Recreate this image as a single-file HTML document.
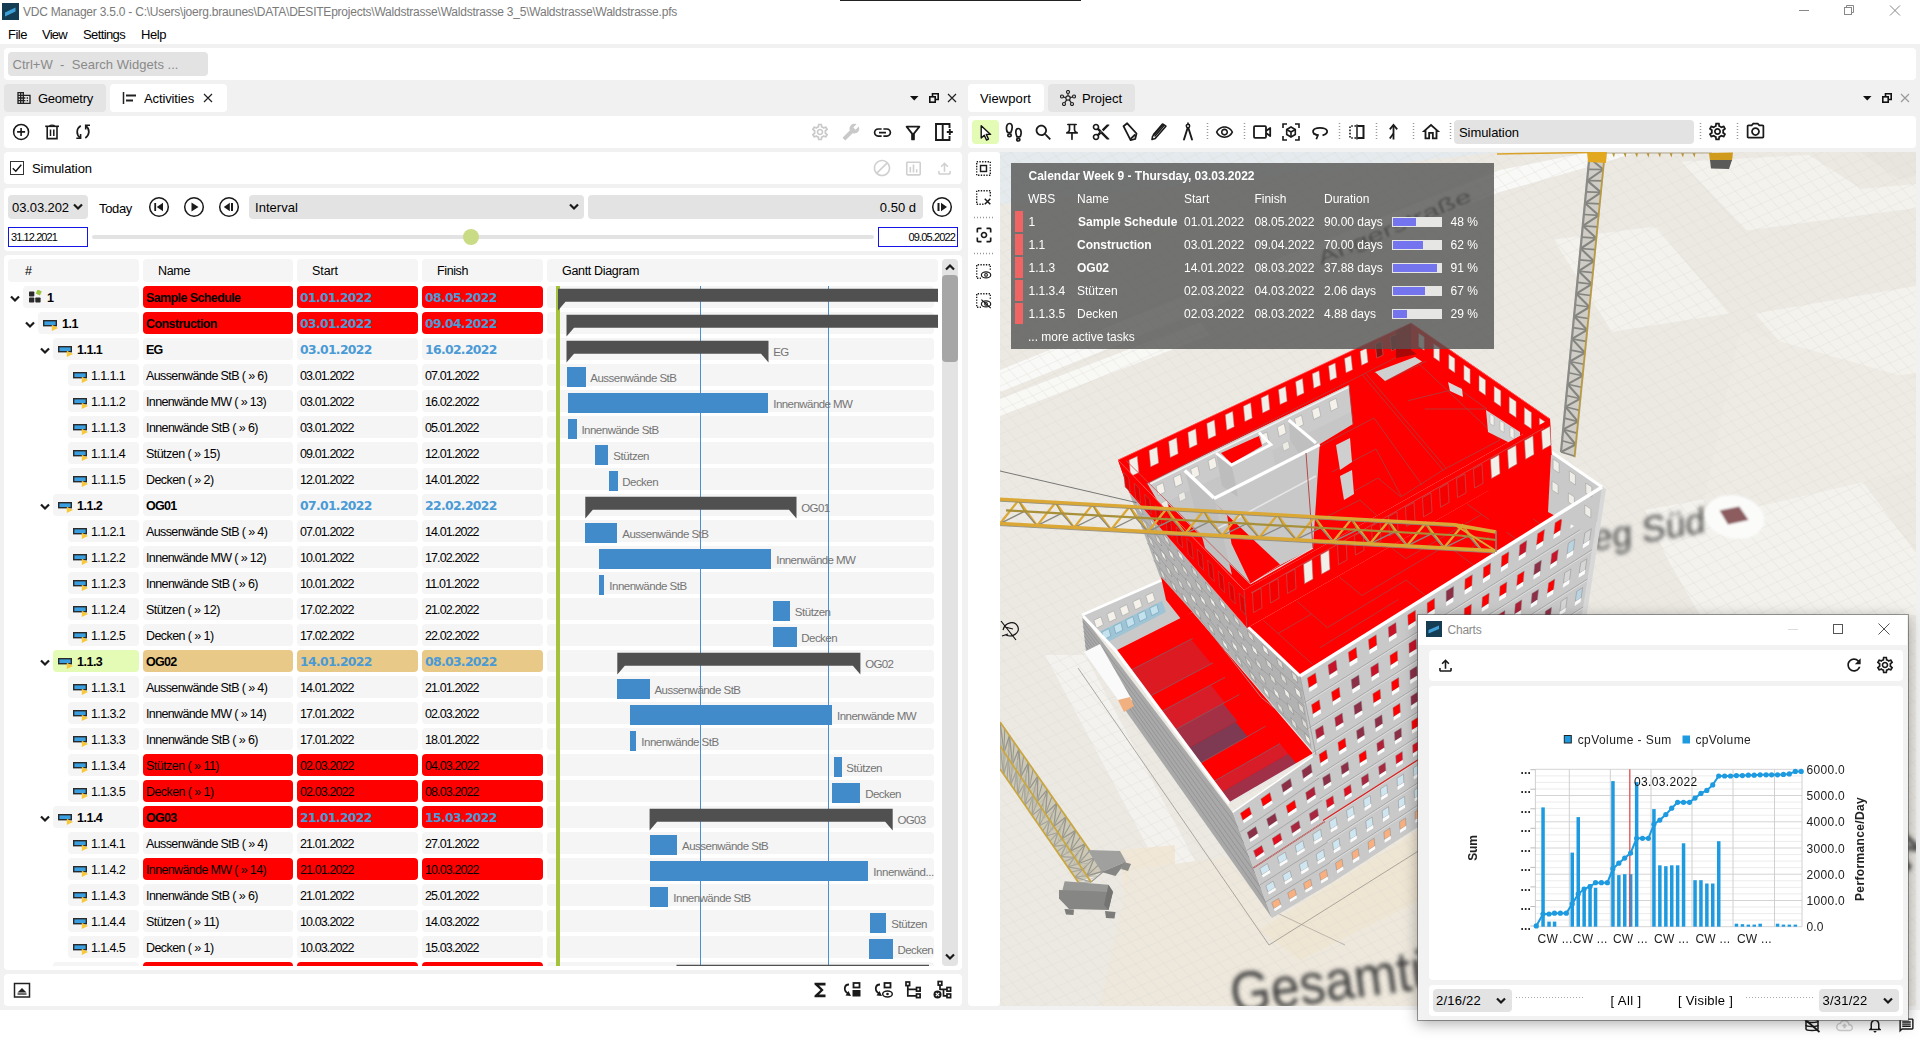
<!DOCTYPE html>
<html><head><meta charset="utf-8"><title>VDC Manager</title>
<style>
html,body{margin:0;padding:0}
body{width:1920px;height:1040px;position:relative;overflow:hidden;background:#f1f1f1;font-family:"Liberation Sans",sans-serif;font-size:12px;color:#000}
div,span,svg{position:absolute}
span{white-space:pre}
.clip{overflow:hidden}
</style></head><body>
<div style="left:0px;top:0px;width:1920px;height:44px;background:#ffffff;"></div>
<div style="left:840px;top:0px;width:241px;height:1px;background:#222;"></div>
<svg style="left:2px;top:3px;" width="17" height="17" viewBox="0 0 17 17"><rect width="17" height="17" fill="#143c52"/><path d="M3 9.5 L13.5 4.5 L13.5 8.5 L3 13.5Z" fill="#3fa0d8"/></svg>
<span style="left:23px;top:3.5px;font-size:12px;line-height:16px;color:#7a7a7a;letter-spacing:-0.226px;">VDC Manager 3.5.0 - C:\Users\joerg.braunes\DATA\DESITEprojects\Waldstrasse\Waldstrasse 3_5\Waldstrasse\Waldstrasse.pfs</span>
<svg style="left:1790px;top:0px;" width="120" height="22" viewBox="0 0 120 22"><g fill="none" stroke="#888" stroke-width="1"><path d="M9 10.5h10"/><rect x="54.5" y="7.500" width="7" height="7"/><path d="M56.500 7.500v-2h7v7h-2"/><path d="M100 5.500l10 10M110 5.500l-10 10"/></g></svg>
<span style="left:8px;top:25.5px;font-size:13px;line-height:17px;letter-spacing:-0.487px;">File</span>
<span style="left:42px;top:25.5px;font-size:13px;line-height:17px;letter-spacing:-0.735px;">View</span>
<span style="left:83px;top:25.5px;font-size:13px;line-height:17px;letter-spacing:-0.621px;">Settings</span>
<span style="left:141px;top:25.5px;font-size:13px;line-height:17px;letter-spacing:-0.434px;">Help</span>
<div style="left:4px;top:48px;width:1912px;height:32px;background:#ffffff;border-radius:4px;"></div>
<div style="left:8px;top:52px;width:200px;height:24px;background:#e3e3e3;border-radius:4px;"></div>
<span style="left:12.5px;top:56.0px;font-size:13px;line-height:17px;color:#8a8a8a;letter-spacing:0.032px;">Ctrl+W  -  Search Widgets ...</span>
<div style="left:4px;top:84px;width:102px;height:28px;background:#e4e4e4;border-radius:4px;"></div>
<svg style="left:15.5px;top:90.0px;" width="16" height="16" viewBox="0 0 24 24"><path fill="#222" d="M12 7V3H2v18h20V7H12zM6 19H4v-2h2v2zm0-4H4v-2h2v2zm0-4H4V9h2v2zm0-4H4V5h2v2zm4 12H8v-2h2v2zm0-4H8v-2h2v2zm0-4H8V9h2v2zm0-4H8V5h2v2zm10 12h-8v-2h2v-2h-2v-2h2v-2h-2V9h8v10zm-2-8h-2v2h2v-2zm0 4h-2v2h2v-2z"/></svg>
<span style="left:38px;top:90.0px;font-size:13px;line-height:17px;letter-spacing:-0.258px;">Geometry</span>
<div style="left:110px;top:84px;width:117px;height:28px;background:#ffffff;border-radius:4px;"></div>
<svg style="left:121px;top:91px;" width="16" height="14" viewBox="0 0 16 14"><path d="M2.500 1v12" stroke="#222" stroke-width="1.500"/><path d="M5 4.500h10M5 9.500h7" stroke="#222" stroke-width="1.800"/></svg>
<span style="left:144px;top:90.0px;font-size:13px;line-height:17px;letter-spacing:-0.129px;">Activities</span>
<svg style="left:203px;top:93px;" width="10" height="10" viewBox="0 0 10 10"><path d="M1 1l8 8M9 1l-8 8" stroke="#222" stroke-width="1.200"/></svg>
<svg style="left:910px;top:92px;" width="48" height="12" viewBox="0 0 48 12"><path d="M0 4h8.500l-4.250 4.500z" fill="#111"/><g fill="none" stroke="#111" stroke-width="1.600"><rect x="19.800" y="4.800" width="5.400" height="5.400"/><path d="M22.500 4.500v-2.700h5.700v5.700h-2.700"/></g><path d="M38 2l8 8M46 2l-8 8" stroke="#222" stroke-width="1.200"/></svg>
<div style="left:4px;top:116px;width:958px;height:32px;background:#ffffff;border-radius:4px;"></div>
<svg style="left:11px;top:122px;" width="20" height="20" viewBox="0 0 20 20"><circle cx="10.100" cy="9.900" r="7.500" fill="none" stroke="#1a1a1a" stroke-width="1.500"/><path d="M10.100 5.900v8M6.100 9.900h8" stroke="#1a1a1a" stroke-width="1.600"/></svg>
<svg style="left:43px;top:122px;" width="20" height="20" viewBox="0 0 20 20"><g fill="none" stroke="#1a1a1a" stroke-width="1.600"><path d="M2.200 4.300h13.800"/><path d="M6.500 3.700c1-.9 4.200-.9 5.200 0" stroke-width="1.300"/><path d="M4.200 4.500v12.100h9.800V4.500"/><path d="M7.500 7.500v6.500M10.800 7.500v6.500" stroke-width="1.500"/></g></svg>
<svg style="left:73px;top:122px;" width="20" height="20" viewBox="0 0 20 20"><g fill="none" stroke="#1a1a1a" stroke-width="1.700"><path d="M7.800 3.700C3.200 6.500 3 12.500 7 15.700"/><path d="M12.300 16C16.800 13 17 7.200 13 4"/><path d="M3.300 16.300h4.300v-4.300" stroke-width="1.600"/><path d="M17 3.200h-4.300v4.300" stroke-width="1.600"/></g></svg>
<svg style="left:810.0px;top:122.0px;" width="20" height="20" viewBox="0 0 24 24"><path fill="#c9c9c9" d="M19.43 12.98c.04-.32.07-.64.07-.98 0-.34-.03-.66-.07-.98l2.11-1.65c.19-.15.24-.42.12-.64l-2-3.46c-.09-.16-.26-.25-.44-.25-.06 0-.12.01-.17.03l-2.49 1c-.52-.4-1.08-.73-1.69-.98l-.38-2.65C14.46 2.18 14.25 2 14 2h-4c-.25 0-.46.18-.49.42l-.38 2.65c-.61.25-1.17.59-1.69.98l-2.49-1c-.06-.02-.12-.03-.18-.03-.17 0-.34.09-.43.25l-2 3.46c-.13.22-.07.49.12.64l2.11 1.65c-.04.32-.07.65-.07.98 0 .33.03.66.07.98l-2.11 1.65c-.19.15-.24.42-.12.64l2 3.46c.09.16.26.25.44.25.06 0 .12-.01.17-.03l2.49-1c.52.4 1.08.73 1.69.98l.38 2.65c.03.24.24.42.49.42h4c.25 0 .46-.18.49-.42l.38-2.65c.61-.25 1.17-.59 1.69-.98l2.49 1c.06.02.12.03.18.03.17 0 .34-.09.43-.25l2-3.46c.12-.22.07-.49-.12-.64l-2.11-1.65zm-1.98-1.71c.04.31.05.52.05.73 0 .21-.02.43-.05.73l-.14 1.13.89.7 1.08.84-.7 1.21-1.27-.51-1.04-.42-.9.68c-.43.32-.84.56-1.25.73l-1.06.43-.16 1.13-.2 1.35h-1.4l-.19-1.35-.16-1.13-1.06-.43c-.43-.18-.83-.41-1.23-.71l-.91-.7-1.06.43-1.27.51-.7-1.21 1.08-.84.89-.7-.14-1.13c-.03-.31-.05-.54-.05-.74s.02-.43.05-.73l.14-1.13-.89-.7-1.08-.84.7-1.21 1.27.51 1.04.42.9-.68c.43-.32.84-.56 1.25-.73l1.06-.43.16-1.13.2-1.35h1.39l.19 1.35.16 1.13 1.06.43c.43.18.83.41 1.23.71l.91.7 1.06-.43 1.27-.51.7 1.21-1.07.85-.89.7.14 1.13zM12 8c-2.21 0-4 1.79-4 4s1.79 4 4 4 4-1.79 4-4-1.79-4-4-4zm0 6c-1.1 0-2-.9-2-2s.9-2 2-2 2 .9 2 2-.9 2-2 2z"/></svg>
<svg style="left:842.0px;top:123.0px;transform:scaleX(-1);" width="18" height="18" viewBox="0 0 24 24"><path fill="#c9c9c9" d="M22.7 19l-9.1-9.1c.9-2.3.4-5-1.5-6.9-2-2-5-2.4-7.4-1.3L9 6 6 9 1.6 4.7C.4 7.1.9 10.1 2.9 12.1c1.9 1.9 4.6 2.4 6.9 1.5l9.1 9.1c.4.4 1 .4 1.4 0l2.3-2.3c.5-.4.5-1.1.1-1.4z"/></svg>
<svg style="left:871.5px;top:121.5px;" width="21" height="21" viewBox="0 0 24 24"><path fill="#1a1a1a" d="M3.9 12c0-1.71 1.39-3.1 3.1-3.1h4V7H7c-2.76 0-5 2.24-5 5s2.24 5 5 5h4v-1.9H7c-1.71 0-3.1-1.39-3.1-3.1zM8 13h8v-2H8v2zm9-6h-4v1.9h4c1.71 0 3.1 1.39 3.1 3.1s-1.39 3.1-3.1 3.1h-4V17h4c2.76 0 5-2.24 5-5s-2.24-5-5-5z"/></svg>
<svg style="left:901.5px;top:121.5px;" width="22" height="22" viewBox="0 0 24 24"><path fill="#1a1a1a" d="M7 6h10l-5.01 6.3L7 6zm-2.75-.39C6.27 8.2 10 13 10 13v6c0 .55.45 1 1 1h2c.55 0 1-.45 1-1v-6s3.72-4.8 5.74-7.39c.51-.66.04-1.61-.79-1.61H5.04c-.83 0-1.3.95-.79 1.61z"/></svg>
<svg style="left:934px;top:122px;" width="20" height="20" viewBox="0 0 20 20"><g fill="none" stroke="#1a1a1a" stroke-width="1.900"><path d="M15.500 6V2H2v16h13.500v-4"/><path d="M8.700 2v16"/><path d="M12.800 10h6M15.800 7v6"/></g></svg>
<div style="left:4px;top:152px;width:958px;height:32px;background:#ffffff;border-radius:4px;"></div>
<svg style="left:10px;top:161px;" width="14" height="14" viewBox="0 0 14 14"><rect x="0.500" y="0.500" width="13" height="13" fill="#fff" stroke="#333"/><path d="M2.800 7.200l3 3 5.500-6.500" fill="none" stroke="#111" stroke-width="1.400"/></svg>
<span style="left:32px;top:160.0px;font-size:13px;line-height:17px;letter-spacing:-0.069px;">Simulation</span>
<svg style="left:872.0px;top:158.0px;" width="20" height="20" viewBox="0 0 24 24"><path fill="#d0d0d0" d="M12 2C6.480 2 2 6.480 2 12s4.480 10 10 10 10-4.480 10-10S17.520 2 12 2zM4 12c0-4.420 3.580-8 8-8 1.850 0 3.550.63 4.900 1.690L5.690 16.900C4.630 15.550 4 13.850 4 12zm8 8c-1.850 0-3.550-.63-4.900-1.690L18.310 7.100C19.370 8.450 20 10.150 20 12c0 4.420-3.580 8-8 8z"/></svg>
<svg style="left:903.5px;top:158.5px;" width="19" height="19" viewBox="0 0 24 24"><path fill="#d0d0d0" d="M9 17H7v-7h2v7zm4 0h-2V7h2v10zm4 0h-2v-4h2v4zm2.500 2.100h-15V5h15v14.100zm0-16.100h-15c-1.100 0-2 .9-2 2v14c0 1.100.9 2 2 2h15c1.100 0 2-.9 2-2V5c0-1.100-.9-2-2-2z"/></svg>
<svg style="left:934.5px;top:158.5px;" width="19" height="19" viewBox="0 0 24 24"><path fill="#d0d0d0" d="M18 15v3H6v-3H4v3c0 1.100.9 2 2 2h12c1.100 0 2-.9 2-2v-3h-2zM7 9l1.410 1.410L11 7.830V16h2V7.830l2.590 2.580L17 9l-5-5-5 5z"/></svg>
<div style="left:4px;top:188px;width:958px;height:63px;background:#ffffff;border-radius:4px;"></div>
<div style="left:8px;top:195px;width:80px;height:24px;background:#e3e3e3;border-radius:4px;"></div>
<span style="left:12px;top:199.0px;font-size:13px;line-height:17px;letter-spacing:-0.092px;">03.03.202</span>
<svg style="left:73px;top:203px;" width="10" height="8" viewBox="0 0 10 8"><path d="M1 1.500l4 4 4-4" fill="none" stroke="#1a1a1a" stroke-width="2.200"/></svg>
<span style="left:99px;top:200.0px;font-size:13px;line-height:17px;letter-spacing:-0.338px;">Today</span>
<svg style="left:148px;top:196px;" width="22" height="22" viewBox="0 0 22 22"><circle cx="11" cy="11" r="9.300" fill="none" stroke="#1a1a1a" stroke-width="1.500"/><path d="M7.200 7v8" stroke="#1a1a1a" stroke-width="1.800"/><path d="M15 6.800v8.400L8.800 11z" fill="#1a1a1a"/></svg>
<svg style="left:183px;top:196px;" width="22" height="22" viewBox="0 0 22 22"><circle cx="11" cy="11" r="9.300" fill="none" stroke="#1a1a1a" stroke-width="1.500"/><path d="M8.500 6.500v9L15.500 11z" fill="#1a1a1a"/></svg>
<svg style="left:218px;top:196px;" width="22" height="22" viewBox="0 0 22 22"><circle cx="11" cy="11" r="9.300" fill="none" stroke="#1a1a1a" stroke-width="1.500"/><path d="M14 7v8" stroke="#1a1a1a" stroke-width="2"/><path d="M11.800 6.800v8.400L5.800 11z" fill="#1a1a1a"/></svg>
<div style="left:249px;top:195px;width:335px;height:24px;background:#e3e3e3;border-radius:4px;"></div>
<span style="left:255px;top:199.0px;font-size:13px;line-height:17px;letter-spacing:0.047px;">Interval</span>
<svg style="left:569px;top:203px;" width="10" height="8" viewBox="0 0 10 8"><path d="M1 1.500l4 4 4-4" fill="none" stroke="#1a1a1a" stroke-width="2.200"/></svg>
<div style="left:588px;top:195px;width:335px;height:24px;background:#e3e3e3;border-radius:4px;"></div>
<span style="right:1004px;top:199.0px;font-size:13px;line-height:17px;">0.50 d</span>
<svg style="left:931px;top:196px;" width="22" height="22" viewBox="0 0 22 22"><circle cx="11" cy="11" r="9.300" fill="none" stroke="#1a1a1a" stroke-width="1.500"/><path d="M7.500 7v8" stroke="#1a1a1a" stroke-width="2"/><path d="M10 6.800v8.400L16 11z" fill="#1a1a1a"/></svg>
<div style="left:8px;top:227px;width:80px;height:20px;background:#ffffff;box-sizing:border-box;border:1px solid #1414e6;"></div>
<span style="left:11px;top:230.0px;font-size:11px;line-height:15px;letter-spacing:-0.905px;">31.12.2021</span>
<div style="left:878px;top:227px;width:80px;height:20px;background:#ffffff;box-sizing:border-box;border:1px solid #1414e6;"></div>
<span style="right:965px;top:230.0px;font-size:11px;line-height:15px;letter-spacing:-0.850px;">09.05.2022</span>
<div style="left:92px;top:235px;width:782px;height:4px;background:#e3e3e3;border-radius:2px;"></div>
<div style="left:463px;top:229px;width:16px;height:16px;background:#cadb85;border-radius:8px;"></div>
<div style="left:4px;top:255px;width:958px;height:715px;background:#ffffff;border-radius:4px;"></div>
<div class="clip" style="left:4px;top:255px;width:958px;height:711px;">
<div style="left:4px;top:4px;width:131px;height:23px;background:#f5f5f5;border-radius:4px;"></div>
<span style="left:21px;top:7.8px;font-size:12.5px;line-height:16.5px;letter-spacing:0.049px;">#</span>
<div style="left:139px;top:4px;width:150px;height:23px;background:#f5f5f5;border-radius:4px;"></div>
<span style="left:154px;top:7.8px;font-size:12.5px;line-height:16.5px;letter-spacing:-0.335px;">Name</span>
<div style="left:293px;top:4px;width:121px;height:23px;background:#f5f5f5;border-radius:4px;"></div>
<span style="left:308px;top:7.8px;font-size:12.5px;line-height:16.5px;letter-spacing:-0.079px;">Start</span>
<div style="left:418px;top:4px;width:121px;height:23px;background:#f5f5f5;border-radius:4px;"></div>
<span style="left:433px;top:7.8px;font-size:12.5px;line-height:16.5px;letter-spacing:-0.390px;">Finish</span>
<div style="left:543px;top:4px;width:391px;height:23px;background:#f5f5f5;border-radius:4px;"></div>
<span style="left:558px;top:7.8px;font-size:12.5px;line-height:16.5px;letter-spacing:-0.329px;">Gantt Diagram</span>
<div style="left:938px;top:4px;width:16px;height:707px;background:#e3e3e3;border-radius:4px;"></div>
<div style="left:938px;top:20px;width:16px;height:87px;background:#a6a6a6;border-radius:4px;"></div>
<svg style="left:941px;top:8px;" width="10" height="8" viewBox="0 0 10 8"><path d="M1 6.500l4-4 4 4" fill="none" stroke="#1a1a1a" stroke-width="2.200"/></svg>
<svg style="left:941px;top:698px;" width="10" height="8" viewBox="0 0 10 8"><path d="M1 1.500l4 4 4-4" fill="none" stroke="#1a1a1a" stroke-width="2.200"/></svg>
<div style="left:543px;top:31px;width:387px;height:22px;background:#f5f5f5;border-radius:4px;"></div>
<div style="left:543px;top:57px;width:387px;height:22px;background:#f5f5f5;border-radius:4px;"></div>
<div style="left:543px;top:83px;width:387px;height:22px;background:#f5f5f5;border-radius:4px;"></div>
<div style="left:543px;top:109px;width:387px;height:22px;background:#f5f5f5;border-radius:4px;"></div>
<div style="left:543px;top:135px;width:387px;height:22px;background:#f5f5f5;border-radius:4px;"></div>
<div style="left:543px;top:161px;width:387px;height:22px;background:#f5f5f5;border-radius:4px;"></div>
<div style="left:543px;top:187px;width:387px;height:22px;background:#f5f5f5;border-radius:4px;"></div>
<div style="left:543px;top:213px;width:387px;height:22px;background:#f5f5f5;border-radius:4px;"></div>
<div style="left:543px;top:239px;width:387px;height:22px;background:#f5f5f5;border-radius:4px;"></div>
<div style="left:543px;top:265px;width:387px;height:22px;background:#f5f5f5;border-radius:4px;"></div>
<div style="left:543px;top:291px;width:387px;height:22px;background:#f5f5f5;border-radius:4px;"></div>
<div style="left:543px;top:317px;width:387px;height:22px;background:#f5f5f5;border-radius:4px;"></div>
<div style="left:543px;top:343px;width:387px;height:22px;background:#f5f5f5;border-radius:4px;"></div>
<div style="left:543px;top:369px;width:387px;height:22px;background:#f5f5f5;border-radius:4px;"></div>
<div style="left:543px;top:395px;width:387px;height:22px;background:#f5f5f5;border-radius:4px;"></div>
<div style="left:543px;top:421px;width:387px;height:22px;background:#f5f5f5;border-radius:4px;"></div>
<div style="left:543px;top:447px;width:387px;height:22px;background:#f5f5f5;border-radius:4px;"></div>
<div style="left:543px;top:473px;width:387px;height:22px;background:#f5f5f5;border-radius:4px;"></div>
<div style="left:543px;top:499px;width:387px;height:22px;background:#f5f5f5;border-radius:4px;"></div>
<div style="left:543px;top:525px;width:387px;height:22px;background:#f5f5f5;border-radius:4px;"></div>
<div style="left:543px;top:551px;width:387px;height:22px;background:#f5f5f5;border-radius:4px;"></div>
<div style="left:543px;top:577px;width:387px;height:22px;background:#f5f5f5;border-radius:4px;"></div>
<div style="left:543px;top:603px;width:387px;height:22px;background:#f5f5f5;border-radius:4px;"></div>
<div style="left:543px;top:629px;width:387px;height:22px;background:#f5f5f5;border-radius:4px;"></div>
<div style="left:543px;top:655px;width:387px;height:22px;background:#f5f5f5;border-radius:4px;"></div>
<div style="left:543px;top:681px;width:387px;height:22px;background:#f5f5f5;border-radius:4px;"></div>
<div style="left:543px;top:707px;width:387px;height:22px;background:#f5f5f5;border-radius:4px;"></div>
<div style="left:19px;top:31px;width:116px;height:22px;background:#f5f5f5;border-radius:4px;"></div>
<svg style="left:6.199999999999999px;top:40.30000000000001px;" width="10" height="8" viewBox="0 0 10 8"><path d="M1 1.500l4 4 4-4" fill="none" stroke="#1a1a1a" stroke-width="2.200"/></svg>
<svg style="left:25px;top:34.5px;" width="14" height="14" viewBox="0 0 14 14"><rect x="0" y="1.500" width="5.300" height="5" rx="0.800" fill="#2a2a2a"/><rect x="0" y="7.500" width="5.300" height="5" rx="0.800" fill="#2a2a2a"/><rect x="6.300" y="7.500" width="5.300" height="5" rx="0.800" fill="#2a2a2a"/><rect x="7.500" y="0.200" width="4.600" height="4.600" rx="0.600" fill="#9bc53d" transform="rotate(25 9.800 2.500)"/></svg>
<span style="left:43px;top:35.1px;font-size:12.5px;line-height:16.5px;font-weight:700;letter-spacing:-0.626px;">1</span>
<div style="left:139px;top:31px;width:150px;height:22px;background:#ff0000;border-radius:4px;"></div>
<div style="left:293px;top:31px;width:121px;height:22px;background:#ff0000;border-radius:4px;"></div>
<div style="left:418px;top:31px;width:121px;height:22px;background:#ff0000;border-radius:4px;"></div>
<span style="left:142px;top:35.1px;font-size:12.5px;line-height:16.5px;font-weight:700;letter-spacing:-0.607px;">Sample Schedule</span>
<span style="left:296px;top:34.8px;font-size:12.4px;line-height:16.4px;font-weight:700;color:#4a9ad6;font-family:'DejaVu Sans',sans-serif;letter-spacing:-0.664px;">01.01.2022</span>
<span style="left:421px;top:34.8px;font-size:12.4px;line-height:16.4px;font-weight:700;color:#4a9ad6;font-family:'DejaVu Sans',sans-serif;letter-spacing:-0.664px;">08.05.2022</span>
<div style="left:34px;top:57px;width:101px;height:22px;background:#f5f5f5;border-radius:4px;"></div>
<svg style="left:21.2px;top:66.30000000000001px;" width="10" height="8" viewBox="0 0 10 8"><path d="M1 1.500l4 4 4-4" fill="none" stroke="#1a1a1a" stroke-width="2.200"/></svg>
<svg style="left:39px;top:64.80000000000001px;" width="16" height="12" viewBox="0 0 16 12"><rect x="0.700" y="0.700" width="12.600" height="5" fill="#3a9fe0" stroke="#2a2a2a" stroke-width="1.400"/><path d="M8.800 4.800l6.200 3.100-6.200 3.100z" fill="#f7c83a"/></svg>
<span style="left:58px;top:61.1px;font-size:12.5px;line-height:16.5px;font-weight:700;letter-spacing:-0.521px;">1.1</span>
<div style="left:139px;top:57px;width:150px;height:22px;background:#ff0000;border-radius:4px;"></div>
<div style="left:293px;top:57px;width:121px;height:22px;background:#ff0000;border-radius:4px;"></div>
<div style="left:418px;top:57px;width:121px;height:22px;background:#ff0000;border-radius:4px;"></div>
<span style="left:142px;top:61.1px;font-size:12.5px;line-height:16.5px;font-weight:700;letter-spacing:-0.570px;">Construction</span>
<span style="left:296px;top:60.8px;font-size:12.4px;line-height:16.4px;font-weight:700;color:#4a9ad6;font-family:'DejaVu Sans',sans-serif;letter-spacing:-0.664px;">03.01.2022</span>
<span style="left:421px;top:60.8px;font-size:12.4px;line-height:16.4px;font-weight:700;color:#4a9ad6;font-family:'DejaVu Sans',sans-serif;letter-spacing:-0.664px;">09.04.2022</span>
<div style="left:49px;top:83px;width:86px;height:22px;background:#f5f5f5;border-radius:4px;"></div>
<svg style="left:36.2px;top:92.30000000000001px;" width="10" height="8" viewBox="0 0 10 8"><path d="M1 1.500l4 4 4-4" fill="none" stroke="#1a1a1a" stroke-width="2.200"/></svg>
<svg style="left:54px;top:90.80000000000001px;" width="16" height="12" viewBox="0 0 16 12"><rect x="0.700" y="0.700" width="12.600" height="5" fill="#3a9fe0" stroke="#2a2a2a" stroke-width="1.400"/><path d="M8.800 4.800l6.200 3.100-6.200 3.100z" fill="#f7c83a"/></svg>
<span style="left:73px;top:87.1px;font-size:12.5px;line-height:16.5px;font-weight:700;letter-spacing:-0.500px;">1.1.1</span>
<div style="left:139px;top:83px;width:150px;height:22px;background:#f5f5f5;border-radius:4px;"></div>
<div style="left:293px;top:83px;width:121px;height:22px;background:#f5f5f5;border-radius:4px;"></div>
<div style="left:418px;top:83px;width:121px;height:22px;background:#f5f5f5;border-radius:4px;"></div>
<span style="left:142px;top:87.1px;font-size:12.5px;line-height:16.5px;font-weight:700;letter-spacing:-0.795px;">EG</span>
<span style="left:296px;top:86.8px;font-size:12.4px;line-height:16.4px;font-weight:700;color:#4a9ad6;font-family:'DejaVu Sans',sans-serif;letter-spacing:-0.664px;">03.01.2022</span>
<span style="left:421px;top:86.8px;font-size:12.4px;line-height:16.4px;font-weight:700;color:#4a9ad6;font-family:'DejaVu Sans',sans-serif;letter-spacing:-0.664px;">16.02.2022</span>
<div style="left:64px;top:109px;width:71px;height:22px;background:#f5f5f5;border-radius:4px;"></div>
<svg style="left:69px;top:116.80000000000001px;" width="16" height="12" viewBox="0 0 16 12"><rect x="0.700" y="0.700" width="12.600" height="5" fill="#3a9fe0" stroke="#2a2a2a" stroke-width="1.400"/><path d="M8.800 4.800l6.200 3.100-6.200 3.100z" fill="#f7c83a"/></svg>
<span style="left:87px;top:113.1px;font-size:12.5px;line-height:16.5px;letter-spacing:-0.601px;">1.1.1.1</span>
<div style="left:139px;top:109px;width:150px;height:22px;background:#f5f5f5;border-radius:4px;"></div>
<div style="left:293px;top:109px;width:121px;height:22px;background:#f5f5f5;border-radius:4px;"></div>
<div style="left:418px;top:109px;width:121px;height:22px;background:#f5f5f5;border-radius:4px;"></div>
<span style="left:142px;top:113.1px;font-size:12.5px;line-height:16.5px;letter-spacing:-0.616px;">Aussenwände StB ( » 6)</span>
<span style="left:296px;top:113.1px;font-size:12.5px;line-height:16.5px;letter-spacing:-0.895px;">03.01.2022</span>
<span style="left:421px;top:113.1px;font-size:12.5px;line-height:16.5px;letter-spacing:-0.895px;">07.01.2022</span>
<div style="left:64px;top:135px;width:71px;height:22px;background:#f5f5f5;border-radius:4px;"></div>
<svg style="left:69px;top:142.8px;" width="16" height="12" viewBox="0 0 16 12"><rect x="0.700" y="0.700" width="12.600" height="5" fill="#3a9fe0" stroke="#2a2a2a" stroke-width="1.400"/><path d="M8.800 4.800l6.200 3.100-6.200 3.100z" fill="#f7c83a"/></svg>
<span style="left:87px;top:139.1px;font-size:12.5px;line-height:16.5px;letter-spacing:-0.601px;">1.1.1.2</span>
<div style="left:139px;top:135px;width:150px;height:22px;background:#f5f5f5;border-radius:4px;"></div>
<div style="left:293px;top:135px;width:121px;height:22px;background:#f5f5f5;border-radius:4px;"></div>
<div style="left:418px;top:135px;width:121px;height:22px;background:#f5f5f5;border-radius:4px;"></div>
<span style="left:142px;top:139.1px;font-size:12.5px;line-height:16.5px;letter-spacing:-0.638px;">Innenwände MW ( » 13)</span>
<span style="left:296px;top:139.1px;font-size:12.5px;line-height:16.5px;letter-spacing:-0.895px;">03.01.2022</span>
<span style="left:421px;top:139.1px;font-size:12.5px;line-height:16.5px;letter-spacing:-0.895px;">16.02.2022</span>
<div style="left:64px;top:161px;width:71px;height:22px;background:#f5f5f5;border-radius:4px;"></div>
<svg style="left:69px;top:168.8px;" width="16" height="12" viewBox="0 0 16 12"><rect x="0.700" y="0.700" width="12.600" height="5" fill="#3a9fe0" stroke="#2a2a2a" stroke-width="1.400"/><path d="M8.800 4.800l6.200 3.100-6.200 3.100z" fill="#f7c83a"/></svg>
<span style="left:87px;top:165.1px;font-size:12.5px;line-height:16.5px;letter-spacing:-0.601px;">1.1.1.3</span>
<div style="left:139px;top:161px;width:150px;height:22px;background:#f5f5f5;border-radius:4px;"></div>
<div style="left:293px;top:161px;width:121px;height:22px;background:#f5f5f5;border-radius:4px;"></div>
<div style="left:418px;top:161px;width:121px;height:22px;background:#f5f5f5;border-radius:4px;"></div>
<span style="left:142px;top:165.1px;font-size:12.5px;line-height:16.5px;letter-spacing:-0.595px;">Innenwände StB ( » 6)</span>
<span style="left:296px;top:165.1px;font-size:12.5px;line-height:16.5px;letter-spacing:-0.895px;">03.01.2022</span>
<span style="left:421px;top:165.1px;font-size:12.5px;line-height:16.5px;letter-spacing:-0.895px;">05.01.2022</span>
<div style="left:64px;top:187px;width:71px;height:22px;background:#f5f5f5;border-radius:4px;"></div>
<svg style="left:69px;top:194.8px;" width="16" height="12" viewBox="0 0 16 12"><rect x="0.700" y="0.700" width="12.600" height="5" fill="#3a9fe0" stroke="#2a2a2a" stroke-width="1.400"/><path d="M8.800 4.800l6.200 3.100-6.200 3.100z" fill="#f7c83a"/></svg>
<span style="left:87px;top:191.1px;font-size:12.5px;line-height:16.5px;letter-spacing:-0.601px;">1.1.1.4</span>
<div style="left:139px;top:187px;width:150px;height:22px;background:#f5f5f5;border-radius:4px;"></div>
<div style="left:293px;top:187px;width:121px;height:22px;background:#f5f5f5;border-radius:4px;"></div>
<div style="left:418px;top:187px;width:121px;height:22px;background:#f5f5f5;border-radius:4px;"></div>
<span style="left:142px;top:191.1px;font-size:12.5px;line-height:16.5px;letter-spacing:-0.549px;">Stützen ( » 15)</span>
<span style="left:296px;top:191.1px;font-size:12.5px;line-height:16.5px;letter-spacing:-0.895px;">09.01.2022</span>
<span style="left:421px;top:191.1px;font-size:12.5px;line-height:16.5px;letter-spacing:-0.895px;">12.01.2022</span>
<div style="left:64px;top:213px;width:71px;height:22px;background:#f5f5f5;border-radius:4px;"></div>
<svg style="left:69px;top:220.8px;" width="16" height="12" viewBox="0 0 16 12"><rect x="0.700" y="0.700" width="12.600" height="5" fill="#3a9fe0" stroke="#2a2a2a" stroke-width="1.400"/><path d="M8.800 4.800l6.200 3.100-6.200 3.100z" fill="#f7c83a"/></svg>
<span style="left:87px;top:217.1px;font-size:12.5px;line-height:16.5px;letter-spacing:-0.601px;">1.1.1.5</span>
<div style="left:139px;top:213px;width:150px;height:22px;background:#f5f5f5;border-radius:4px;"></div>
<div style="left:293px;top:213px;width:121px;height:22px;background:#f5f5f5;border-radius:4px;"></div>
<div style="left:418px;top:213px;width:121px;height:22px;background:#f5f5f5;border-radius:4px;"></div>
<span style="left:142px;top:217.1px;font-size:12.5px;line-height:16.5px;letter-spacing:-0.580px;">Decken ( » 2)</span>
<span style="left:296px;top:217.1px;font-size:12.5px;line-height:16.5px;letter-spacing:-0.895px;">12.01.2022</span>
<span style="left:421px;top:217.1px;font-size:12.5px;line-height:16.5px;letter-spacing:-0.895px;">14.01.2022</span>
<div style="left:49px;top:239px;width:86px;height:22px;background:#f5f5f5;border-radius:4px;"></div>
<svg style="left:36.2px;top:248.3px;" width="10" height="8" viewBox="0 0 10 8"><path d="M1 1.500l4 4 4-4" fill="none" stroke="#1a1a1a" stroke-width="2.200"/></svg>
<svg style="left:54px;top:246.8px;" width="16" height="12" viewBox="0 0 16 12"><rect x="0.700" y="0.700" width="12.600" height="5" fill="#3a9fe0" stroke="#2a2a2a" stroke-width="1.400"/><path d="M8.800 4.800l6.200 3.100-6.200 3.100z" fill="#f7c83a"/></svg>
<span style="left:73px;top:243.1px;font-size:12.5px;line-height:16.5px;font-weight:700;letter-spacing:-0.500px;">1.1.2</span>
<div style="left:139px;top:239px;width:150px;height:22px;background:#f5f5f5;border-radius:4px;"></div>
<div style="left:293px;top:239px;width:121px;height:22px;background:#f5f5f5;border-radius:4px;"></div>
<div style="left:418px;top:239px;width:121px;height:22px;background:#f5f5f5;border-radius:4px;"></div>
<span style="left:142px;top:243.1px;font-size:12.5px;line-height:16.5px;font-weight:700;letter-spacing:-0.734px;">OG01</span>
<span style="left:296px;top:242.8px;font-size:12.4px;line-height:16.4px;font-weight:700;color:#4a9ad6;font-family:'DejaVu Sans',sans-serif;letter-spacing:-0.664px;">07.01.2022</span>
<span style="left:421px;top:242.8px;font-size:12.4px;line-height:16.4px;font-weight:700;color:#4a9ad6;font-family:'DejaVu Sans',sans-serif;letter-spacing:-0.664px;">22.02.2022</span>
<div style="left:64px;top:265px;width:71px;height:22px;background:#f5f5f5;border-radius:4px;"></div>
<svg style="left:69px;top:272.79999999999995px;" width="16" height="12" viewBox="0 0 16 12"><rect x="0.700" y="0.700" width="12.600" height="5" fill="#3a9fe0" stroke="#2a2a2a" stroke-width="1.400"/><path d="M8.800 4.800l6.200 3.100-6.200 3.100z" fill="#f7c83a"/></svg>
<span style="left:87px;top:269.1px;font-size:12.5px;line-height:16.5px;letter-spacing:-0.601px;">1.1.2.1</span>
<div style="left:139px;top:265px;width:150px;height:22px;background:#f5f5f5;border-radius:4px;"></div>
<div style="left:293px;top:265px;width:121px;height:22px;background:#f5f5f5;border-radius:4px;"></div>
<div style="left:418px;top:265px;width:121px;height:22px;background:#f5f5f5;border-radius:4px;"></div>
<span style="left:142px;top:269.1px;font-size:12.5px;line-height:16.5px;letter-spacing:-0.616px;">Aussenwände StB ( » 4)</span>
<span style="left:296px;top:269.1px;font-size:12.5px;line-height:16.5px;letter-spacing:-0.895px;">07.01.2022</span>
<span style="left:421px;top:269.1px;font-size:12.5px;line-height:16.5px;letter-spacing:-0.895px;">14.01.2022</span>
<div style="left:64px;top:291px;width:71px;height:22px;background:#f5f5f5;border-radius:4px;"></div>
<svg style="left:69px;top:298.79999999999995px;" width="16" height="12" viewBox="0 0 16 12"><rect x="0.700" y="0.700" width="12.600" height="5" fill="#3a9fe0" stroke="#2a2a2a" stroke-width="1.400"/><path d="M8.800 4.800l6.200 3.100-6.200 3.100z" fill="#f7c83a"/></svg>
<span style="left:87px;top:295.1px;font-size:12.5px;line-height:16.5px;letter-spacing:-0.601px;">1.1.2.2</span>
<div style="left:139px;top:291px;width:150px;height:22px;background:#f5f5f5;border-radius:4px;"></div>
<div style="left:293px;top:291px;width:121px;height:22px;background:#f5f5f5;border-radius:4px;"></div>
<div style="left:418px;top:291px;width:121px;height:22px;background:#f5f5f5;border-radius:4px;"></div>
<span style="left:142px;top:295.1px;font-size:12.5px;line-height:16.5px;letter-spacing:-0.638px;">Innenwände MW ( » 12)</span>
<span style="left:296px;top:295.1px;font-size:12.5px;line-height:16.5px;letter-spacing:-0.895px;">10.01.2022</span>
<span style="left:421px;top:295.1px;font-size:12.5px;line-height:16.5px;letter-spacing:-0.895px;">17.02.2022</span>
<div style="left:64px;top:317px;width:71px;height:22px;background:#f5f5f5;border-radius:4px;"></div>
<svg style="left:69px;top:324.79999999999995px;" width="16" height="12" viewBox="0 0 16 12"><rect x="0.700" y="0.700" width="12.600" height="5" fill="#3a9fe0" stroke="#2a2a2a" stroke-width="1.400"/><path d="M8.800 4.800l6.200 3.100-6.200 3.100z" fill="#f7c83a"/></svg>
<span style="left:87px;top:321.1px;font-size:12.5px;line-height:16.5px;letter-spacing:-0.601px;">1.1.2.3</span>
<div style="left:139px;top:317px;width:150px;height:22px;background:#f5f5f5;border-radius:4px;"></div>
<div style="left:293px;top:317px;width:121px;height:22px;background:#f5f5f5;border-radius:4px;"></div>
<div style="left:418px;top:317px;width:121px;height:22px;background:#f5f5f5;border-radius:4px;"></div>
<span style="left:142px;top:321.1px;font-size:12.5px;line-height:16.5px;letter-spacing:-0.595px;">Innenwände StB ( » 6)</span>
<span style="left:296px;top:321.1px;font-size:12.5px;line-height:16.5px;letter-spacing:-0.895px;">10.01.2022</span>
<span style="left:421px;top:321.1px;font-size:12.5px;line-height:16.5px;letter-spacing:-0.803px;">11.01.2022</span>
<div style="left:64px;top:343px;width:71px;height:22px;background:#f5f5f5;border-radius:4px;"></div>
<svg style="left:69px;top:350.79999999999995px;" width="16" height="12" viewBox="0 0 16 12"><rect x="0.700" y="0.700" width="12.600" height="5" fill="#3a9fe0" stroke="#2a2a2a" stroke-width="1.400"/><path d="M8.800 4.800l6.200 3.100-6.200 3.100z" fill="#f7c83a"/></svg>
<span style="left:87px;top:347.1px;font-size:12.5px;line-height:16.5px;letter-spacing:-0.601px;">1.1.2.4</span>
<div style="left:139px;top:343px;width:150px;height:22px;background:#f5f5f5;border-radius:4px;"></div>
<div style="left:293px;top:343px;width:121px;height:22px;background:#f5f5f5;border-radius:4px;"></div>
<div style="left:418px;top:343px;width:121px;height:22px;background:#f5f5f5;border-radius:4px;"></div>
<span style="left:142px;top:347.1px;font-size:12.5px;line-height:16.5px;letter-spacing:-0.549px;">Stützen ( » 12)</span>
<span style="left:296px;top:347.1px;font-size:12.5px;line-height:16.5px;letter-spacing:-0.895px;">17.02.2022</span>
<span style="left:421px;top:347.1px;font-size:12.5px;line-height:16.5px;letter-spacing:-0.895px;">21.02.2022</span>
<div style="left:64px;top:369px;width:71px;height:22px;background:#f5f5f5;border-radius:4px;"></div>
<svg style="left:69px;top:376.79999999999995px;" width="16" height="12" viewBox="0 0 16 12"><rect x="0.700" y="0.700" width="12.600" height="5" fill="#3a9fe0" stroke="#2a2a2a" stroke-width="1.400"/><path d="M8.800 4.800l6.200 3.100-6.200 3.100z" fill="#f7c83a"/></svg>
<span style="left:87px;top:373.1px;font-size:12.5px;line-height:16.5px;letter-spacing:-0.601px;">1.1.2.5</span>
<div style="left:139px;top:369px;width:150px;height:22px;background:#f5f5f5;border-radius:4px;"></div>
<div style="left:293px;top:369px;width:121px;height:22px;background:#f5f5f5;border-radius:4px;"></div>
<div style="left:418px;top:369px;width:121px;height:22px;background:#f5f5f5;border-radius:4px;"></div>
<span style="left:142px;top:373.1px;font-size:12.5px;line-height:16.5px;letter-spacing:-0.580px;">Decken ( » 1)</span>
<span style="left:296px;top:373.1px;font-size:12.5px;line-height:16.5px;letter-spacing:-0.895px;">17.02.2022</span>
<span style="left:421px;top:373.1px;font-size:12.5px;line-height:16.5px;letter-spacing:-0.895px;">22.02.2022</span>
<div style="left:49px;top:395px;width:86px;height:22px;background:#e4fbb6;border-radius:4px;"></div>
<svg style="left:36.2px;top:404.29999999999995px;" width="10" height="8" viewBox="0 0 10 8"><path d="M1 1.500l4 4 4-4" fill="none" stroke="#1a1a1a" stroke-width="2.200"/></svg>
<svg style="left:54px;top:402.79999999999995px;" width="16" height="12" viewBox="0 0 16 12"><rect x="0.700" y="0.700" width="12.600" height="5" fill="#3a9fe0" stroke="#2a2a2a" stroke-width="1.400"/><path d="M8.800 4.800l6.200 3.100-6.200 3.100z" fill="#f7c83a"/></svg>
<span style="left:73px;top:399.1px;font-size:12.5px;line-height:16.5px;font-weight:700;letter-spacing:-0.500px;">1.1.3</span>
<div style="left:139px;top:395px;width:150px;height:22px;background:#e8c987;border-radius:4px;"></div>
<div style="left:293px;top:395px;width:121px;height:22px;background:#e8c987;border-radius:4px;"></div>
<div style="left:418px;top:395px;width:121px;height:22px;background:#e8c987;border-radius:4px;"></div>
<span style="left:142px;top:399.1px;font-size:12.5px;line-height:16.5px;font-weight:700;letter-spacing:-0.734px;">OG02</span>
<span style="left:296px;top:398.8px;font-size:12.4px;line-height:16.4px;font-weight:700;color:#4a9ad6;font-family:'DejaVu Sans',sans-serif;letter-spacing:-0.664px;">14.01.2022</span>
<span style="left:421px;top:398.8px;font-size:12.4px;line-height:16.4px;font-weight:700;color:#4a9ad6;font-family:'DejaVu Sans',sans-serif;letter-spacing:-0.664px;">08.03.2022</span>
<div style="left:64px;top:421px;width:71px;height:22px;background:#f5f5f5;border-radius:4px;"></div>
<svg style="left:69px;top:428.79999999999995px;" width="16" height="12" viewBox="0 0 16 12"><rect x="0.700" y="0.700" width="12.600" height="5" fill="#3a9fe0" stroke="#2a2a2a" stroke-width="1.400"/><path d="M8.800 4.800l6.200 3.100-6.200 3.100z" fill="#f7c83a"/></svg>
<span style="left:87px;top:425.1px;font-size:12.5px;line-height:16.5px;letter-spacing:-0.601px;">1.1.3.1</span>
<div style="left:139px;top:421px;width:150px;height:22px;background:#f5f5f5;border-radius:4px;"></div>
<div style="left:293px;top:421px;width:121px;height:22px;background:#f5f5f5;border-radius:4px;"></div>
<div style="left:418px;top:421px;width:121px;height:22px;background:#f5f5f5;border-radius:4px;"></div>
<span style="left:142px;top:425.1px;font-size:12.5px;line-height:16.5px;letter-spacing:-0.616px;">Aussenwände StB ( » 4)</span>
<span style="left:296px;top:425.1px;font-size:12.5px;line-height:16.5px;letter-spacing:-0.895px;">14.01.2022</span>
<span style="left:421px;top:425.1px;font-size:12.5px;line-height:16.5px;letter-spacing:-0.895px;">21.01.2022</span>
<div style="left:64px;top:447px;width:71px;height:22px;background:#f5f5f5;border-radius:4px;"></div>
<svg style="left:69px;top:454.79999999999995px;" width="16" height="12" viewBox="0 0 16 12"><rect x="0.700" y="0.700" width="12.600" height="5" fill="#3a9fe0" stroke="#2a2a2a" stroke-width="1.400"/><path d="M8.800 4.800l6.200 3.100-6.200 3.100z" fill="#f7c83a"/></svg>
<span style="left:87px;top:451.1px;font-size:12.5px;line-height:16.5px;letter-spacing:-0.601px;">1.1.3.2</span>
<div style="left:139px;top:447px;width:150px;height:22px;background:#f5f5f5;border-radius:4px;"></div>
<div style="left:293px;top:447px;width:121px;height:22px;background:#f5f5f5;border-radius:4px;"></div>
<div style="left:418px;top:447px;width:121px;height:22px;background:#f5f5f5;border-radius:4px;"></div>
<span style="left:142px;top:451.1px;font-size:12.5px;line-height:16.5px;letter-spacing:-0.638px;">Innenwände MW ( » 14)</span>
<span style="left:296px;top:451.1px;font-size:12.5px;line-height:16.5px;letter-spacing:-0.895px;">17.01.2022</span>
<span style="left:421px;top:451.1px;font-size:12.5px;line-height:16.5px;letter-spacing:-0.895px;">02.03.2022</span>
<div style="left:64px;top:473px;width:71px;height:22px;background:#f5f5f5;border-radius:4px;"></div>
<svg style="left:69px;top:480.79999999999995px;" width="16" height="12" viewBox="0 0 16 12"><rect x="0.700" y="0.700" width="12.600" height="5" fill="#3a9fe0" stroke="#2a2a2a" stroke-width="1.400"/><path d="M8.800 4.800l6.200 3.100-6.200 3.100z" fill="#f7c83a"/></svg>
<span style="left:87px;top:477.1px;font-size:12.5px;line-height:16.5px;letter-spacing:-0.601px;">1.1.3.3</span>
<div style="left:139px;top:473px;width:150px;height:22px;background:#f5f5f5;border-radius:4px;"></div>
<div style="left:293px;top:473px;width:121px;height:22px;background:#f5f5f5;border-radius:4px;"></div>
<div style="left:418px;top:473px;width:121px;height:22px;background:#f5f5f5;border-radius:4px;"></div>
<span style="left:142px;top:477.1px;font-size:12.5px;line-height:16.5px;letter-spacing:-0.595px;">Innenwände StB ( » 6)</span>
<span style="left:296px;top:477.1px;font-size:12.5px;line-height:16.5px;letter-spacing:-0.895px;">17.01.2022</span>
<span style="left:421px;top:477.1px;font-size:12.5px;line-height:16.5px;letter-spacing:-0.895px;">18.01.2022</span>
<div style="left:64px;top:499px;width:71px;height:22px;background:#f5f5f5;border-radius:4px;"></div>
<svg style="left:69px;top:506.79999999999995px;" width="16" height="12" viewBox="0 0 16 12"><rect x="0.700" y="0.700" width="12.600" height="5" fill="#3a9fe0" stroke="#2a2a2a" stroke-width="1.400"/><path d="M8.800 4.800l6.200 3.100-6.200 3.100z" fill="#f7c83a"/></svg>
<span style="left:87px;top:503.1px;font-size:12.5px;line-height:16.5px;letter-spacing:-0.601px;">1.1.3.4</span>
<div style="left:139px;top:499px;width:150px;height:22px;background:#ff0000;border-radius:4px;"></div>
<div style="left:293px;top:499px;width:121px;height:22px;background:#ff0000;border-radius:4px;"></div>
<div style="left:418px;top:499px;width:121px;height:22px;background:#ff0000;border-radius:4px;"></div>
<span style="left:142px;top:503.1px;font-size:12.5px;line-height:16.5px;letter-spacing:-0.543px;">Stützen ( » 11)</span>
<span style="left:296px;top:503.1px;font-size:12.5px;line-height:16.5px;letter-spacing:-0.895px;">02.03.2022</span>
<span style="left:421px;top:503.1px;font-size:12.5px;line-height:16.5px;letter-spacing:-0.895px;">04.03.2022</span>
<div style="left:64px;top:525px;width:71px;height:22px;background:#f5f5f5;border-radius:4px;"></div>
<svg style="left:69px;top:532.8px;" width="16" height="12" viewBox="0 0 16 12"><rect x="0.700" y="0.700" width="12.600" height="5" fill="#3a9fe0" stroke="#2a2a2a" stroke-width="1.400"/><path d="M8.800 4.800l6.200 3.100-6.200 3.100z" fill="#f7c83a"/></svg>
<span style="left:87px;top:529.1px;font-size:12.5px;line-height:16.5px;letter-spacing:-0.601px;">1.1.3.5</span>
<div style="left:139px;top:525px;width:150px;height:22px;background:#ff0000;border-radius:4px;"></div>
<div style="left:293px;top:525px;width:121px;height:22px;background:#ff0000;border-radius:4px;"></div>
<div style="left:418px;top:525px;width:121px;height:22px;background:#ff0000;border-radius:4px;"></div>
<span style="left:142px;top:529.1px;font-size:12.5px;line-height:16.5px;letter-spacing:-0.580px;">Decken ( » 1)</span>
<span style="left:296px;top:529.1px;font-size:12.5px;line-height:16.5px;letter-spacing:-0.895px;">02.03.2022</span>
<span style="left:421px;top:529.1px;font-size:12.5px;line-height:16.5px;letter-spacing:-0.895px;">08.03.2022</span>
<div style="left:49px;top:551px;width:86px;height:22px;background:#f5f5f5;border-radius:4px;"></div>
<svg style="left:36.2px;top:560.3px;" width="10" height="8" viewBox="0 0 10 8"><path d="M1 1.500l4 4 4-4" fill="none" stroke="#1a1a1a" stroke-width="2.200"/></svg>
<svg style="left:54px;top:558.8px;" width="16" height="12" viewBox="0 0 16 12"><rect x="0.700" y="0.700" width="12.600" height="5" fill="#3a9fe0" stroke="#2a2a2a" stroke-width="1.400"/><path d="M8.800 4.800l6.200 3.100-6.200 3.100z" fill="#f7c83a"/></svg>
<span style="left:73px;top:555.1px;font-size:12.5px;line-height:16.5px;font-weight:700;letter-spacing:-0.500px;">1.1.4</span>
<div style="left:139px;top:551px;width:150px;height:22px;background:#ff0000;border-radius:4px;"></div>
<div style="left:293px;top:551px;width:121px;height:22px;background:#ff0000;border-radius:4px;"></div>
<div style="left:418px;top:551px;width:121px;height:22px;background:#ff0000;border-radius:4px;"></div>
<span style="left:142px;top:555.1px;font-size:12.5px;line-height:16.5px;font-weight:700;letter-spacing:-0.734px;">OG03</span>
<span style="left:296px;top:554.8px;font-size:12.4px;line-height:16.4px;font-weight:700;color:#4a9ad6;font-family:'DejaVu Sans',sans-serif;letter-spacing:-0.664px;">21.01.2022</span>
<span style="left:421px;top:554.8px;font-size:12.4px;line-height:16.4px;font-weight:700;color:#4a9ad6;font-family:'DejaVu Sans',sans-serif;letter-spacing:-0.664px;">15.03.2022</span>
<div style="left:64px;top:577px;width:71px;height:22px;background:#f5f5f5;border-radius:4px;"></div>
<svg style="left:69px;top:584.8px;" width="16" height="12" viewBox="0 0 16 12"><rect x="0.700" y="0.700" width="12.600" height="5" fill="#3a9fe0" stroke="#2a2a2a" stroke-width="1.400"/><path d="M8.800 4.800l6.200 3.100-6.200 3.100z" fill="#f7c83a"/></svg>
<span style="left:87px;top:581.1px;font-size:12.5px;line-height:16.5px;letter-spacing:-0.601px;">1.1.4.1</span>
<div style="left:139px;top:577px;width:150px;height:22px;background:#f5f5f5;border-radius:4px;"></div>
<div style="left:293px;top:577px;width:121px;height:22px;background:#f5f5f5;border-radius:4px;"></div>
<div style="left:418px;top:577px;width:121px;height:22px;background:#f5f5f5;border-radius:4px;"></div>
<span style="left:142px;top:581.1px;font-size:12.5px;line-height:16.5px;letter-spacing:-0.616px;">Aussenwände StB ( » 4)</span>
<span style="left:296px;top:581.1px;font-size:12.5px;line-height:16.5px;letter-spacing:-0.895px;">21.01.2022</span>
<span style="left:421px;top:581.1px;font-size:12.5px;line-height:16.5px;letter-spacing:-0.895px;">27.01.2022</span>
<div style="left:64px;top:603px;width:71px;height:22px;background:#f5f5f5;border-radius:4px;"></div>
<svg style="left:69px;top:610.8px;" width="16" height="12" viewBox="0 0 16 12"><rect x="0.700" y="0.700" width="12.600" height="5" fill="#3a9fe0" stroke="#2a2a2a" stroke-width="1.400"/><path d="M8.800 4.800l6.200 3.100-6.200 3.100z" fill="#f7c83a"/></svg>
<span style="left:87px;top:607.1px;font-size:12.5px;line-height:16.5px;letter-spacing:-0.601px;">1.1.4.2</span>
<div style="left:139px;top:603px;width:150px;height:22px;background:#ff0000;border-radius:4px;"></div>
<div style="left:293px;top:603px;width:121px;height:22px;background:#ff0000;border-radius:4px;"></div>
<div style="left:418px;top:603px;width:121px;height:22px;background:#ff0000;border-radius:4px;"></div>
<span style="left:142px;top:607.1px;font-size:12.5px;line-height:16.5px;letter-spacing:-0.638px;">Innenwände MW ( » 14)</span>
<span style="left:296px;top:607.1px;font-size:12.5px;line-height:16.5px;letter-spacing:-0.895px;">21.01.2022</span>
<span style="left:421px;top:607.1px;font-size:12.5px;line-height:16.5px;letter-spacing:-0.895px;">10.03.2022</span>
<div style="left:64px;top:629px;width:71px;height:22px;background:#f5f5f5;border-radius:4px;"></div>
<svg style="left:69px;top:636.8px;" width="16" height="12" viewBox="0 0 16 12"><rect x="0.700" y="0.700" width="12.600" height="5" fill="#3a9fe0" stroke="#2a2a2a" stroke-width="1.400"/><path d="M8.800 4.800l6.200 3.100-6.200 3.100z" fill="#f7c83a"/></svg>
<span style="left:87px;top:633.1px;font-size:12.5px;line-height:16.5px;letter-spacing:-0.601px;">1.1.4.3</span>
<div style="left:139px;top:629px;width:150px;height:22px;background:#f5f5f5;border-radius:4px;"></div>
<div style="left:293px;top:629px;width:121px;height:22px;background:#f5f5f5;border-radius:4px;"></div>
<div style="left:418px;top:629px;width:121px;height:22px;background:#f5f5f5;border-radius:4px;"></div>
<span style="left:142px;top:633.1px;font-size:12.5px;line-height:16.5px;letter-spacing:-0.595px;">Innenwände StB ( » 6)</span>
<span style="left:296px;top:633.1px;font-size:12.5px;line-height:16.5px;letter-spacing:-0.895px;">21.01.2022</span>
<span style="left:421px;top:633.1px;font-size:12.5px;line-height:16.5px;letter-spacing:-0.895px;">25.01.2022</span>
<div style="left:64px;top:655px;width:71px;height:22px;background:#f5f5f5;border-radius:4px;"></div>
<svg style="left:69px;top:662.8px;" width="16" height="12" viewBox="0 0 16 12"><rect x="0.700" y="0.700" width="12.600" height="5" fill="#3a9fe0" stroke="#2a2a2a" stroke-width="1.400"/><path d="M8.800 4.800l6.200 3.100-6.200 3.100z" fill="#f7c83a"/></svg>
<span style="left:87px;top:659.1px;font-size:12.5px;line-height:16.5px;letter-spacing:-0.601px;">1.1.4.4</span>
<div style="left:139px;top:655px;width:150px;height:22px;background:#f5f5f5;border-radius:4px;"></div>
<div style="left:293px;top:655px;width:121px;height:22px;background:#f5f5f5;border-radius:4px;"></div>
<div style="left:418px;top:655px;width:121px;height:22px;background:#f5f5f5;border-radius:4px;"></div>
<span style="left:142px;top:659.1px;font-size:12.5px;line-height:16.5px;letter-spacing:-0.543px;">Stützen ( » 11)</span>
<span style="left:296px;top:659.1px;font-size:12.5px;line-height:16.5px;letter-spacing:-0.895px;">10.03.2022</span>
<span style="left:421px;top:659.1px;font-size:12.5px;line-height:16.5px;letter-spacing:-0.895px;">14.03.2022</span>
<div style="left:64px;top:681px;width:71px;height:22px;background:#f5f5f5;border-radius:4px;"></div>
<svg style="left:69px;top:688.8px;" width="16" height="12" viewBox="0 0 16 12"><rect x="0.700" y="0.700" width="12.600" height="5" fill="#3a9fe0" stroke="#2a2a2a" stroke-width="1.400"/><path d="M8.800 4.800l6.200 3.100-6.200 3.100z" fill="#f7c83a"/></svg>
<span style="left:87px;top:685.1px;font-size:12.5px;line-height:16.5px;letter-spacing:-0.601px;">1.1.4.5</span>
<div style="left:139px;top:681px;width:150px;height:22px;background:#f5f5f5;border-radius:4px;"></div>
<div style="left:293px;top:681px;width:121px;height:22px;background:#f5f5f5;border-radius:4px;"></div>
<div style="left:418px;top:681px;width:121px;height:22px;background:#f5f5f5;border-radius:4px;"></div>
<span style="left:142px;top:685.1px;font-size:12.5px;line-height:16.5px;letter-spacing:-0.580px;">Decken ( » 1)</span>
<span style="left:296px;top:685.1px;font-size:12.5px;line-height:16.5px;letter-spacing:-0.895px;">10.03.2022</span>
<span style="left:421px;top:685.1px;font-size:12.5px;line-height:16.5px;letter-spacing:-0.895px;">15.03.2022</span>
<div style="left:49px;top:707px;width:86px;height:22px;background:#f5f5f5;border-radius:4px;"></div>
<svg style="left:36.2px;top:716.3px;" width="10" height="8" viewBox="0 0 10 8"><path d="M1 1.500l4 4 4-4" fill="none" stroke="#1a1a1a" stroke-width="2.200"/></svg>
<svg style="left:54px;top:714.8px;" width="16" height="12" viewBox="0 0 16 12"><rect x="0.700" y="0.700" width="12.600" height="5" fill="#3a9fe0" stroke="#2a2a2a" stroke-width="1.400"/><path d="M8.800 4.800l6.200 3.100-6.200 3.100z" fill="#f7c83a"/></svg>
<span style="left:73px;top:711.1px;font-size:12.5px;line-height:16.5px;font-weight:700;letter-spacing:-0.500px;">1.1.5</span>
<div style="left:139px;top:707px;width:150px;height:22px;background:#ff0000;border-radius:4px;"></div>
<div style="left:293px;top:707px;width:121px;height:22px;background:#ff0000;border-radius:4px;"></div>
<div style="left:418px;top:707px;width:121px;height:22px;background:#ff0000;border-radius:4px;"></div>
<span style="left:142px;top:711.1px;font-size:12.5px;line-height:16.5px;font-weight:700;letter-spacing:-0.734px;">OG04</span>
<span style="left:296px;top:710.8px;font-size:12.4px;line-height:16.4px;font-weight:700;color:#4a9ad6;font-family:'DejaVu Sans',sans-serif;letter-spacing:-0.664px;">28.01.2022</span>
<span style="left:421px;top:710.8px;font-size:12.4px;line-height:16.4px;font-weight:700;color:#4a9ad6;font-family:'DejaVu Sans',sans-serif;letter-spacing:-0.664px;">22.03.2022</span>
<div style="left:552px;top:31px;width:4px;height:700px;background:#a5c23c;"></div>
<div style="left:696px;top:31px;width:1px;height:700px;background:#4a8fd0;"></div>
<div style="left:824px;top:31px;width:1px;height:700px;background:#4a8fd0;"></div>
<div class="clip" style="left:543px;top:29px;width:391px;height:690px;">
<svg style="left:0;top:0" width="391" height="690"><path d="M11 4.699999999999989H398V26.5L390.5 17.69999999999999H18.5L11 26.5Z" fill="#505050"/></svg>
<svg style="left:0;top:0" width="391" height="690"><path d="M19.5 30.69999999999999H398V52.5L390.5 43.69999999999999H27.0L19.5 52.5Z" fill="#505050"/></svg>
<svg style="left:0;top:0" width="391" height="690"><path d="M19.5 56.69999999999999H221.5V78.5L214.0 69.69999999999999H27.0L19.5 78.5Z" fill="#505050"/></svg>
<span style="left:226.29999999999995px;top:60.6px;font-size:11.5px;line-height:15.5px;color:#747474;letter-spacing:-0.696px;">EG</span>
<div style="left:19.5px;top:82.5px;width:19.0px;height:20.5px;background:#428bca;"></div>
<span style="left:43.299999999999955px;top:86.6px;font-size:11.5px;line-height:15.5px;color:#747474;letter-spacing:-0.525px;">Aussenwände StB</span>
<div style="left:21.299999999999955px;top:108.5px;width:200.20000000000005px;height:20.5px;background:#428bca;"></div>
<span style="left:226.29999999999995px;top:112.6px;font-size:11.5px;line-height:15.5px;color:#747474;letter-spacing:-0.556px;">Innenwände MW</span>
<div style="left:21.299999999999955px;top:134.5px;width:8.300000000000068px;height:20.5px;background:#428bca;"></div>
<span style="left:34.39999999999998px;top:138.6px;font-size:11.5px;line-height:15.5px;color:#747474;letter-spacing:-0.505px;">Innenwände StB</span>
<div style="left:48.39999999999998px;top:160.5px;width:13.100000000000023px;height:20.5px;background:#428bca;"></div>
<span style="left:66.29999999999995px;top:164.6px;font-size:11.5px;line-height:15.5px;color:#747474;letter-spacing:-0.467px;">Stützen</span>
<div style="left:61.5px;top:186.5px;width:9.0px;height:20.5px;background:#428bca;"></div>
<span style="left:75.29999999999995px;top:190.6px;font-size:11.5px;line-height:15.5px;color:#747474;letter-spacing:-0.545px;">Decken</span>
<svg style="left:0;top:0" width="391" height="690"><path d="M38.299999999999955 212.7H249.5V234.5L242.0 225.7H45.799999999999955L38.299999999999955 234.5Z" fill="#505050"/></svg>
<span style="left:254.29999999999995px;top:216.6px;font-size:11.5px;line-height:15.5px;color:#747474;letter-spacing:-0.643px;">OG01</span>
<div style="left:38.299999999999955px;top:238.5px;width:32.200000000000045px;height:20.5px;background:#428bca;"></div>
<span style="left:75.29999999999995px;top:242.5px;font-size:11.5px;line-height:15.5px;color:#747474;letter-spacing:-0.525px;">Aussenwände StB</span>
<div style="left:51.700000000000045px;top:264.5px;width:172.79999999999995px;height:20.5px;background:#428bca;"></div>
<span style="left:229.29999999999995px;top:268.5px;font-size:11.5px;line-height:15.5px;color:#747474;letter-spacing:-0.556px;">Innenwände MW</span>
<div style="left:51.700000000000045px;top:290.5px;width:5.7999999999999545px;height:20.5px;background:#428bca;"></div>
<span style="left:62.299999999999955px;top:294.5px;font-size:11.5px;line-height:15.5px;color:#747474;letter-spacing:-0.505px;">Innenwände StB</span>
<div style="left:225.5px;top:316.5px;width:17.5px;height:20.5px;background:#428bca;"></div>
<span style="left:247.79999999999995px;top:320.5px;font-size:11.5px;line-height:15.5px;color:#747474;letter-spacing:-0.467px;">Stützen</span>
<div style="left:225.5px;top:342.5px;width:24.0px;height:20.5px;background:#428bca;"></div>
<span style="left:254.29999999999995px;top:346.5px;font-size:11.5px;line-height:15.5px;color:#747474;letter-spacing:-0.545px;">Decken</span>
<svg style="left:0;top:0" width="391" height="690"><path d="M70.29999999999995 368.70000000000005H313.4V390.5L305.9 381.70000000000005H77.79999999999995L70.29999999999995 390.5Z" fill="#505050"/></svg>
<span style="left:318.19999999999993px;top:372.5px;font-size:11.5px;line-height:15.5px;color:#747474;letter-spacing:-0.643px;">OG02</span>
<div style="left:70.29999999999995px;top:394.5px;width:32.30000000000007px;height:20.5px;background:#428bca;"></div>
<span style="left:107.39999999999998px;top:398.5px;font-size:11.5px;line-height:15.5px;color:#747474;letter-spacing:-0.525px;">Aussenwände StB</span>
<div style="left:83.39999999999998px;top:420.5px;width:201.89999999999998px;height:20.5px;background:#428bca;"></div>
<span style="left:290.0999999999999px;top:424.5px;font-size:11.5px;line-height:15.5px;color:#747474;letter-spacing:-0.556px;">Innenwände MW</span>
<div style="left:83.39999999999998px;top:446.5px;width:6.100000000000023px;height:20.5px;background:#428bca;"></div>
<span style="left:94.29999999999995px;top:450.5px;font-size:11.5px;line-height:15.5px;color:#747474;letter-spacing:-0.505px;">Innenwände StB</span>
<div style="left:286.5px;top:472.5px;width:8.0px;height:20.5px;background:#428bca;"></div>
<span style="left:299.29999999999995px;top:476.5px;font-size:11.5px;line-height:15.5px;color:#747474;letter-spacing:-0.467px;">Stützen</span>
<div style="left:285.29999999999995px;top:498.5px;width:28.100000000000023px;height:20.5px;background:#428bca;"></div>
<span style="left:318.19999999999993px;top:502.5px;font-size:11.5px;line-height:15.5px;color:#747474;letter-spacing:-0.545px;">Decken</span>
<svg style="left:0;top:0" width="391" height="690"><path d="M102.60000000000002 524.7H345.70000000000005V546.5L338.20000000000005 537.7H110.10000000000002L102.60000000000002 546.5Z" fill="#505050"/></svg>
<span style="left:350.5px;top:528.5px;font-size:11.5px;line-height:15.5px;color:#747474;letter-spacing:-0.643px;">OG03</span>
<div style="left:102.60000000000002px;top:550.5px;width:27.699999999999932px;height:20.5px;background:#428bca;"></div>
<span style="left:135.0999999999999px;top:554.5px;font-size:11.5px;line-height:15.5px;color:#747474;letter-spacing:-0.525px;">Aussenwände StB</span>
<div style="left:103.39999999999998px;top:576.5px;width:218.10000000000002px;height:20.5px;background:#428bca;"></div>
<span style="left:326.29999999999995px;top:580.5px;font-size:11.5px;line-height:15.5px;color:#747474;letter-spacing:-0.460px;">Innenwänd...</span>
<div style="left:103.39999999999998px;top:602.5px;width:18.100000000000023px;height:20.5px;background:#428bca;"></div>
<span style="left:126.29999999999995px;top:606.5px;font-size:11.5px;line-height:15.5px;color:#747474;letter-spacing:-0.505px;">Innenwände StB</span>
<div style="left:322.6px;top:628.5px;width:16.899999999999977px;height:20.5px;background:#428bca;"></div>
<span style="left:344.29999999999995px;top:632.5px;font-size:11.5px;line-height:15.5px;color:#747474;letter-spacing:-0.467px;">Stützen</span>
<div style="left:321.5px;top:654.5px;width:24.200000000000045px;height:20.5px;background:#428bca;"></div>
<span style="left:350.5px;top:658.5px;font-size:11.5px;line-height:15.5px;color:#747474;letter-spacing:-0.545px;">Decken</span>
<svg style="left:0;top:0" width="391" height="690"><path d="M129.5 680.7H382V702.5L374.5 693.7H137.0L129.5 702.5Z" fill="#505050"/></svg>
</div>
</div>
<div style="left:4px;top:974px;width:958px;height:32px;background:#ffffff;border-radius:4px;"></div>
<svg style="left:13px;top:981px;" width="18" height="18" viewBox="0 0 18 18"><g fill="none" stroke="#222" stroke-width="1.500"><rect x="1.500" y="2.500" width="15" height="13.500"/></g><path d="M4.500 11.500h9l-4.500-4.500z" fill="#222"/><path d="M4.500 13h9" stroke="#222" stroke-width="1.300"/></svg>
<svg style="left:809.0px;top:979.0px;" width="22" height="22" viewBox="0 0 24 24"><path fill="#1a1a1a" d="M18 4H6v2l6.500 6L6 18v2h12v-3h-7l5-5-5-5h7z"/></svg>
<svg style="left:841px;top:980px;" width="22" height="20" viewBox="0 0 22 20"><g fill="none" stroke="#1a1a1a" stroke-width="1.800"><path d="M8 4.500C3 4.500 2 11 7.500 13.500"/><rect x="12.500" y="3" width="6" height="4.500"/></g><path d="M4.500 15.500l5.500 0.500-2.500-5z" fill="#1a1a1a"/><rect x="11.500" y="10" width="8" height="6.500" fill="#1a1a1a"/></svg>
<svg style="left:872px;top:980px;" width="22" height="20" viewBox="0 0 22 20"><g fill="none" stroke="#1a1a1a" stroke-width="1.800"><path d="M8 4.500C3 4.500 2 11 7.500 13.500"/><rect x="12.500" y="3" width="6" height="4.500"/><ellipse cx="15.500" cy="14" rx="4.800" ry="3" stroke-width="1.500"/></g><path d="M4.500 15.500l5.500 0.500-2.500-5z" fill="#1a1a1a"/><circle cx="15.500" cy="14" r="1.300" fill="#1a1a1a"/></svg>
<svg style="left:904px;top:980px;" width="20" height="20" viewBox="0 0 20 20"><g fill="none" stroke="#1a1a1a" stroke-width="1.700"><rect x="2" y="2" width="3.600" height="3.600"/><rect x="12.500" y="7.500" width="3.600" height="3.600"/><rect x="12.500" y="14" width="3.600" height="3.600"/><path d="M3.800 5.600v10.200h8.700M3.800 9.300h8.700"/></g></svg>
<svg style="left:932px;top:980px;" width="22" height="20" viewBox="0 0 22 20"><g fill="none" stroke="#1a1a1a" stroke-width="1.700"><rect x="6.200" y="1.500" width="3.600" height="3.600"/><rect x="15" y="7.500" width="3.600" height="3.600"/><rect x="15" y="14" width="3.600" height="3.600"/><path d="M8 5.100v5M8 9.300h7M11.500 9.300v6.500h3.500"/></g><circle cx="5.500" cy="14.500" r="4" fill="#1a1a1a"/><path d="M3.800 12.800l3.400 3.400M7.200 12.800l-3.400 3.400" stroke="#fff" stroke-width="1.100"/></svg>
<div style="left:0px;top:1010px;width:1920px;height:30px;background:#ffffff;"></div>
<div style="left:968px;top:84px;width:76px;height:28px;background:#ffffff;border-radius:4px;"></div>
<span style="left:980px;top:90.0px;font-size:13px;line-height:17px;letter-spacing:0.082px;">Viewport</span>
<div style="left:1048px;top:84px;width:87px;height:28px;background:#e4e4e4;border-radius:4px;"></div>
<svg style="left:1060px;top:90px;" width="16" height="16" viewBox="0 0 16 16"><g fill="none" stroke="#222" stroke-width="1.200"><circle cx="8" cy="8" r="2.200"/><circle cx="8" cy="2" r="1.500"/><circle cx="2" cy="6.500" r="1.500"/><circle cx="14" cy="6.500" r="1.500"/><circle cx="4" cy="14" r="1.500"/><circle cx="12" cy="14" r="1.500"/><path d="M8 3.500v2.300M3.500 7l2.400.6M12.500 7l-2.400.6M4.800 12.700l1.900-2.900M11.200 12.700l-1.900-2.900"/></g></svg>
<span style="left:1082px;top:90.0px;font-size:13px;line-height:17px;letter-spacing:-0.065px;">Project</span>
<svg style="left:1863px;top:92px;" width="48" height="12" viewBox="0 0 48 12"><path d="M0 4h8.500l-4.250 4.500z" fill="#111"/><g fill="none" stroke="#111" stroke-width="1.600"><rect x="19.800" y="4.800" width="5.400" height="5.400"/><path d="M22.500 4.500v-2.700h5.700v5.700h-2.700"/></g><path d="M38 2l8 8M46 2l-8 8" stroke="#999" stroke-width="1.200"/></svg>
<div style="left:968px;top:116px;width:948px;height:32px;background:#ffffff;border-radius:4px;"></div>
<div style="left:972px;top:120px;width:27px;height:24px;background:#e4fbb6;border-radius:4px;"></div>
<div style="left:968px;top:152px;width:32px;height:854px;background:#ffffff;border-radius:4px;"></div>
<svg style="left:975px;top:122px;" width="22" height="22" viewBox="0 0 22 22"><path d="M6.200 3.800v12.300l3.100-2.900 2.200 4.800 2-.9-2.200-4.700h4.300z" fill="#fff" stroke="#111" stroke-width="1.400" stroke-linejoin="round"/></svg>
<svg style="left:1003px;top:121px;" width="22" height="22" viewBox="0 0 22 22"><g fill="none" stroke="#1a1a1a" stroke-width="1.700"><path d="M6.500 2.500c-2.200 0-3.200 2.600-3 5.200.2 2.300 1.200 3.800 1.400 3.800h3c.6-1.500 1.300-3.300 1.300-5.200 0-2.400-1.100-3.800-2.700-3.800z"/><ellipse cx="6.500" cy="14.200" rx="1.700" ry="1.400"/><path d="M15.300 7.500c2.100 0 3 2.400 2.800 4.800-.2 2.200-1.100 3.600-1.300 3.600h-2.800c-.6-1.400-1.200-3.100-1.200-4.900 0-2.200 1-3.500 2.500-3.500z"/><ellipse cx="15.300" cy="18.700" rx="1.600" ry="1.300"/></g></svg>
<svg style="left:1033.0px;top:122.0px;" width="21" height="21" viewBox="0 0 24 24"><path fill="#1a1a1a" d="M15.5 14h-.79l-.28-.27C15.41 12.59 16 11.11 16 9.5 16 5.91 13.09 3 9.5 3S3 5.91 3 9.5 5.91 16 9.5 16c1.61 0 3.09-.59 4.23-1.57l.27.28v.79l5 4.99L20.49 19l-4.99-5zm-6 0C7.01 14 5 11.99 5 9.5S7.01 5 9.5 5 14 7.01 14 9.5 11.99 14 9.5 14z"/></svg>
<svg style="left:1062.0px;top:122.0px;" width="20" height="20" viewBox="0 0 24 24"><path fill="#1a1a1a" d="M14 4v5c0 1.120.37 2.160 1 3H9c.65-.86 1-1.900 1-3V4h4m3-2H7c-.55 0-1 .45-1 1s.45 1 1 1h1v5c0 1.660-1.340 3-3 3v2h5.970v7l1 1 1-1v-7H19v-2c-1.660 0-3-1.340-3-3V4h1c.55 0 1-.45 1-1s-.45-1-1-1z"/></svg>
<svg style="left:1090.5px;top:122.0px;" width="20" height="20" viewBox="0 0 24 24"><path fill="#1a1a1a" d="M9.640 7.640c.23-.5.36-1.050.36-1.640 0-2.210-1.790-4-4-4S2 3.790 2 6s1.790 4 4 4c.59 0 1.140-.13 1.640-.36L10 12l-2.360 2.360C7.140 14.130 6.590 14 6 14c-2.210 0-4 1.790-4 4s1.790 4 4 4 4-1.790 4-4c0-.59-.13-1.140-.36-1.640L12 14l7 7h3v-1L9.640 7.640zM6 8c-1.100 0-2-.89-2-2s.9-2 2-2 2 .89 2 2-.9 2-2 2zm0 12c-1.100 0-2-.89-2-2s.9-2 2-2 2 .89 2 2-.9 2-2 2zm6-7.500c-.28 0-.5-.22-.5-.5s.22-.5.5-.5.5.22.5.5-.22.5-.5.5zM19 3l-6 6 2 2 7-7V3h-3z"/></svg>
<svg style="left:1119px;top:121px;" width="22" height="22" viewBox="0 0 22 22"><g fill="none" stroke="#1a1a1a" stroke-width="1.800" stroke-linejoin="round"><path d="M4.500 5.200l3.700-2.900 9.300 10.200-1.300 5.500-4.600 1.200z"/><path d="M11.600 17.800l4.700-4.300"/></g></svg>
<svg style="left:1148px;top:121px;" width="22" height="22" viewBox="0 0 22 22"><g fill="none" stroke="#1a1a1a" stroke-width="1.600" stroke-linejoin="round" stroke-linecap="round"><path d="M4 18.500l.6-3.300L15.300 3.300l2.600 1.900L7.200 17.500z"/><path d="M7 15l9-10.500"/><path d="M5.500 13.500l9-10.500"/></g></svg>
<svg style="left:1177px;top:121px;" width="22" height="22" viewBox="0 0 22 22"><g fill="none" stroke="#1a1a1a" stroke-width="1.900" stroke-linecap="round"><path d="M10.600 7L7 18.500M11.400 7L15 18.500"/><circle cx="11" cy="5" r="1.700" stroke-width="1.500"/><path d="M11 2v1.500" stroke-width="1.500"/></g></svg>
<div style="left:1206px;top:123px;width:1px;height:18px;background:;"></div>
<svg style="left:1206px;top:122px;" width="3" height="20" viewBox="0 0 3 20"><path d="M1.500 1v18" stroke="#999" stroke-width="1.500" stroke-dasharray="1 2"/></svg>
<svg style="left:1215.0px;top:123.0px;" width="19" height="19" viewBox="0 0 24 24"><path fill="#1a1a1a" d="M12 6c3.79 0 7.17 2.13 8.82 5.5C19.17 14.87 15.79 17 12 17s-7.17-2.13-8.82-5.5C4.83 8.13 8.21 6 12 6m0-2C7 4 2.73 7.11 1 11.5 2.73 15.89 7 19 12 19s9.27-3.11 11-7.5C21.27 7.11 17 4 12 4zm0 5c1.38 0 2.5 1.12 2.5 2.5S13.38 14 12 14s-2.5-1.12-2.5-2.5S10.620 9 12 9m0-2c-2.48 0-4.5 2.02-4.500 4.500S9.520 16 12 16s4.500-2.020 4.500-4.500S14.480 7 12 7z"/></svg>
<svg style="left:1243px;top:122px;" width="3" height="20" viewBox="0 0 3 20"><path d="M1.500 1v18" stroke="#999" stroke-width="1.500" stroke-dasharray="1 2"/></svg>
<svg style="left:1251px;top:121px;" width="22" height="22" viewBox="0 0 22 22"><g fill="none" stroke="#1a1a1a" stroke-width="1.800" stroke-linejoin="round"><rect x="3" y="5.200" width="12" height="11.600" rx="1"/><path d="M15 10l4.200-3v8l-4.200-3"/></g></svg>
<svg style="left:1280px;top:121px;" width="22" height="22" viewBox="0 0 22 22"><g fill="none" stroke="#1a1a1a" stroke-width="1.600"><path d="M3 7V3h4M15 3h4v4M19 15v4h-4M7 19H3v-4"/><path d="M11 6l4.300 2.500v5L11 16l-4.300-2.500v-5z"/><path d="M6.700 8.500L11 11l4.300-2.500M11 11v5"/></g></svg>
<svg style="left:1309px;top:121px;" width="22" height="22" viewBox="0 0 22 22"><g fill="none" stroke="#1a1a1a" stroke-width="1.800"><path d="M8.500 14.300C1.500 12.500 3 6.800 11 6.800s10 5.500 2.500 7.600"/><path d="M4.300 12.800l4.700 1.200-1.700 4.200" stroke-width="1.700"/></g></svg>
<svg style="left:1338px;top:122px;" width="3" height="20" viewBox="0 0 3 20"><path d="M1.500 1v18" stroke="#999" stroke-width="1.500" stroke-dasharray="1 2"/></svg>
<svg style="left:1346px;top:121px;" width="22" height="22" viewBox="0 0 22 22"><g fill="none" stroke="#1a1a1a"><path d="M11 3.500v15" stroke-width="1.500"/><path d="M11.500 5h6v12h-6" stroke-width="2"/><path d="M10 5h-6v12h6" stroke-width="1.600" stroke-dasharray="1.600 1.600"/></g></svg>
<svg style="left:1375px;top:122px;" width="3" height="20" viewBox="0 0 3 20"><path d="M1.500 1v18" stroke="#999" stroke-width="1.500" stroke-dasharray="1 2"/></svg>
<svg style="left:1382px;top:121px;" width="22" height="22" viewBox="0 0 22 22"><g fill="none" stroke="#1a1a1a" stroke-width="1.800"><path d="M11.500 4v14.500"/><path d="M7.800 8.300l3.700-4.300 3.700 4.300"/><path d="M11.500 12.500l-3.700 5"/></g></svg>
<svg style="left:1412px;top:122px;" width="3" height="20" viewBox="0 0 3 20"><path d="M1.500 1v18" stroke="#999" stroke-width="1.500" stroke-dasharray="1 2"/></svg>
<svg style="left:1420.0px;top:121.0px;" width="22" height="22" viewBox="0 0 24 24"><path fill="#1a1a1a" d="M12 5.690l5 4.500V18h-2v-6H9v6H7v-7.810l5-4.500M12 3L2 12h3v8h6v-6h2v6h6v-8h3L12 3z"/></svg>
<svg style="left:1449px;top:122px;" width="3" height="20" viewBox="0 0 3 20"><path d="M1.500 1v18" stroke="#999" stroke-width="1.500" stroke-dasharray="1 2"/></svg>
<div style="left:1454px;top:120px;width:240px;height:24px;background:#e3e3e3;border-radius:4px;"></div>
<span style="left:1459px;top:124.0px;font-size:13px;line-height:17px;letter-spacing:-0.069px;">Simulation</span>
<svg style="left:1699px;top:122px;" width="3" height="20" viewBox="0 0 3 20"><path d="M1.500 1v18" stroke="#999" stroke-width="1.500" stroke-dasharray="1 2"/></svg>
<svg style="left:1707.0px;top:121.0px;" width="21" height="21" viewBox="0 0 24 24"><path fill="#1a1a1a" d="M19.43 12.98c.04-.32.07-.64.07-.98 0-.34-.03-.66-.07-.98l2.11-1.65c.19-.15.24-.42.12-.64l-2-3.46c-.09-.16-.26-.25-.44-.25-.06 0-.12.01-.17.03l-2.49 1c-.52-.4-1.08-.73-1.69-.98l-.38-2.65C14.46 2.18 14.25 2 14 2h-4c-.25 0-.46.18-.49.42l-.38 2.65c-.61.25-1.17.59-1.69.98l-2.49-1c-.06-.02-.12-.03-.18-.03-.17 0-.34.09-.43.25l-2 3.46c-.13.22-.07.49.12.64l2.11 1.65c-.04.32-.07.65-.07.98 0 .33.03.66.07.98l-2.11 1.65c-.19.15-.24.42-.12.64l2 3.46c.09.16.26.25.44.25.06 0 .12-.01.17-.03l2.49-1c.52.4 1.08.73 1.69.98l.38 2.65c.03.24.24.42.49.42h4c.25 0 .46-.18.49-.42l.38-2.65c.61-.25 1.17-.59 1.69-.98l2.49 1c.06.02.12.03.18.03.17 0 .34-.09.43-.25l2-3.46c.12-.22.07-.49-.12-.64l-2.11-1.65zm-1.98-1.71c.04.31.05.52.05.73 0 .21-.02.43-.05.73l-.14 1.13.89.7 1.08.84-.7 1.21-1.27-.51-1.04-.42-.9.68c-.43.32-.84.56-1.25.73l-1.06.43-.16 1.13-.2 1.35h-1.4l-.19-1.35-.16-1.13-1.06-.43c-.43-.18-.83-.41-1.23-.71l-.91-.7-1.06.43-1.27.51-.7-1.21 1.08-.84.89-.7-.14-1.13c-.03-.31-.05-.54-.05-.74s.02-.43.05-.73l.14-1.13-.89-.7-1.08-.84.7-1.21 1.27.51 1.04.42.9-.68c.43-.32.84-.56 1.25-.73l1.06-.43.16-1.13.2-1.35h1.39l.19 1.35.16 1.13 1.06.43c.43.18.83.41 1.23.71l.91.7 1.06-.43 1.27-.51.7 1.21-1.07.85-.89.7.14 1.13zM12 8c-2.21 0-4 1.79-4 4s1.79 4 4 4 4-1.79 4-4-1.79-4-4-4zm0 6c-1.1 0-2-.9-2-2s.9-2 2-2 2 .9 2 2-.9 2-2 2z"/></svg>
<svg style="left:1736px;top:122px;" width="3" height="20" viewBox="0 0 3 20"><path d="M1.500 1v18" stroke="#999" stroke-width="1.500" stroke-dasharray="1 2"/></svg>
<svg style="left:1744.5px;top:121.0px;" width="21" height="21" viewBox="0 0 24 24"><path fill="#1a1a1a" d="M14.120 4l1.830 2H20v12H4V6h4.050l1.830-2h4.240M15 2H9L7.170 4H4c-1.100 0-2 .9-2 2v12c0 1.100.9 2 2 2h16c1.100 0 2-.9 2-2V6c0-1.100-.9-2-2-2h-3.170L15 2zm-3 7c1.650 0 3 1.350 3 3s-1.350 3-3 3-3-1.350-3-3 1.350-3 3-3m0-2c-2.760 0-5 2.240-5 5s2.240 5 5 5 5-2.240 5-5-2.240-5-5-5z"/></svg>
<svg style="left:974.8px;top:159.8px;" width="17" height="17" viewBox="0 0 20 20"><g fill="none" stroke="#1a1a1a"><rect x="2" y="2" width="16" height="16" stroke-width="1.600" stroke-dasharray="1.600 1.600"/><rect x="6.500" y="6.500" width="7" height="7" stroke-width="1.700"/></g></svg>
<svg style="left:974.8px;top:188.8px;" width="17" height="17" viewBox="0 0 20 20"><g fill="none" stroke="#1a1a1a"><path d="M10 18H2V2h16v8" stroke-width="1.600" stroke-dasharray="1.600 1.600"/><path d="M11.500 11.500l6.500 6.500M18 11.500l-6.500 6.500" stroke-width="1.800"/></g></svg>
<svg style="left:974px;top:216px;" width="20" height="3" viewBox="0 0 20 3"><path d="M0 1.500h20" stroke="#999" stroke-width="1.500" stroke-dasharray="1 2"/></svg>
<svg style="left:974.0px;top:225.0px;" width="20" height="20" viewBox="0 0 24 24"><path fill="#1a1a1a" d="M5 15H3v4c0 1.100.9 2 2 2h4v-2H5v-4zM5 5h4V3H5c-1.100 0-2 .9-2 2v4h2V5zm14-2h-4v2h4v4h2V5c0-1.100-.9-2-2-2zm0 16h-4v2h4c1.100 0 2-.9 2-2v-4h-2v4zM12 8c-2.210 0-4 1.790-4 4s1.790 4 4 4 4-1.790 4-4-1.790-4-4-4zm0 6c-1.100 0-2-.9-2-2s.9-2 2-2 2 .9 2 2-.9 2-2 2z"/></svg>
<svg style="left:974px;top:252px;" width="20" height="3" viewBox="0 0 20 3"><path d="M0 1.500h20" stroke="#999" stroke-width="1.500" stroke-dasharray="1 2"/></svg>
<svg style="left:974.8px;top:262.5px;" width="17" height="17" viewBox="0 0 20 20"><g fill="none" stroke="#1a1a1a"><path d="M18 8V2H2v16h5" stroke-width="1.600" stroke-dasharray="1.600 1.600"/><ellipse cx="13" cy="14" rx="5.500" ry="3.600" stroke-width="1.400"/><circle cx="13" cy="14" r="1.600" stroke-width="1.300"/></g></svg>
<svg style="left:974.8px;top:291.5px;" width="17" height="17" viewBox="0 0 20 20"><g fill="none" stroke="#1a1a1a"><path d="M18 8V2H2v16h5" stroke-width="1.600" stroke-dasharray="1.600 1.600"/><ellipse cx="13" cy="14" rx="5.500" ry="3.600" stroke-width="1.400"/><circle cx="13" cy="14" r="1.600" stroke-width="1.300"/><path d="M7.500 9l11 10" stroke-width="1.400"/></g></svg>
<svg style="left:1000px;top:152px" width="916" height="854" viewBox="1000 152 916 854"><defs><filter id="b2" x="-10%" y="-30%" width="120%" height="160%"><feGaussianBlur stdDeviation="2.300"/></filter><filter id="b1" x="-10%" y="-30%" width="120%" height="160%"><feGaussianBlur stdDeviation="1.200"/></filter><pattern id="grid" width="11" height="11" patternUnits="userSpaceOnUse" patternTransform="rotate(-24) skewX(18)"><path d="M0 0H11M0 0V11" stroke="#dedad3" stroke-width="0.600" fill="none"/></pattern></defs><rect x="1000" y="152" width="916" height="854" fill="#ece9e3"/><polygon points="1000.0,152.0 1500.0,152.0 1000.0,205.0" fill="#e4eaed"/><polygon points="1553.6,239.6 1656.0,226.6 1729.0,313.6 1612.0,331.8" fill="#f3f2ed"/><polygon points="1681.0,161.7 1809.0,155.0 1861.0,189.0 1916.0,184.0 1916.0,208.0 1747.0,230.5" fill="#f3f2ed"/><polygon points="1755.0,313.6 1916.0,286.0 1916.0,373.0 1820.0,387.6" fill="#f3f2ed"/><polygon points="1860.0,152.0 1916.0,152.0 1916.0,176.0 1900.0,180.0" fill="#e8e5de"/><polygon points="1000.0,370.0 1500.0,170.0 1590.0,152.0 1640.0,152.0 1500.0,192.0 1000.0,392.0" fill="#f9f9f7"/><polygon points="1000.0,399.0 1200.0,322.0 1210.0,335.0 1000.0,416.0" fill="#f8f8f5"/><polygon points="1045.0,655.0 1085.0,655.0 1216.0,900.0 1176.0,900.0" fill="#f3f2ee"/><polygon points="1120.0,850.0 1175.0,845.0 1175.0,940.0 1130.0,950.0" fill="#f1e7d6"/><polygon points="1130.0,870.0 1420.0,830.0 1420.0,1006.0 1100.0,1006.0" fill="#ede7dc"/><polygon points="1260.0,930.0 1420.0,830.0 1420.0,900.0 1300.0,960.0" fill="#efe5d3"/><polygon points="1645.0,510.0 1855.0,472.0 1916.0,553.0 1916.0,615.0 1700.0,615.0 1668.0,560.0" fill="#f3f2ed"/><polygon points="1740.0,330.0 1916.0,380.0 1916.0,470.0 1700.0,520.0" fill="#eeebe5"/><rect x="1000" y="152" width="916" height="854" fill="url(#grid)"/><polyline points="1078.0,668.0 1269.0,945.0 1420.0,850.0" fill="none" stroke="#9a968e" stroke-width="0.8"/><polyline points="1345.0,945.0 1275.0,912.0" fill="none" stroke="#9a968e" stroke-width="0.6"/><g filter="url(#b1)" font-family="'Liberation Sans',sans-serif"><text transform="translate(1321,265) rotate(-23) scale(1,0.62)" font-size="30" fill="#3a3a38">Angerstraße</text></g><g filter="url(#b2)" fill="#3e3e3c" font-family="'Liberation Sans',sans-serif"><text transform="translate(1593,551) rotate(-9.500) skewX(-8)" font-size="36" fill="#4a4a48">eg Süd</text><text transform="translate(1233,1014) rotate(-7.500) scale(1,1.120)" font-size="52">Gesamtübersicht</text><text transform="translate(1905,880) rotate(-65)" font-size="50">W</text></g><g filter="url(#b1)"><ellipse cx="1734.600" cy="517" rx="30" ry="21.500" fill="#fbfbfa" transform="rotate(12 1734.600 517)"/><polygon points="1719.600,510.400 1739.200,506.500 1748.500,520 1728,524.600" fill="#8c5c5e"/></g><polygon points="1588.5,155.0 1605.5,155.0 1575.7,458.0 1560.0,452.0" fill="#d0cdc6"/><polyline points="1589.5,158.0 1604.5,158.0" fill="none" stroke="#858580" stroke-width="1.6800000000000002"/><polyline points="1589.5,158.0 1603.3,169.5" fill="none" stroke="#858580" stroke-width="2.1"/><polyline points="1588.4,169.3 1603.3,169.5" fill="none" stroke="#858580" stroke-width="1.6800000000000002"/><polyline points="1603.3,169.5 1587.3,180.6" fill="none" stroke="#858580" stroke-width="2.1"/><polyline points="1587.3,180.6 1602.2,180.9" fill="none" stroke="#858580" stroke-width="1.6800000000000002"/><polyline points="1587.3,180.6 1601.0,192.4" fill="none" stroke="#858580" stroke-width="2.1"/><polyline points="1586.2,191.9 1601.0,192.4" fill="none" stroke="#858580" stroke-width="1.6800000000000002"/><polyline points="1601.0,192.4 1585.1,203.2" fill="none" stroke="#858580" stroke-width="2.1"/><polyline points="1585.1,203.2 1599.9,203.8" fill="none" stroke="#858580" stroke-width="1.6800000000000002"/><polyline points="1585.1,203.2 1598.7,215.3" fill="none" stroke="#858580" stroke-width="2.1"/><polyline points="1584.0,214.5 1598.7,215.3" fill="none" stroke="#858580" stroke-width="1.6800000000000002"/><polyline points="1598.7,215.3 1582.9,225.8" fill="none" stroke="#858580" stroke-width="2.1"/><polyline points="1582.9,225.8 1597.6,226.8" fill="none" stroke="#858580" stroke-width="1.6800000000000002"/><polyline points="1582.9,225.8 1596.4,238.2" fill="none" stroke="#858580" stroke-width="2.1"/><polyline points="1581.8,237.2 1596.4,238.2" fill="none" stroke="#858580" stroke-width="1.6800000000000002"/><polyline points="1596.4,238.2 1580.7,248.5" fill="none" stroke="#858580" stroke-width="2.1"/><polyline points="1580.7,248.5 1595.3,249.7" fill="none" stroke="#858580" stroke-width="1.6800000000000002"/><polyline points="1580.7,248.5 1594.1,261.2" fill="none" stroke="#858580" stroke-width="2.1"/><polyline points="1579.6,259.8 1594.1,261.2" fill="none" stroke="#858580" stroke-width="1.6800000000000002"/><polyline points="1594.1,261.2 1578.5,271.1" fill="none" stroke="#858580" stroke-width="2.1"/><polyline points="1578.5,271.1 1593.0,272.6" fill="none" stroke="#858580" stroke-width="1.6800000000000002"/><polyline points="1578.5,271.1 1591.8,284.1" fill="none" stroke="#858580" stroke-width="2.1"/><polyline points="1577.4,282.4 1591.8,284.1" fill="none" stroke="#858580" stroke-width="1.6800000000000002"/><polyline points="1591.8,284.1 1576.3,293.7" fill="none" stroke="#858580" stroke-width="2.1"/><polyline points="1576.3,293.7 1590.7,295.5" fill="none" stroke="#858580" stroke-width="1.6800000000000002"/><polyline points="1576.3,293.7 1589.5,307.0" fill="none" stroke="#858580" stroke-width="2.1"/><polyline points="1575.2,305.0 1589.5,307.0" fill="none" stroke="#858580" stroke-width="1.6800000000000002"/><polyline points="1589.5,307.0 1574.2,316.3" fill="none" stroke="#858580" stroke-width="2.1"/><polyline points="1574.2,316.3 1588.3,318.5" fill="none" stroke="#858580" stroke-width="1.6800000000000002"/><polyline points="1574.2,316.3 1587.2,329.9" fill="none" stroke="#858580" stroke-width="2.1"/><polyline points="1573.1,327.6 1587.2,329.9" fill="none" stroke="#858580" stroke-width="1.6800000000000002"/><polyline points="1587.2,329.9 1572.0,338.9" fill="none" stroke="#858580" stroke-width="2.1"/><polyline points="1572.0,338.9 1586.0,341.4" fill="none" stroke="#858580" stroke-width="1.6800000000000002"/><polyline points="1572.0,338.9 1584.9,352.8" fill="none" stroke="#858580" stroke-width="2.1"/><polyline points="1570.9,350.2 1584.9,352.8" fill="none" stroke="#858580" stroke-width="1.6800000000000002"/><polyline points="1584.9,352.8 1569.8,361.5" fill="none" stroke="#858580" stroke-width="2.1"/><polyline points="1569.8,361.5 1583.7,364.3" fill="none" stroke="#858580" stroke-width="1.6800000000000002"/><polyline points="1569.8,361.5 1582.6,375.8" fill="none" stroke="#858580" stroke-width="2.1"/><polyline points="1568.7,372.8 1582.6,375.8" fill="none" stroke="#858580" stroke-width="1.6800000000000002"/><polyline points="1582.6,375.8 1567.6,384.2" fill="none" stroke="#858580" stroke-width="2.1"/><polyline points="1567.6,384.2 1581.4,387.2" fill="none" stroke="#858580" stroke-width="1.6800000000000002"/><polyline points="1567.6,384.2 1580.3,398.7" fill="none" stroke="#858580" stroke-width="2.1"/><polyline points="1566.5,395.5 1580.3,398.7" fill="none" stroke="#858580" stroke-width="1.6800000000000002"/><polyline points="1580.3,398.7 1565.4,406.8" fill="none" stroke="#858580" stroke-width="2.1"/><polyline points="1565.4,406.8 1579.1,410.2" fill="none" stroke="#858580" stroke-width="1.6800000000000002"/><polyline points="1565.4,406.8 1578.0,421.6" fill="none" stroke="#858580" stroke-width="2.1"/><polyline points="1564.3,418.1 1578.0,421.6" fill="none" stroke="#858580" stroke-width="1.6800000000000002"/><polyline points="1578.0,421.6 1563.2,429.4" fill="none" stroke="#858580" stroke-width="2.1"/><polyline points="1563.2,429.4 1576.8,433.1" fill="none" stroke="#858580" stroke-width="1.6800000000000002"/><polyline points="1563.2,429.4 1575.7,444.5" fill="none" stroke="#858580" stroke-width="2.1"/><polyline points="1562.1,440.7 1575.7,444.5" fill="none" stroke="#858580" stroke-width="1.6800000000000002"/><polyline points="1575.7,444.5 1561.0,452.0" fill="none" stroke="#858580" stroke-width="2.1"/><polyline points="1561.0,452.0 1574.5,456.0" fill="none" stroke="#858580" stroke-width="1.6800000000000002"/><polyline points="1589.5,156.0 1561.0,452.0" fill="none" stroke="#8a8a86" stroke-width="2.2"/><polyline points="1604.5,156.0 1574.5,457.0" fill="none" stroke="#b89a45" stroke-width="1.8"/><polygon points="1587.0,152.0 1607.0,152.0 1606.0,163.0 1588.0,162.0" fill="#e2a81f"/><polyline points="1497.0,154.0 1590.0,152.5" fill="none" stroke="#d8a22a" stroke-width="1.6"/><polygon points="1612.0,153.0 1615.0,153.0 1614.0,157.5" fill="#b9952f"/><polygon points="1623.5,153.0 1626.5,153.0 1625.5,157.5" fill="#b9952f"/><polygon points="1635.0,153.0 1638.0,153.0 1637.0,157.5" fill="#b9952f"/><polygon points="1646.5,153.0 1649.5,153.0 1648.5,157.5" fill="#b9952f"/><polygon points="1658.0,153.0 1661.0,153.0 1660.0,157.5" fill="#b9952f"/><polygon points="1669.5,153.0 1672.5,153.0 1671.5,157.5" fill="#b9952f"/><polygon points="1681.0,153.0 1684.0,153.0 1683.0,157.5" fill="#b9952f"/><polygon points="1692.5,153.0 1695.5,153.0 1694.5,157.5" fill="#b9952f"/><polyline points="1606.0,153.0 1712.0,153.0" fill="none" stroke="#b0a58a" stroke-width="1"/><polygon points="1709.0,153.0 1733.0,152.5 1732.0,161.0 1710.0,161.0" fill="#d09a1c"/><polygon points="1710.0,160.0 1732.0,160.0 1729.0,169.0 1711.0,168.5" fill="#5a5a58"/><polygon points="1082.0,615.0 1233.0,813.0 1272.0,918.0 1123.0,707.0 1086.0,652.0" fill="#a9a9a9"/><polyline points="1082.7,621.6 1238.6,828.0" fill="none" stroke="#8c8c8c" stroke-width="0.7"/><polyline points="1083.2,626.4 1244.1,843.0" fill="none" stroke="#8c8c8c" stroke-width="0.7"/><polyline points="1083.7,631.1 1249.7,858.0" fill="none" stroke="#8c8c8c" stroke-width="0.7"/><polyline points="1084.3,635.9 1255.3,873.0" fill="none" stroke="#8c8c8c" stroke-width="0.7"/><polyline points="1084.8,640.6 1260.9,888.0" fill="none" stroke="#8c8c8c" stroke-width="0.7"/><polyline points="1085.3,645.4 1266.4,903.0" fill="none" stroke="#8c8c8c" stroke-width="0.7"/><polygon points="1084.0,652.0 1100.0,644.0 1132.0,700.0 1123.0,707.0" fill="#fafafa"/><polygon points="1118.0,700.0 1130.0,697.0 1134.0,706.0 1124.0,712.0" fill="#f0b080"/><polygon points="1082.0,615.0 1162.0,580.0 1192.5,612.0 1116.0,650.5" fill="#c9c9c9"/><polygon points="1116.0,650.5 1192.5,612.0 1313.4,754.0 1229.4,803.0" fill="#ff0000"/><polygon points="1130.7,670.3 1191.2,639.2 1211.4,663.8 1150.0,696.2" fill="#dc1a22"/><polygon points="1161.4,711.5 1210.7,685.0 1224.8,702.5 1175.0,729.8" fill="#d81c28"/><polygon points="1175.0,729.8 1223.2,703.4 1237.4,721.0 1188.6,748.1" fill="#a43045"/><polygon points="1188.6,748.1 1235.7,721.9 1247.5,736.5 1199.9,763.4" fill="#7d3a52"/><polygon points="1213.5,781.6 1279.9,743.6 1288.2,753.7 1221.5,792.3" fill="#d81c28"/><polygon points="1221.5,792.3 1288.2,753.7 1296.6,763.8 1229.4,803.0" fill="#a03048"/><polyline points="1130.7,670.3 1192.7,638.4" fill="none" stroke="#8a5a66" stroke-width="0.8"/><polyline points="1150.0,696.2 1213.0,662.9" fill="none" stroke="#8a5a66" stroke-width="0.8"/><polyline points="1161.4,711.5 1225.0,677.3" fill="none" stroke="#8a5a66" stroke-width="0.8"/><polyline points="1175.0,729.8 1239.3,694.6" fill="none" stroke="#8a5a66" stroke-width="0.8"/><polyline points="1199.9,763.4 1265.6,726.3" fill="none" stroke="#8a5a66" stroke-width="0.8"/><polyline points="1213.5,781.6 1279.9,743.6" fill="none" stroke="#8a5a66" stroke-width="0.8"/><polygon points="1099.0,632.0 1162.0,601.0 1166.0,612.0 1106.0,643.0" fill="#9ec4d6"/><polygon points="1101.8,632.1 1108.8,628.6 1110.8,636.1 1103.8,639.6" fill="#c4e2ee" stroke="#6f9db3" stroke-width="0.6"/><polygon points="1113.8,626.1 1120.8,622.6 1122.8,630.1 1115.8,633.6" fill="#c4e2ee" stroke="#6f9db3" stroke-width="0.6"/><polygon points="1125.8,620.1 1132.8,616.6 1134.8,624.1 1127.8,627.6" fill="#c4e2ee" stroke="#6f9db3" stroke-width="0.6"/><polygon points="1137.8,614.1 1144.8,610.6 1146.8,618.1 1139.8,621.6" fill="#c4e2ee" stroke="#6f9db3" stroke-width="0.6"/><polygon points="1149.8,608.1 1156.8,604.6 1158.8,612.1 1151.8,615.6" fill="#c4e2ee" stroke="#6f9db3" stroke-width="0.6"/><polygon points="1093.9,620.2 1100.9,616.9 1103.4,624.7 1096.4,628.2" fill="#f4f2ea" stroke="#9a9a9a" stroke-width="0.5"/><polygon points="1106.9,614.1 1113.9,610.8 1116.4,618.6 1109.4,622.1" fill="#f4f2ea" stroke="#9a9a9a" stroke-width="0.5"/><polygon points="1119.8,607.9 1126.8,604.6 1129.3,612.4 1122.3,615.9" fill="#f4f2ea" stroke="#9a9a9a" stroke-width="0.5"/><polygon points="1132.8,601.8 1139.8,598.5 1142.3,606.3 1135.3,609.8" fill="#f4f2ea" stroke="#9a9a9a" stroke-width="0.5"/><polygon points="1145.7,595.7 1152.7,592.4 1155.2,600.2 1148.2,603.7" fill="#f4f2ea" stroke="#9a9a9a" stroke-width="0.5"/><polyline points="1082.0,615.0 1162.0,580.0" fill="none" stroke="#ffffff" stroke-width="2.5"/><polyline points="1083.0,616.0 1116.0,651.0 1229.4,803.5" fill="none" stroke="#ffffff" stroke-width="3.2"/><polyline points="1233.0,813.0 1316.0,755.0" fill="none" stroke="#ffffff" stroke-width="3"/><polyline points="1229.4,803.0 1313.4,754.0" fill="none" stroke="#e8e8e8" stroke-width="1.5"/><polygon points="1129.0,492.0 1247.0,628.0 1300.0,676.0 1316.0,755.0 1192.5,612.0 1160.0,577.0" fill="#b2b2b2"/><polyline points="1135.2,509.0 1250.6,645.4 1303.2,691.8" fill="none" stroke="#9e9e9e" stroke-width="0.8"/><polyline points="1141.4,526.0 1254.2,662.8 1306.4,707.6" fill="none" stroke="#9e9e9e" stroke-width="0.8"/><polyline points="1147.6,543.0 1257.8,680.2 1309.6,723.4" fill="none" stroke="#9e9e9e" stroke-width="0.8"/><polyline points="1153.8,560.0 1261.4,697.6 1312.8,739.2" fill="none" stroke="#9e9e9e" stroke-width="0.8"/><polygon points="1135.4,501.8 1140.4,507.6 1143.0,514.9 1138.1,509.3" fill="#efeee9" stroke="#858585" stroke-width="0.5"/><polygon points="1149.3,517.8 1154.3,523.5 1156.6,530.5 1151.7,524.9" fill="#dddbd5" stroke="#858585" stroke-width="0.5"/><polygon points="1163.2,533.8 1168.2,539.5 1170.2,546.1 1165.3,540.5" fill="#dddbd5" stroke="#858585" stroke-width="0.5"/><polygon points="1177.1,549.8 1182.2,555.6 1184.1,562.0 1179.0,556.2" fill="#efeee9" stroke="#858585" stroke-width="0.5"/><polygon points="1191.2,566.0 1196.2,571.8 1198.1,578.2 1193.0,572.4" fill="#dddbd5" stroke="#858585" stroke-width="0.5"/><polygon points="1205.2,582.2 1210.2,588.0 1212.1,594.3 1207.0,588.5" fill="#dddbd5" stroke="#858585" stroke-width="0.5"/><polygon points="1219.2,598.3 1224.3,604.2 1226.1,610.5 1221.0,604.7" fill="#efeee9" stroke="#858585" stroke-width="0.5"/><polygon points="1233.2,614.5 1238.3,620.3 1240.1,626.6 1235.0,620.8" fill="#dddbd5" stroke="#858585" stroke-width="0.5"/><polygon points="1247.3,630.7 1252.5,635.7 1254.3,642.0 1249.0,637.0" fill="#dddbd5" stroke="#858585" stroke-width="0.5"/><polygon points="1261.9,644.3 1267.2,649.1 1268.8,655.7 1263.6,650.8" fill="#efeee9" stroke="#858585" stroke-width="0.5"/><polygon points="1276.6,657.7 1281.9,662.6 1283.4,669.4 1278.2,664.5" fill="#dddbd5" stroke="#858585" stroke-width="0.5"/><polygon points="1291.3,671.2 1296.5,676.0 1298.0,683.1 1292.8,678.2" fill="#dddbd5" stroke="#858585" stroke-width="0.5"/><polygon points="1141.4,518.5 1146.2,523.9 1148.7,531.3 1144.1,526.0" fill="#dddbd5" stroke="#858585" stroke-width="0.5"/><polygon points="1154.6,533.6 1159.4,539.0 1161.7,546.0 1157.0,540.7" fill="#dddbd5" stroke="#858585" stroke-width="0.5"/><polygon points="1167.9,548.6 1172.6,554.1 1174.6,560.6 1170.0,555.3" fill="#efeee9" stroke="#858585" stroke-width="0.5"/><polygon points="1181.4,564.1 1186.4,569.9 1188.3,576.3 1183.3,570.5" fill="#dddbd5" stroke="#858585" stroke-width="0.5"/><polygon points="1195.3,580.2 1200.4,586.0 1202.2,592.4 1197.2,586.6" fill="#dddbd5" stroke="#858585" stroke-width="0.5"/><polygon points="1209.3,596.3 1214.3,602.1 1216.2,608.5 1211.2,602.7" fill="#efeee9" stroke="#858585" stroke-width="0.5"/><polygon points="1223.3,612.4 1228.3,618.2 1230.1,624.5 1225.1,618.8" fill="#dddbd5" stroke="#858585" stroke-width="0.5"/><polygon points="1237.2,628.5 1242.3,634.3 1244.0,640.6 1239.0,634.8" fill="#dddbd5" stroke="#858585" stroke-width="0.5"/><polygon points="1251.2,644.6 1256.4,649.8 1258.1,656.1 1253.0,650.9" fill="#efeee9" stroke="#858585" stroke-width="0.5"/><polygon points="1265.6,658.7 1270.9,663.8 1272.5,670.3 1267.3,665.2" fill="#dddbd5" stroke="#858585" stroke-width="0.5"/><polygon points="1280.1,672.7 1285.3,677.7 1286.9,684.5 1281.7,679.4" fill="#dddbd5" stroke="#858585" stroke-width="0.5"/><polygon points="1294.6,686.7 1299.8,691.7 1301.3,698.7 1296.1,693.6" fill="#efeee9" stroke="#858585" stroke-width="0.5"/><polygon points="1147.4,535.2 1151.9,540.3 1154.5,547.7 1150.0,542.7" fill="#dddbd5" stroke="#858585" stroke-width="0.5"/><polygon points="1160.0,549.4 1164.5,554.5 1166.8,561.4 1162.4,556.5" fill="#efeee9" stroke="#858585" stroke-width="0.5"/><polygon points="1172.6,563.5 1177.1,568.6 1179.1,575.2 1174.7,570.2" fill="#dddbd5" stroke="#858585" stroke-width="0.5"/><polygon points="1185.6,578.3 1190.6,584.1 1192.5,590.5 1187.5,584.8" fill="#dddbd5" stroke="#858585" stroke-width="0.5"/><polygon points="1199.5,594.4 1204.5,600.2 1206.4,606.6 1201.4,600.8" fill="#efeee9" stroke="#858585" stroke-width="0.5"/><polygon points="1213.4,610.4 1218.4,616.2 1220.3,622.6 1215.3,616.8" fill="#dddbd5" stroke="#858585" stroke-width="0.5"/><polygon points="1227.3,626.5 1232.3,632.3 1234.1,638.6 1229.1,632.8" fill="#dddbd5" stroke="#858585" stroke-width="0.5"/><polygon points="1241.2,642.6 1246.2,648.3 1248.0,654.6 1243.0,648.9" fill="#efeee9" stroke="#858585" stroke-width="0.5"/><polygon points="1255.1,658.6 1260.2,663.9 1262.0,670.3 1256.9,664.9" fill="#dddbd5" stroke="#858585" stroke-width="0.5"/><polygon points="1269.4,673.2 1274.5,678.4 1276.2,685.0 1271.1,679.7" fill="#dddbd5" stroke="#858585" stroke-width="0.5"/><polygon points="1283.7,687.7 1288.8,692.9 1290.3,699.7 1285.2,694.4" fill="#efeee9" stroke="#858585" stroke-width="0.5"/><polygon points="1297.9,702.1 1303.1,707.3 1304.5,714.4 1299.4,709.1" fill="#dddbd5" stroke="#858585" stroke-width="0.5"/><polygon points="1153.3,551.9 1157.6,556.7 1160.2,564.0 1156.0,559.4" fill="#efeee9" stroke="#858585" stroke-width="0.5"/><polygon points="1165.3,565.1 1169.6,569.9 1171.9,576.9 1167.7,572.2" fill="#dddbd5" stroke="#858585" stroke-width="0.5"/><polygon points="1177.3,578.4 1181.6,583.2 1183.6,589.7 1179.4,585.1" fill="#dddbd5" stroke="#858585" stroke-width="0.5"/><polygon points="1189.9,592.6 1194.8,598.4 1196.7,604.8 1191.8,599.0" fill="#efeee9" stroke="#858585" stroke-width="0.5"/><polygon points="1203.7,608.6 1208.7,614.4 1210.6,620.7 1205.6,615.0" fill="#dddbd5" stroke="#858585" stroke-width="0.5"/><polygon points="1217.5,624.6 1222.5,630.3 1224.4,636.7 1219.4,631.0" fill="#dddbd5" stroke="#858585" stroke-width="0.5"/><polygon points="1231.4,640.6 1236.4,646.3 1238.2,652.7 1233.2,646.9" fill="#efeee9" stroke="#858585" stroke-width="0.5"/><polygon points="1245.2,656.6 1250.2,662.3 1252.0,668.6 1247.0,662.9" fill="#dddbd5" stroke="#858585" stroke-width="0.5"/><polygon points="1259.0,672.6 1264.1,678.0 1265.8,684.4 1260.8,678.9" fill="#dddbd5" stroke="#858585" stroke-width="0.5"/><polygon points="1273.1,687.6 1278.2,693.0 1279.8,699.6 1274.8,694.1" fill="#efeee9" stroke="#858585" stroke-width="0.5"/><polygon points="1287.2,702.6 1292.2,708.0 1293.8,714.8 1288.8,709.3" fill="#dddbd5" stroke="#858585" stroke-width="0.5"/><polygon points="1301.3,717.6 1306.3,723.0 1307.8,730.0 1302.8,724.6" fill="#dddbd5" stroke="#858585" stroke-width="0.5"/><polygon points="1159.3,568.6 1163.4,573.0 1166.0,580.4 1162.0,576.1" fill="#dddbd5" stroke="#858585" stroke-width="0.5"/><polygon points="1170.6,580.9 1174.7,585.4 1177.0,592.3 1173.0,588.0" fill="#dddbd5" stroke="#858585" stroke-width="0.5"/><polygon points="1181.9,593.3 1186.0,597.7 1188.0,604.3 1184.1,600.0" fill="#efeee9" stroke="#858585" stroke-width="0.5"/><polygon points="1194.1,606.9 1199.1,612.6 1201.0,619.0 1196.0,613.3" fill="#dddbd5" stroke="#858585" stroke-width="0.5"/><polygon points="1207.9,622.8 1212.8,628.5 1214.7,634.9 1209.8,629.2" fill="#dddbd5" stroke="#858585" stroke-width="0.5"/><polygon points="1221.7,638.7 1226.6,644.5 1228.5,650.8 1223.5,645.1" fill="#efeee9" stroke="#858585" stroke-width="0.5"/><polygon points="1235.4,654.7 1240.4,660.4 1242.2,666.7 1237.3,661.0" fill="#dddbd5" stroke="#858585" stroke-width="0.5"/><polygon points="1249.2,670.6 1254.2,676.3 1255.9,682.6 1251.0,676.9" fill="#dddbd5" stroke="#858585" stroke-width="0.5"/><polygon points="1263.0,686.5 1268.0,692.1 1269.7,698.5 1264.7,692.8" fill="#efeee9" stroke="#858585" stroke-width="0.5"/><polygon points="1276.8,702.1 1281.8,707.6 1283.5,714.2 1278.5,708.6" fill="#dddbd5" stroke="#858585" stroke-width="0.5"/><polygon points="1290.7,717.6 1295.7,723.1 1297.3,730.0 1292.3,724.3" fill="#dddbd5" stroke="#858585" stroke-width="0.5"/><polygon points="1304.6,733.1 1309.6,738.7 1311.0,745.7 1306.1,740.0" fill="#efeee9" stroke="#858585" stroke-width="0.5"/><polygon points="1161.0,577.0 1192.5,612.0 1181.0,619.0 1166.0,600.0" fill="#ff0000"/><polygon points="1300.0,676.0 1602.0,487.0 1565.0,732.0 1333.0,882.0" fill="#c9c9c9"/><polygon points="1233.0,813.0 1316.0,755.0 1333.0,882.0 1272.0,918.0" fill="#c9c9c9"/><polyline points="1304.3,703.0 1597.2,519.1" fill="none" stroke="#a4a4a4" stroke-width="0.9"/><polyline points="1304.3,704.2 1597.2,520.3" fill="none" stroke="#e2e2e2" stroke-width="0.8"/><polyline points="1308.4,728.5 1592.6,549.4" fill="none" stroke="#a4a4a4" stroke-width="0.9"/><polyline points="1308.4,729.7 1592.6,550.6" fill="none" stroke="#e2e2e2" stroke-width="0.8"/><polyline points="1312.3,753.0 1588.2,578.6" fill="none" stroke="#a4a4a4" stroke-width="0.9"/><polyline points="1312.3,754.2 1588.2,579.8" fill="none" stroke="#e2e2e2" stroke-width="0.8"/><polyline points="1316.1,776.5 1583.9,606.5" fill="none" stroke="#a4a4a4" stroke-width="0.9"/><polyline points="1316.1,777.7 1583.9,607.7" fill="none" stroke="#e2e2e2" stroke-width="0.8"/><polyline points="1319.7,799.0 1579.9,633.3" fill="none" stroke="#a4a4a4" stroke-width="0.9"/><polyline points="1319.7,800.2 1579.9,634.5" fill="none" stroke="#e2e2e2" stroke-width="0.8"/><polyline points="1323.1,820.5 1576.0,658.9" fill="none" stroke="#a4a4a4" stroke-width="0.9"/><polyline points="1323.1,821.7 1576.0,660.1" fill="none" stroke="#e2e2e2" stroke-width="0.8"/><polyline points="1326.5,841.5 1572.3,683.8" fill="none" stroke="#a4a4a4" stroke-width="0.9"/><polyline points="1326.5,842.7 1572.3,685.0" fill="none" stroke="#e2e2e2" stroke-width="0.8"/><polyline points="1329.8,862.0 1568.6,708.2" fill="none" stroke="#a4a4a4" stroke-width="0.9"/><polyline points="1329.8,863.2 1568.6,709.4" fill="none" stroke="#e2e2e2" stroke-width="0.8"/><polygon points="1307.4,677.9 1315.5,672.9 1316.9,682.9 1308.9,687.9" fill="#ff0000" stroke="#8a8a8a" stroke-width="0.5"/><polygon points="1308.9,687.9 1316.9,682.9 1317.5,687.0 1309.5,692.0" fill="#fbfbfb"/><polygon points="1328.0,665.0 1336.0,660.0 1337.2,670.2 1329.3,675.2" fill="#c81428" stroke="#8a8a8a" stroke-width="0.5"/><polygon points="1329.3,675.2 1337.2,670.2 1337.7,674.4 1329.8,679.3" fill="#fbfbfb"/><polygon points="1348.3,652.3 1356.2,647.3 1357.2,657.7 1349.4,662.6" fill="#ff0000" stroke="#8a8a8a" stroke-width="0.5"/><polygon points="1349.4,662.6 1357.2,657.7 1357.6,661.9 1349.8,666.7" fill="#fbfbfb"/><polygon points="1368.4,639.7 1376.2,634.8 1376.9,645.3 1369.3,650.1" fill="#ff0000" stroke="#8a8a8a" stroke-width="0.5"/><polygon points="1369.3,650.1 1376.9,645.3 1377.2,649.5 1369.6,654.3" fill="#fbfbfb"/><polygon points="1388.3,627.3 1395.9,622.5 1396.4,633.1 1388.9,637.8" fill="#c81428" stroke="#8a8a8a" stroke-width="0.5"/><polygon points="1388.9,637.8 1396.4,633.1 1396.7,637.3 1389.1,642.1" fill="#fbfbfb"/><polygon points="1407.8,615.0 1415.4,610.3 1415.7,621.0 1408.2,625.7" fill="#ff0000" stroke="#8a8a8a" stroke-width="0.5"/><polygon points="1408.2,625.7 1415.7,621.0 1415.8,625.3 1408.4,630.0" fill="#fbfbfb"/><polygon points="1427.1,602.9 1434.6,598.2 1434.7,609.1 1427.3,613.7" fill="#ff0000" stroke="#8a8a8a" stroke-width="0.5"/><polygon points="1427.3,613.7 1434.7,609.1 1434.7,613.5 1427.4,618.1" fill="#fbfbfb"/><polygon points="1446.2,591.0 1453.6,586.4 1453.4,597.3 1446.2,601.9" fill="#8c3048" stroke="#8a8a8a" stroke-width="0.5"/><polygon points="1446.2,601.9 1453.4,597.3 1453.4,601.8 1446.1,606.3" fill="#fbfbfb"/><polygon points="1465.0,579.2 1472.3,574.7 1471.9,585.7 1464.7,590.2" fill="#ff0000" stroke="#8a8a8a" stroke-width="0.5"/><polygon points="1464.7,590.2 1471.9,585.7 1471.8,590.2 1464.6,594.7" fill="#fbfbfb"/><polygon points="1483.5,567.6 1490.7,563.1 1490.1,574.3 1483.1,578.7" fill="#ff0000" stroke="#8a8a8a" stroke-width="0.5"/><polygon points="1483.1,578.7 1490.1,574.3 1489.9,578.8 1482.9,583.2" fill="#fbfbfb"/><polygon points="1501.8,556.1 1508.9,551.7 1508.1,563.0 1501.1,567.4" fill="#ff0000" stroke="#8a8a8a" stroke-width="0.5"/><polygon points="1501.1,567.4 1508.1,563.0 1507.8,567.6 1500.9,572.0" fill="#fbfbfb"/><polygon points="1519.8,544.9 1526.8,540.5 1525.8,551.9 1519.0,556.2" fill="#c81428" stroke="#8a8a8a" stroke-width="0.5"/><polygon points="1519.0,556.2 1525.8,551.9 1525.5,556.5 1518.6,560.8" fill="#fbfbfb"/><polygon points="1537.6,533.7 1544.5,529.4 1543.3,541.0 1536.5,545.2" fill="#ff0000" stroke="#8a8a8a" stroke-width="0.5"/><polygon points="1536.5,545.2 1543.3,541.0 1542.8,545.6 1536.1,549.9" fill="#fbfbfb"/><polygon points="1555.1,522.8 1561.9,518.5 1560.5,530.2 1553.8,534.4" fill="#ff0000" stroke="#8a8a8a" stroke-width="0.5"/><polygon points="1553.8,534.4 1560.5,530.2 1560.0,534.9 1553.3,539.1" fill="#fbfbfb"/><polygon points="1572.4,512.0 1579.0,507.8 1577.5,519.5 1570.9,523.7" fill="#d6d6d6" stroke="#8a8a8a" stroke-width="0.5"/><polygon points="1570.9,523.7 1577.5,519.5 1576.8,524.3 1570.3,528.4" fill="#fbfbfb"/><polygon points="1589.4,501.3 1595.9,497.2 1594.2,509.1 1587.7,513.1" fill="#b9d3e0" stroke="#8a8a8a" stroke-width="0.5"/><polygon points="1587.7,513.1 1594.2,509.1 1593.5,513.9 1587.0,517.9" fill="#fbfbfb"/><polygon points="1311.5,704.7 1319.3,699.8 1320.6,709.3 1312.9,714.2" fill="#ff0000" stroke="#8a8a8a" stroke-width="0.5"/><polygon points="1312.9,714.2 1320.6,709.3 1321.2,713.2 1313.5,718.0" fill="#fbfbfb"/><polygon points="1331.4,692.1 1339.2,687.3 1340.3,696.9 1332.7,701.7" fill="#ff0000" stroke="#8a8a8a" stroke-width="0.5"/><polygon points="1332.7,701.7 1340.3,696.9 1340.8,700.8 1333.2,705.6" fill="#fbfbfb"/><polygon points="1351.2,679.7 1358.8,674.9 1359.7,684.7 1352.2,689.4" fill="#8c3048" stroke="#8a8a8a" stroke-width="0.5"/><polygon points="1352.2,689.4 1359.7,684.7 1360.1,688.7 1352.6,693.4" fill="#fbfbfb"/><polygon points="1370.7,667.5 1378.2,662.8 1378.9,672.6 1371.4,677.3" fill="#c81428" stroke="#8a8a8a" stroke-width="0.5"/><polygon points="1371.4,677.3 1378.9,672.6 1379.2,676.6 1371.8,681.3" fill="#fbfbfb"/><polygon points="1389.9,655.4 1397.3,650.7 1397.8,660.7 1390.5,665.4" fill="#ff0000" stroke="#8a8a8a" stroke-width="0.5"/><polygon points="1390.5,665.4 1397.8,660.7 1398.0,664.8 1390.7,669.4" fill="#fbfbfb"/><polygon points="1408.9,643.5 1416.2,638.9 1416.5,649.0 1409.2,653.5" fill="#c81428" stroke="#8a8a8a" stroke-width="0.5"/><polygon points="1409.2,653.5 1416.5,649.0 1416.6,653.1 1409.4,657.6" fill="#fbfbfb"/><polygon points="1427.6,631.7 1434.8,627.2 1434.9,637.4 1427.8,641.9" fill="#ff0000" stroke="#8a8a8a" stroke-width="0.5"/><polygon points="1427.8,641.9 1434.9,637.4 1435.0,641.5 1427.8,646.0" fill="#fbfbfb"/><polygon points="1446.1,620.1 1453.2,615.6 1453.1,625.9 1446.0,630.4" fill="#ff0000" stroke="#8a8a8a" stroke-width="0.5"/><polygon points="1446.0,630.4 1453.1,625.9 1453.0,630.1 1446.0,634.6" fill="#fbfbfb"/><polygon points="1464.3,608.6 1471.4,604.2 1471.0,614.7 1464.1,619.0" fill="#ff0000" stroke="#8a8a8a" stroke-width="0.5"/><polygon points="1464.1,619.0 1471.0,614.7 1470.9,618.9 1464.0,623.3" fill="#fbfbfb"/><polygon points="1482.3,597.3 1489.2,593.0 1488.7,603.5 1481.8,607.9" fill="#ff0000" stroke="#8a8a8a" stroke-width="0.5"/><polygon points="1481.8,607.9 1488.7,603.5 1488.5,607.8 1481.7,612.1" fill="#fbfbfb"/><polygon points="1500.0,586.2 1506.9,581.9 1506.2,592.6 1499.4,596.8" fill="#ff0000" stroke="#8a8a8a" stroke-width="0.5"/><polygon points="1499.4,596.8 1506.2,592.6 1505.9,596.9 1499.1,601.1" fill="#fbfbfb"/><polygon points="1517.5,575.2 1524.2,571.0 1523.3,581.7 1516.7,585.9" fill="#ff0000" stroke="#8a8a8a" stroke-width="0.5"/><polygon points="1516.7,585.9 1523.3,581.7 1523.0,586.1 1516.3,590.3" fill="#fbfbfb"/><polygon points="1534.7,564.4 1541.4,560.2 1540.3,571.1 1533.7,575.2" fill="#8c3048" stroke="#8a8a8a" stroke-width="0.5"/><polygon points="1533.7,575.2 1540.3,571.1 1539.8,575.5 1533.3,579.6" fill="#fbfbfb"/><polygon points="1551.7,553.7 1558.3,549.6 1557.0,560.6 1550.5,564.7" fill="#c81428" stroke="#8a8a8a" stroke-width="0.5"/><polygon points="1550.5,564.7 1557.0,560.6 1556.5,565.0 1550.0,569.1" fill="#fbfbfb"/><polygon points="1568.4,543.2 1574.9,539.1 1573.4,550.2 1567.0,554.2" fill="#b9d3e0" stroke="#8a8a8a" stroke-width="0.5"/><polygon points="1567.0,554.2 1573.4,550.2 1572.8,554.7 1566.5,558.7" fill="#fbfbfb"/><polygon points="1584.9,532.8 1591.3,528.8 1589.6,540.0 1583.3,544.0" fill="#d6d6d6" stroke="#8a8a8a" stroke-width="0.5"/><polygon points="1583.3,544.0 1589.6,540.0 1589.0,544.6 1582.7,548.5" fill="#fbfbfb"/><polygon points="1315.3,730.1 1322.9,725.3 1324.2,734.4 1316.7,739.2" fill="#b02038" stroke="#8a8a8a" stroke-width="0.5"/><polygon points="1316.7,739.2 1324.2,734.4 1324.8,738.1 1317.3,742.9" fill="#fbfbfb"/><polygon points="1334.7,717.8 1342.2,713.1 1343.3,722.4 1335.9,727.1" fill="#b02038" stroke="#8a8a8a" stroke-width="0.5"/><polygon points="1335.9,727.1 1343.3,722.4 1343.8,726.1 1336.4,730.8" fill="#fbfbfb"/><polygon points="1353.9,705.8 1361.3,701.1 1362.2,710.5 1354.8,715.1" fill="#8c3048" stroke="#8a8a8a" stroke-width="0.5"/><polygon points="1354.8,715.1 1362.2,710.5 1362.5,714.3 1355.2,718.9" fill="#fbfbfb"/><polygon points="1372.8,693.8 1380.1,689.2 1380.8,698.7 1373.5,703.3" fill="#ff0000" stroke="#8a8a8a" stroke-width="0.5"/><polygon points="1373.5,703.3 1380.8,698.7 1381.0,702.6 1373.8,707.1" fill="#fbfbfb"/><polygon points="1391.4,682.1 1398.7,677.5 1399.1,687.1 1392.0,691.6" fill="#ff0000" stroke="#8a8a8a" stroke-width="0.5"/><polygon points="1392.0,691.6 1399.1,687.1 1399.3,691.0 1392.2,695.5" fill="#fbfbfb"/><polygon points="1409.9,670.5 1417.0,666.0 1417.3,675.7 1410.2,680.1" fill="#8c3048" stroke="#8a8a8a" stroke-width="0.5"/><polygon points="1410.2,680.1 1417.3,675.7 1417.4,679.6 1410.4,684.1" fill="#fbfbfb"/><polygon points="1428.0,659.0 1435.1,654.6 1435.1,664.4 1428.2,668.8" fill="#8c3048" stroke="#8a8a8a" stroke-width="0.5"/><polygon points="1428.2,668.8 1435.1,664.4 1435.2,668.4 1428.3,672.8" fill="#fbfbfb"/><polygon points="1446.0,647.7 1452.9,643.3 1452.8,653.3 1445.9,657.6" fill="#ff0000" stroke="#8a8a8a" stroke-width="0.5"/><polygon points="1445.9,657.6 1452.8,653.3 1452.7,657.3 1445.9,661.6" fill="#fbfbfb"/><polygon points="1463.7,636.5 1470.5,632.2 1470.2,642.3 1463.4,646.5" fill="#8c3048" stroke="#8a8a8a" stroke-width="0.5"/><polygon points="1463.4,646.5 1470.2,642.3 1470.1,646.3 1463.3,650.6" fill="#fbfbfb"/><polygon points="1481.1,625.5 1487.8,621.3 1487.4,631.4 1480.7,635.6" fill="#8c3048" stroke="#8a8a8a" stroke-width="0.5"/><polygon points="1480.7,635.6 1487.4,631.4 1487.2,635.5 1480.5,639.7" fill="#fbfbfb"/><polygon points="1498.3,614.7 1505.0,610.5 1504.3,620.7 1497.7,624.9" fill="#b02038" stroke="#8a8a8a" stroke-width="0.5"/><polygon points="1497.7,624.9 1504.3,620.7 1504.0,624.9 1497.5,629.0" fill="#fbfbfb"/><polygon points="1515.3,604.0 1521.8,599.8 1521.0,610.2 1514.5,614.3" fill="#b02038" stroke="#8a8a8a" stroke-width="0.5"/><polygon points="1514.5,614.3 1521.0,610.2 1520.6,614.4 1514.2,618.5" fill="#fbfbfb"/><polygon points="1532.0,593.4 1538.5,589.4 1537.4,599.8 1531.0,603.9" fill="#8c3048" stroke="#8a8a8a" stroke-width="0.5"/><polygon points="1531.0,603.9 1537.4,599.8 1537.0,604.1 1530.6,608.1" fill="#fbfbfb"/><polygon points="1548.5,583.0 1554.8,579.0 1553.6,589.6 1547.3,593.6" fill="#ff0000" stroke="#8a8a8a" stroke-width="0.5"/><polygon points="1547.3,593.6 1553.6,589.6 1553.1,593.9 1546.9,597.8" fill="#fbfbfb"/><polygon points="1564.7,572.8 1571.0,568.9 1569.6,579.5 1563.4,583.4" fill="#d6d6d6" stroke="#8a8a8a" stroke-width="0.5"/><polygon points="1563.4,583.4 1569.6,579.5 1569.0,583.8 1562.8,587.7" fill="#fbfbfb"/><polygon points="1580.7,562.7 1586.9,558.8 1585.3,569.6 1579.2,573.4" fill="#d6d6d6" stroke="#8a8a8a" stroke-width="0.5"/><polygon points="1579.2,573.4 1585.3,569.6 1584.7,573.9 1578.6,577.8" fill="#fbfbfb"/><polygon points="1319.0,754.4 1326.4,749.8 1327.7,758.6 1320.4,763.2" fill="#ff0000" stroke="#8a8a8a" stroke-width="0.5"/><polygon points="1320.4,763.2 1327.7,758.6 1328.2,762.1 1320.9,766.7" fill="#fbfbfb"/><polygon points="1337.9,742.5 1345.1,737.9 1346.2,746.8 1339.0,751.4" fill="#ff0000" stroke="#8a8a8a" stroke-width="0.5"/><polygon points="1339.0,751.4 1346.2,746.8 1346.6,750.4 1339.5,755.0" fill="#fbfbfb"/><polygon points="1356.5,730.8 1363.6,726.2 1364.5,735.2 1357.4,739.7" fill="#8c3048" stroke="#8a8a8a" stroke-width="0.5"/><polygon points="1357.4,739.7 1364.5,735.2 1364.8,738.9 1357.8,743.4" fill="#fbfbfb"/><polygon points="1374.8,719.2 1381.9,714.7 1382.6,723.8 1375.5,728.2" fill="#8c3048" stroke="#8a8a8a" stroke-width="0.5"/><polygon points="1375.5,728.2 1382.6,723.8 1382.8,727.5 1375.8,731.9" fill="#fbfbfb"/><polygon points="1392.9,707.7 1399.9,703.3 1400.4,712.5 1393.5,716.9" fill="#ff0000" stroke="#8a8a8a" stroke-width="0.5"/><polygon points="1393.5,716.9 1400.4,712.5 1400.6,716.2 1393.7,720.6" fill="#fbfbfb"/><polygon points="1410.8,696.4 1417.7,692.0 1418.0,701.3 1411.1,705.7" fill="#8c3048" stroke="#8a8a8a" stroke-width="0.5"/><polygon points="1411.1,705.7 1418.0,701.3 1418.1,705.1 1411.3,709.4" fill="#fbfbfb"/><polygon points="1428.5,685.2 1435.3,680.9 1435.3,690.3 1428.6,694.6" fill="#8c3048" stroke="#8a8a8a" stroke-width="0.5"/><polygon points="1428.6,694.6 1435.3,690.3 1435.4,694.1 1428.7,698.4" fill="#fbfbfb"/><polygon points="1445.9,674.2 1452.6,669.9 1452.5,679.5 1445.8,683.7" fill="#ff0000" stroke="#8a8a8a" stroke-width="0.5"/><polygon points="1445.8,683.7 1452.5,679.5 1452.4,683.3 1445.8,687.5" fill="#fbfbfb"/><polygon points="1463.0,663.3 1469.7,659.1 1469.4,668.8 1462.8,672.9" fill="#ff0000" stroke="#8a8a8a" stroke-width="0.5"/><polygon points="1462.8,672.9 1469.4,668.8 1469.3,672.7 1462.7,676.8" fill="#fbfbfb"/><polygon points="1480.0,652.6 1486.5,648.5 1486.0,658.2 1479.6,662.3" fill="#8c3048" stroke="#8a8a8a" stroke-width="0.5"/><polygon points="1479.6,662.3 1486.0,658.2 1485.9,662.1 1479.4,666.2" fill="#fbfbfb"/><polygon points="1496.7,642.0 1503.1,638.0 1502.5,647.8 1496.1,651.8" fill="#ff0000" stroke="#8a8a8a" stroke-width="0.5"/><polygon points="1496.1,651.8 1502.5,647.8 1502.2,651.8 1495.9,655.8" fill="#fbfbfb"/><polygon points="1513.1,631.6 1519.5,627.6 1518.7,637.5 1512.4,641.5" fill="#ff0000" stroke="#8a8a8a" stroke-width="0.5"/><polygon points="1512.4,641.5 1518.7,637.5 1518.3,641.6 1512.1,645.5" fill="#fbfbfb"/><polygon points="1529.4,621.3 1535.6,617.4 1534.6,627.4 1528.4,631.3" fill="#8c3048" stroke="#8a8a8a" stroke-width="0.5"/><polygon points="1528.4,631.3 1534.6,627.4 1534.2,631.5 1528.1,635.4" fill="#fbfbfb"/><polygon points="1545.4,611.2 1551.6,607.3 1550.4,617.4 1544.3,621.3" fill="#8c3048" stroke="#8a8a8a" stroke-width="0.5"/><polygon points="1544.3,621.3 1550.4,617.4 1549.9,621.5 1543.8,625.4" fill="#fbfbfb"/><polygon points="1561.1,601.2 1567.2,597.4 1565.9,607.6 1559.9,611.4" fill="#d6d6d6" stroke="#8a8a8a" stroke-width="0.5"/><polygon points="1559.9,611.4 1565.9,607.6 1565.3,611.8 1559.3,615.6" fill="#fbfbfb"/><polygon points="1576.7,591.4 1582.7,587.6 1581.1,597.9 1575.2,601.7" fill="#b9d3e0" stroke="#8a8a8a" stroke-width="0.5"/><polygon points="1575.2,601.7 1581.1,597.9 1580.5,602.1 1574.6,605.9" fill="#fbfbfb"/><polygon points="1322.6,777.8 1329.8,773.3 1331.0,781.7 1323.9,786.2" fill="#8c3048" stroke="#8a8a8a" stroke-width="0.5"/><polygon points="1323.9,786.2 1331.0,781.7 1331.4,785.1 1324.4,789.6" fill="#fbfbfb"/><polygon points="1340.9,766.2 1348.0,761.7 1349.0,770.2 1342.0,774.7" fill="#8c3048" stroke="#8a8a8a" stroke-width="0.5"/><polygon points="1342.0,774.7 1349.0,770.2 1349.4,773.7 1342.4,778.1" fill="#fbfbfb"/><polygon points="1358.9,754.7 1365.9,750.3 1366.7,758.9 1359.8,763.3" fill="#ff0000" stroke="#8a8a8a" stroke-width="0.5"/><polygon points="1359.8,763.3 1366.7,758.9 1367.1,762.4 1360.2,766.8" fill="#fbfbfb"/><polygon points="1376.8,743.4 1383.6,739.1 1384.3,747.8 1377.5,752.1" fill="#b02038" stroke="#8a8a8a" stroke-width="0.5"/><polygon points="1377.5,752.1 1384.3,747.8 1384.5,751.3 1377.7,755.6" fill="#fbfbfb"/><polygon points="1394.4,732.3 1401.2,727.9 1401.6,736.8 1394.9,741.0" fill="#8c3048" stroke="#8a8a8a" stroke-width="0.5"/><polygon points="1394.9,741.0 1401.6,736.8 1401.8,740.3 1395.1,744.6" fill="#fbfbfb"/><polygon points="1411.7,721.2 1418.4,717.0 1418.7,725.9 1412.0,730.1" fill="#ff0000" stroke="#8a8a8a" stroke-width="0.5"/><polygon points="1412.0,730.1 1418.7,725.9 1418.8,729.5 1412.2,733.7" fill="#fbfbfb"/><polygon points="1428.9,710.3 1435.5,706.1 1435.5,715.2 1429.0,719.3" fill="#ff0000" stroke="#8a8a8a" stroke-width="0.5"/><polygon points="1429.0,719.3 1435.5,715.2 1435.6,718.8 1429.1,723.0" fill="#fbfbfb"/><polygon points="1445.8,699.6 1452.3,695.5 1452.2,704.6 1445.7,708.7" fill="#8c3048" stroke="#8a8a8a" stroke-width="0.5"/><polygon points="1445.7,708.7 1452.2,704.6 1452.1,708.3 1445.7,712.4" fill="#fbfbfb"/><polygon points="1462.4,689.0 1468.9,684.9 1468.6,694.1 1462.2,698.2" fill="#8c3048" stroke="#8a8a8a" stroke-width="0.5"/><polygon points="1462.2,698.2 1468.6,694.1 1468.5,697.9 1462.1,701.9" fill="#fbfbfb"/><polygon points="1478.9,678.6 1485.2,674.5 1484.8,683.9 1478.5,687.9" fill="#b02038" stroke="#8a8a8a" stroke-width="0.5"/><polygon points="1478.5,687.9 1484.8,683.9 1484.6,687.6 1478.3,691.6" fill="#fbfbfb"/><polygon points="1495.1,668.3 1501.4,664.3 1500.8,673.7 1494.6,677.6" fill="#8c3048" stroke="#8a8a8a" stroke-width="0.5"/><polygon points="1494.6,677.6 1500.8,673.7 1500.5,677.5 1494.3,681.4" fill="#fbfbfb"/><polygon points="1511.1,658.1 1517.3,654.2 1516.5,663.7 1510.4,667.6" fill="#8c3048" stroke="#8a8a8a" stroke-width="0.5"/><polygon points="1510.4,667.6 1516.5,663.7 1516.2,667.6 1510.1,671.4" fill="#fbfbfb"/><polygon points="1526.9,648.1 1533.0,644.2 1532.0,653.8 1526.0,657.7" fill="#ff0000" stroke="#8a8a8a" stroke-width="0.5"/><polygon points="1526.0,657.7 1532.0,653.8 1531.6,657.7 1525.6,661.5" fill="#fbfbfb"/><polygon points="1542.4,638.2 1548.4,634.4 1547.3,644.1 1541.3,647.9" fill="#b02038" stroke="#8a8a8a" stroke-width="0.5"/><polygon points="1541.3,647.9 1547.3,644.1 1546.8,648.1 1540.9,651.8" fill="#fbfbfb"/><polygon points="1557.7,628.5 1563.6,624.8 1562.3,634.5 1556.5,638.3" fill="#b9d3e0" stroke="#8a8a8a" stroke-width="0.5"/><polygon points="1556.5,638.3 1562.3,634.5 1561.8,638.5 1556.0,642.2" fill="#fbfbfb"/><polygon points="1572.8,618.9 1578.6,615.2 1577.2,625.1 1571.4,628.8" fill="#d6d6d6" stroke="#8a8a8a" stroke-width="0.5"/><polygon points="1571.4,628.8 1577.2,625.1 1576.6,629.1 1570.8,632.8" fill="#fbfbfb"/><polygon points="1326.0,800.2 1333.0,795.8 1334.1,803.8 1327.2,808.2" fill="#e01020" stroke="#8a8a8a" stroke-width="0.5"/><polygon points="1327.2,808.2 1334.1,803.8 1334.6,807.0 1327.7,811.4" fill="#fbfbfb"/><polygon points="1343.8,788.9 1350.6,784.5 1351.6,792.6 1344.8,797.0" fill="#e01020" stroke="#8a8a8a" stroke-width="0.5"/><polygon points="1344.8,797.0 1351.6,792.6 1352.0,795.9 1345.2,800.2" fill="#fbfbfb"/><polygon points="1361.3,777.7 1368.1,773.4 1368.9,781.6 1362.2,785.9" fill="#a82840" stroke="#8a8a8a" stroke-width="0.5"/><polygon points="1362.2,785.9 1368.9,781.6 1369.2,784.9 1362.5,789.2" fill="#fbfbfb"/><polygon points="1378.6,766.7 1385.3,762.4 1385.9,770.7 1379.3,775.0" fill="#a82840" stroke="#8a8a8a" stroke-width="0.5"/><polygon points="1379.3,775.0 1385.9,770.7 1386.2,774.1 1379.6,778.3" fill="#fbfbfb"/><polygon points="1395.7,755.8 1402.3,751.6 1402.7,760.0 1396.2,764.2" fill="#e01020" stroke="#8a8a8a" stroke-width="0.5"/><polygon points="1396.2,764.2 1402.7,760.0 1402.9,763.4 1396.4,767.6" fill="#fbfbfb"/><polygon points="1412.6,745.0 1419.1,740.9 1419.4,749.4 1412.9,753.5" fill="#e01020" stroke="#8a8a8a" stroke-width="0.5"/><polygon points="1412.9,753.5 1419.4,749.4 1419.5,752.8 1413.0,756.9" fill="#fbfbfb"/><polygon points="1429.2,734.4 1435.7,730.3 1435.7,738.9 1429.4,743.0" fill="#a82840" stroke="#8a8a8a" stroke-width="0.5"/><polygon points="1429.4,743.0 1435.7,738.9 1435.8,742.4 1429.4,746.5" fill="#fbfbfb"/><polygon points="1445.7,723.9 1452.0,719.9 1451.9,728.6 1445.6,732.6" fill="#e01020" stroke="#8a8a8a" stroke-width="0.5"/><polygon points="1445.6,732.6 1451.9,728.6 1451.9,732.1 1445.6,736.1" fill="#fbfbfb"/><polygon points="1461.9,713.6 1468.1,709.6 1467.9,718.4 1461.7,722.4" fill="#e01020" stroke="#8a8a8a" stroke-width="0.5"/><polygon points="1461.7,722.4 1467.9,718.4 1467.8,722.0 1461.6,725.9" fill="#fbfbfb"/><polygon points="1477.9,703.4 1484.0,699.5 1483.6,708.4 1477.5,712.3" fill="#a82840" stroke="#8a8a8a" stroke-width="0.5"/><polygon points="1477.5,712.3 1483.6,708.4 1483.4,712.0 1477.3,715.9" fill="#fbfbfb"/><polygon points="1493.6,693.4 1499.7,689.5 1499.1,698.5 1493.1,702.3" fill="#e01020" stroke="#8a8a8a" stroke-width="0.5"/><polygon points="1493.1,702.3 1499.1,698.5 1498.9,702.1 1492.9,706.0" fill="#fbfbfb"/><polygon points="1509.2,683.5 1515.2,679.6 1514.4,688.7 1508.5,692.5" fill="#e01020" stroke="#8a8a8a" stroke-width="0.5"/><polygon points="1508.5,692.5 1514.4,688.7 1514.1,692.4 1508.2,696.2" fill="#fbfbfb"/><polygon points="1524.5,673.7 1530.4,669.9 1529.5,679.1 1523.6,682.8" fill="#a82840" stroke="#8a8a8a" stroke-width="0.5"/><polygon points="1523.6,682.8 1529.5,679.1 1529.1,682.8 1523.3,686.6" fill="#fbfbfb"/><polygon points="1539.6,664.1 1545.4,660.4 1544.3,669.6 1538.5,673.3" fill="#a82840" stroke="#8a8a8a" stroke-width="0.5"/><polygon points="1538.5,673.3 1544.3,669.6 1543.9,673.4 1538.1,677.1" fill="#fbfbfb"/><polygon points="1554.4,654.6 1560.2,650.9 1558.9,660.3 1553.3,663.9" fill="#d6d6d6" stroke="#8a8a8a" stroke-width="0.5"/><polygon points="1553.3,663.9 1558.9,660.3 1558.4,664.1 1552.8,667.7" fill="#fbfbfb"/><polygon points="1569.1,645.3 1574.7,641.7 1573.3,651.1 1567.8,654.7" fill="#d6d6d6" stroke="#8a8a8a" stroke-width="0.5"/><polygon points="1567.8,654.7 1573.3,651.1 1572.8,654.9 1567.2,658.5" fill="#fbfbfb"/><polygon points="1329.3,821.7 1336.0,817.3 1337.2,825.2 1330.5,829.5" fill="#cfe6f0" stroke="#8a8a8a" stroke-width="0.5"/><polygon points="1330.5,829.5 1337.2,825.2 1337.6,828.4 1331.0,832.6" fill="#fbfbfb"/><polygon points="1346.5,810.6 1353.2,806.4 1354.2,814.3 1347.6,818.5" fill="#cfe6f0" stroke="#8a8a8a" stroke-width="0.5"/><polygon points="1347.6,818.5 1354.2,814.3 1354.5,817.5 1348.0,821.7" fill="#fbfbfb"/><polygon points="1363.6,799.7 1370.2,795.5 1370.9,803.6 1364.4,807.7" fill="#cfe6f0" stroke="#8a8a8a" stroke-width="0.5"/><polygon points="1364.4,807.7 1370.9,803.6 1371.2,806.8 1364.8,811.0" fill="#fbfbfb"/><polygon points="1380.4,789.0 1386.9,784.8 1387.5,792.9 1381.1,797.1" fill="#cfe6f0" stroke="#8a8a8a" stroke-width="0.5"/><polygon points="1381.1,797.1 1387.5,792.9 1387.7,796.2 1381.3,800.3" fill="#fbfbfb"/><polygon points="1397.0,778.3 1403.5,774.2 1403.9,782.5 1397.5,786.5" fill="#cfe6f0" stroke="#8a8a8a" stroke-width="0.5"/><polygon points="1397.5,786.5 1403.9,782.5 1404.0,785.8 1397.7,789.9" fill="#fbfbfb"/><polygon points="1413.4,767.8 1419.8,763.8 1420.0,772.1 1413.7,776.1" fill="#cfe6f0" stroke="#8a8a8a" stroke-width="0.5"/><polygon points="1413.7,776.1 1420.0,772.1 1420.1,775.5 1413.9,779.5" fill="#fbfbfb"/><polygon points="1429.6,757.5 1435.9,753.5 1435.9,761.9 1429.7,765.9" fill="#cfe6f0" stroke="#8a8a8a" stroke-width="0.5"/><polygon points="1429.7,765.9 1435.9,761.9 1436.0,765.3 1429.8,769.3" fill="#fbfbfb"/><polygon points="1445.6,747.3 1451.7,743.3 1451.6,751.9 1445.5,755.8" fill="#cfe6f0" stroke="#8a8a8a" stroke-width="0.5"/><polygon points="1445.5,755.8 1451.6,751.9 1451.6,755.3 1445.5,759.2" fill="#fbfbfb"/><polygon points="1461.3,737.2 1467.4,733.3 1467.1,741.9 1461.1,745.8" fill="#cfe6f0" stroke="#8a8a8a" stroke-width="0.5"/><polygon points="1461.1,745.8 1467.1,741.9 1467.0,745.4 1461.0,749.3" fill="#fbfbfb"/><polygon points="1476.9,727.3 1482.9,723.4 1482.4,732.1 1476.5,735.9" fill="#cfe6f0" stroke="#8a8a8a" stroke-width="0.5"/><polygon points="1476.5,735.9 1482.4,732.1 1482.3,735.7 1476.3,739.4" fill="#fbfbfb"/><polygon points="1492.2,717.5 1498.1,713.7 1497.5,722.5 1491.6,726.2" fill="#cfe6f0" stroke="#8a8a8a" stroke-width="0.5"/><polygon points="1491.6,726.2 1497.5,722.5 1497.3,726.0 1491.4,729.8" fill="#fbfbfb"/><polygon points="1507.3,707.8 1513.1,704.1 1512.4,713.0 1506.6,716.7" fill="#cfe6f0" stroke="#8a8a8a" stroke-width="0.5"/><polygon points="1506.6,716.7 1512.4,713.0 1512.1,716.6 1506.3,720.2" fill="#fbfbfb"/><polygon points="1522.2,698.3 1527.9,694.6 1527.0,703.6 1521.3,707.2" fill="#cfe6f0" stroke="#8a8a8a" stroke-width="0.5"/><polygon points="1521.3,707.2 1527.0,703.6 1526.6,707.2 1521.0,710.8" fill="#fbfbfb"/><polygon points="1536.8,688.9 1542.5,685.3 1541.4,694.3 1535.8,697.9" fill="#cfe6f0" stroke="#8a8a8a" stroke-width="0.5"/><polygon points="1535.8,697.9 1541.4,694.3 1541.0,698.0 1535.4,701.6" fill="#fbfbfb"/><polygon points="1551.3,679.7 1556.9,676.1 1555.7,685.2 1550.1,688.8" fill="#d6d6d6" stroke="#8a8a8a" stroke-width="0.5"/><polygon points="1550.1,688.8 1555.7,685.2 1555.2,688.9 1549.7,692.5" fill="#fbfbfb"/><polygon points="1565.5,670.6 1571.0,667.0 1569.7,676.3 1564.2,679.7" fill="#b9d3e0" stroke="#8a8a8a" stroke-width="0.5"/><polygon points="1564.2,679.7 1569.7,676.3 1569.1,680.0 1563.7,683.5" fill="#fbfbfb"/><polygon points="1332.5,842.6 1339.0,838.4 1340.1,846.1 1333.6,850.3" fill="#cfe6f0" stroke="#8a8a8a" stroke-width="0.5"/><polygon points="1333.6,850.3 1340.1,846.1 1340.6,849.2 1334.1,853.3" fill="#fbfbfb"/><polygon points="1349.3,831.9 1355.7,827.7 1356.6,835.5 1350.2,839.6" fill="#cfe6f0" stroke="#8a8a8a" stroke-width="0.5"/><polygon points="1350.2,839.6 1356.6,835.5 1357.0,838.6 1350.6,842.7" fill="#fbfbfb"/><polygon points="1365.8,821.2 1372.2,817.1 1373.0,825.0 1366.6,829.1" fill="#cfe6f0" stroke="#8a8a8a" stroke-width="0.5"/><polygon points="1366.6,829.1 1373.0,825.0 1373.3,828.2 1366.9,832.2" fill="#fbfbfb"/><polygon points="1382.2,810.7 1388.5,806.7 1389.1,814.6 1382.8,818.6" fill="#cfe6f0" stroke="#8a8a8a" stroke-width="0.5"/><polygon points="1382.8,818.6 1389.1,814.6 1389.3,817.8 1383.1,821.9" fill="#fbfbfb"/><polygon points="1398.3,800.4 1404.6,796.4 1404.9,804.4 1398.8,808.4" fill="#cfe6f0" stroke="#8a8a8a" stroke-width="0.5"/><polygon points="1398.8,808.4 1404.9,804.4 1405.1,807.7 1399.0,811.6" fill="#fbfbfb"/><polygon points="1414.2,790.1 1420.4,786.2 1420.6,794.3 1414.5,798.2" fill="#cfe6f0" stroke="#8a8a8a" stroke-width="0.5"/><polygon points="1414.5,798.2 1420.6,794.3 1420.7,797.6 1414.7,801.5" fill="#fbfbfb"/><polygon points="1430.0,780.0 1436.0,776.1 1436.1,784.4 1430.1,788.2" fill="#cfe6f0" stroke="#8a8a8a" stroke-width="0.5"/><polygon points="1430.1,788.2 1436.1,784.4 1436.1,787.7 1430.2,791.6" fill="#fbfbfb"/><polygon points="1445.5,770.1 1451.5,766.2 1451.4,774.6 1445.5,778.4" fill="#cfe6f0" stroke="#8a8a8a" stroke-width="0.5"/><polygon points="1445.5,778.4 1451.4,774.6 1451.3,777.9 1445.4,781.7" fill="#fbfbfb"/><polygon points="1460.8,760.3 1466.7,756.5 1466.4,764.9 1460.6,768.6" fill="#cfe6f0" stroke="#8a8a8a" stroke-width="0.5"/><polygon points="1460.6,768.6 1466.4,764.9 1466.3,768.3 1460.5,772.0" fill="#fbfbfb"/><polygon points="1475.9,750.6 1481.7,746.8 1481.3,755.3 1475.5,759.0" fill="#cfe6f0" stroke="#8a8a8a" stroke-width="0.5"/><polygon points="1475.5,759.0 1481.3,755.3 1481.1,758.8 1475.4,762.5" fill="#fbfbfb"/><polygon points="1490.8,741.0 1496.5,737.3 1495.9,745.9 1490.3,749.6" fill="#cfe6f0" stroke="#8a8a8a" stroke-width="0.5"/><polygon points="1490.3,749.6 1495.9,745.9 1495.7,749.4 1490.0,753.0" fill="#fbfbfb"/><polygon points="1505.4,731.6 1511.1,728.0 1510.4,736.6 1504.8,740.2" fill="#cfe6f0" stroke="#8a8a8a" stroke-width="0.5"/><polygon points="1504.8,740.2 1510.4,736.6 1510.1,740.1 1504.5,743.7" fill="#fbfbfb"/><polygon points="1519.9,722.3 1525.5,718.7 1524.6,727.5 1519.1,731.0" fill="#cfe6f0" stroke="#8a8a8a" stroke-width="0.5"/><polygon points="1519.1,731.0 1524.6,727.5 1524.3,731.0 1518.8,734.6" fill="#fbfbfb"/><polygon points="1534.2,713.1 1539.7,709.6 1538.6,718.4 1533.2,721.9" fill="#cfe6f0" stroke="#8a8a8a" stroke-width="0.5"/><polygon points="1533.2,721.9 1538.6,718.4 1538.2,722.0 1532.8,725.5" fill="#fbfbfb"/><polygon points="1548.2,704.1 1553.6,700.6 1552.5,709.6 1547.1,713.0" fill="#b9d3e0" stroke="#8a8a8a" stroke-width="0.5"/><polygon points="1547.1,713.0 1552.5,709.6 1552.0,713.2 1546.6,716.6" fill="#fbfbfb"/><polygon points="1562.0,695.2 1567.4,691.8 1566.1,700.8 1560.8,704.2" fill="#d6d6d6" stroke="#8a8a8a" stroke-width="0.5"/><polygon points="1560.8,704.2 1566.1,700.8 1565.5,704.5 1560.3,707.8" fill="#fbfbfb"/><polygon points="1335.6,863.1 1342.0,859.0 1343.0,866.5 1336.7,870.5" fill="#f8b080" stroke="#8a8a8a" stroke-width="0.5"/><polygon points="1336.7,870.5 1343.0,866.5 1343.5,869.5 1337.2,873.6" fill="#fbfbfb"/><polygon points="1351.9,852.6 1358.2,848.6 1359.1,856.1 1352.9,860.1" fill="#f8b080" stroke="#8a8a8a" stroke-width="0.5"/><polygon points="1352.9,860.1 1359.1,856.1 1359.4,859.2 1353.2,863.2" fill="#fbfbfb"/><polygon points="1368.0,842.2 1374.2,838.2 1374.9,845.9 1368.8,849.9" fill="#f8b080" stroke="#8a8a8a" stroke-width="0.5"/><polygon points="1368.8,849.9 1374.9,845.9 1375.2,849.0 1369.1,852.9" fill="#fbfbfb"/><polygon points="1383.9,832.0 1390.0,828.0 1390.6,835.8 1384.5,839.7" fill="#f8b080" stroke="#8a8a8a" stroke-width="0.5"/><polygon points="1384.5,839.7 1390.6,835.8 1390.8,838.9 1384.7,842.8" fill="#fbfbfb"/><polygon points="1399.6,821.9 1405.6,818.0 1406.0,825.8 1400.0,829.7" fill="#f8b080" stroke="#8a8a8a" stroke-width="0.5"/><polygon points="1400.0,829.7 1406.0,825.8 1406.2,829.0 1400.2,832.9" fill="#fbfbfb"/><polygon points="1415.0,811.9 1421.0,808.1 1421.3,816.0 1415.3,819.8" fill="#f8b080" stroke="#8a8a8a" stroke-width="0.5"/><polygon points="1415.3,819.8 1421.3,816.0 1421.3,819.2 1415.5,823.0" fill="#fbfbfb"/><polygon points="1430.3,802.1 1436.2,798.3 1436.3,806.3 1430.4,810.0" fill="#f8b080" stroke="#8a8a8a" stroke-width="0.5"/><polygon points="1430.4,810.0 1436.3,806.3 1436.3,809.5 1430.5,813.3" fill="#fbfbfb"/><polygon points="1445.4,792.3 1451.2,788.6 1451.1,796.7 1445.4,800.4" fill="#f8b080" stroke="#8a8a8a" stroke-width="0.5"/><polygon points="1445.4,800.4 1451.1,796.7 1451.1,800.0 1445.4,803.7" fill="#fbfbfb"/><polygon points="1460.3,782.8 1466.0,779.1 1465.8,787.3 1460.1,790.9" fill="#f8b080" stroke="#8a8a8a" stroke-width="0.5"/><polygon points="1460.1,790.9 1465.8,787.3 1465.7,790.6 1460.0,794.2" fill="#fbfbfb"/><polygon points="1474.9,773.3 1480.6,769.7 1480.2,777.9 1474.6,781.6" fill="#f8b080" stroke="#8a8a8a" stroke-width="0.5"/><polygon points="1474.6,781.6 1480.2,777.9 1480.0,781.3 1474.4,784.9" fill="#fbfbfb"/><polygon points="1489.4,764.0 1495.0,760.4 1494.4,768.8 1488.9,772.3" fill="#f8b080" stroke="#8a8a8a" stroke-width="0.5"/><polygon points="1488.9,772.3 1494.4,768.8 1494.2,772.2 1488.7,775.7" fill="#fbfbfb"/><polygon points="1503.7,754.8 1509.2,751.2 1508.4,759.7 1503.0,763.2" fill="#f8b080" stroke="#8a8a8a" stroke-width="0.5"/><polygon points="1503.0,763.2 1508.4,759.7 1508.2,763.1 1502.7,766.6" fill="#fbfbfb"/><polygon points="1517.7,745.7 1523.1,742.2 1522.3,750.8 1516.9,754.2" fill="#f8b080" stroke="#8a8a8a" stroke-width="0.5"/><polygon points="1516.9,754.2 1522.3,750.8 1521.9,754.2 1516.6,757.7" fill="#fbfbfb"/><polygon points="1531.6,736.8 1536.9,733.4 1535.9,742.0 1530.6,745.4" fill="#f8b080" stroke="#8a8a8a" stroke-width="0.5"/><polygon points="1530.6,745.4 1535.9,742.0 1535.5,745.5 1530.2,748.9" fill="#fbfbfb"/><polygon points="1545.2,728.0 1550.5,724.6 1549.3,733.3 1544.1,736.7" fill="#d6d6d6" stroke="#8a8a8a" stroke-width="0.5"/><polygon points="1544.1,736.7 1549.3,733.3 1548.9,736.8 1543.7,740.2" fill="#fbfbfb"/><polygon points="1558.6,719.3 1563.8,716.0 1562.5,724.8 1557.4,728.1" fill="#d6d6d6" stroke="#8a8a8a" stroke-width="0.5"/><polygon points="1557.4,728.1 1562.5,724.8 1562.0,728.3 1556.9,731.6" fill="#fbfbfb"/><polyline points="1323.1,820.5 1576.0,658.9" fill="none" stroke="#e02020" stroke-width="1.3"/><polyline points="1253.4,867.9 1324.9,821.5" fill="none" stroke="#e02020" stroke-width="1.3"/><polygon points="1240.3,813.2 1249.3,806.9 1251.7,814.3 1242.8,820.4" fill="#ff0000" stroke="#8a8a8a" stroke-width="0.5"/><polygon points="1242.8,820.4 1251.7,814.3 1252.7,817.2 1243.9,823.3" fill="#fbfbfb"/><polygon points="1260.8,798.9 1269.9,792.6 1271.9,800.4 1263.0,806.5" fill="#ff0000" stroke="#8a8a8a" stroke-width="0.5"/><polygon points="1263.0,806.5 1271.9,800.4 1272.7,803.5 1263.9,809.5" fill="#fbfbfb"/><polygon points="1281.4,784.7 1290.4,778.4 1292.0,786.5 1283.2,792.6" fill="#8c3048" stroke="#8a8a8a" stroke-width="0.5"/><polygon points="1283.2,792.6 1292.0,786.5 1292.7,789.7 1283.9,795.8" fill="#fbfbfb"/><polygon points="1301.9,770.4 1310.9,764.1 1312.2,772.5 1303.3,778.7" fill="#8c3048" stroke="#8a8a8a" stroke-width="0.5"/><polygon points="1303.3,778.7 1312.2,772.5 1312.7,776.0 1303.9,782.0" fill="#fbfbfb"/><polyline points="1240.1,832.1 1319.1,778.1" fill="none" stroke="#a4a4a4" stroke-width="0.9"/><polygon points="1247.1,832.4 1255.7,826.6 1257.9,833.6 1249.5,839.3" fill="#8c3048" stroke="#8a8a8a" stroke-width="0.5"/><polygon points="1249.5,839.3 1257.9,833.6 1258.8,836.5 1250.5,842.1" fill="#fbfbfb"/><polygon points="1266.6,819.1 1275.2,813.3 1277.1,820.7 1268.7,826.4" fill="#8c3048" stroke="#8a8a8a" stroke-width="0.5"/><polygon points="1268.7,826.4 1277.1,820.7 1277.9,823.7 1269.5,829.3" fill="#fbfbfb"/><polygon points="1286.1,805.9 1294.7,800.0 1296.3,807.8 1287.9,813.4" fill="#ff0000" stroke="#8a8a8a" stroke-width="0.5"/><polygon points="1287.9,813.4 1296.3,807.8 1296.9,810.9 1288.5,816.5" fill="#fbfbfb"/><polygon points="1305.7,792.6 1314.3,786.7 1315.5,794.8 1307.0,800.5" fill="#b02038" stroke="#8a8a8a" stroke-width="0.5"/><polygon points="1307.0,800.5 1315.5,794.8 1316.0,798.1 1307.6,803.7" fill="#fbfbfb"/><polyline points="1246.9,850.4 1322.1,800.3" fill="none" stroke="#a4a4a4" stroke-width="0.9"/><polygon points="1253.5,850.8 1261.7,845.4 1263.9,852.1 1255.9,857.4" fill="#e01020" stroke="#8a8a8a" stroke-width="0.5"/><polygon points="1255.9,857.4 1263.9,852.1 1264.8,854.9 1256.8,860.1" fill="#fbfbfb"/><polygon points="1272.1,838.5 1280.3,833.1 1282.1,840.1 1274.1,845.4" fill="#e01020" stroke="#8a8a8a" stroke-width="0.5"/><polygon points="1274.1,845.4 1282.1,840.1 1282.9,843.0 1274.9,848.2" fill="#fbfbfb"/><polygon points="1290.7,826.2 1298.9,820.7 1300.4,828.1 1292.3,833.4" fill="#a82840" stroke="#8a8a8a" stroke-width="0.5"/><polygon points="1292.3,833.4 1300.4,828.1 1301.0,831.1 1293.0,836.4" fill="#fbfbfb"/><polygon points="1309.3,813.8 1317.5,808.4 1318.6,816.1 1310.6,821.4" fill="#a82840" stroke="#8a8a8a" stroke-width="0.5"/><polygon points="1310.6,821.4 1318.6,816.1 1319.1,819.3 1311.1,824.5" fill="#fbfbfb"/><polyline points="1253.4,867.9 1324.9,821.5" fill="none" stroke="#a4a4a4" stroke-width="0.9"/><polygon points="1259.8,868.5 1267.5,863.5 1269.6,870.0 1262.0,874.9" fill="#cfe6f0" stroke="#8a8a8a" stroke-width="0.5"/><polygon points="1262.0,874.9 1269.6,870.0 1270.5,872.7 1262.9,877.5" fill="#fbfbfb"/><polygon points="1277.4,857.1 1285.2,852.1 1287.0,858.9 1279.4,863.8" fill="#cfe6f0" stroke="#8a8a8a" stroke-width="0.5"/><polygon points="1279.4,863.8 1287.0,858.9 1287.7,861.7 1280.1,866.6" fill="#fbfbfb"/><polygon points="1295.1,845.7 1302.9,840.6 1304.3,847.9 1296.7,852.7" fill="#cfe6f0" stroke="#8a8a8a" stroke-width="0.5"/><polygon points="1296.7,852.7 1304.3,847.9 1304.9,850.8 1297.3,855.6" fill="#fbfbfb"/><polygon points="1312.8,834.2 1320.6,829.2 1321.7,836.8 1314.0,841.6" fill="#cfe6f0" stroke="#8a8a8a" stroke-width="0.5"/><polygon points="1314.0,841.6 1321.7,836.8 1322.1,839.8 1314.6,844.6" fill="#fbfbfb"/><polyline points="1259.8,885.0 1327.7,842.1" fill="none" stroke="#a4a4a4" stroke-width="0.9"/><polygon points="1265.8,885.8 1273.2,881.1 1275.3,887.5 1268.0,892.0" fill="#cfe6f0" stroke="#8a8a8a" stroke-width="0.5"/><polygon points="1268.0,892.0 1275.3,887.5 1276.1,890.1 1268.9,894.6" fill="#fbfbfb"/><polygon points="1282.6,875.2 1290.0,870.6 1291.7,877.3 1284.5,881.8" fill="#cfe6f0" stroke="#8a8a8a" stroke-width="0.5"/><polygon points="1284.5,881.8 1291.7,877.3 1292.4,880.0 1285.2,884.5" fill="#fbfbfb"/><polygon points="1299.4,864.7 1306.8,860.1 1308.2,867.1 1300.9,871.6" fill="#cfe6f0" stroke="#8a8a8a" stroke-width="0.5"/><polygon points="1300.9,871.6 1308.2,867.1 1308.8,870.0 1301.6,874.4" fill="#fbfbfb"/><polygon points="1316.2,854.2 1323.6,849.5 1324.6,856.9 1317.4,861.4" fill="#cfe6f0" stroke="#8a8a8a" stroke-width="0.5"/><polygon points="1317.4,861.4 1324.6,856.9 1325.1,859.9 1317.9,864.3" fill="#fbfbfb"/><polyline points="1266.0,901.7 1330.4,862.3" fill="none" stroke="#a4a4a4" stroke-width="0.9"/><polygon points="1271.7,902.6 1278.7,898.3 1280.8,904.6 1273.9,908.7" fill="#f8b080" stroke="#8a8a8a" stroke-width="0.5"/><polygon points="1273.9,908.7 1280.8,904.6 1281.6,907.1 1274.8,911.2" fill="#fbfbfb"/><polygon points="1287.7,892.9 1294.7,888.7 1296.4,895.2 1289.5,899.4" fill="#f8b080" stroke="#8a8a8a" stroke-width="0.5"/><polygon points="1289.5,899.4 1296.4,895.2 1297.0,897.9 1290.2,902.0" fill="#fbfbfb"/><polygon points="1303.6,883.3 1310.6,879.0 1312.0,885.9 1305.1,890.0" fill="#f8b080" stroke="#8a8a8a" stroke-width="0.5"/><polygon points="1305.1,890.0 1312.0,885.9 1312.5,888.7 1305.7,892.7" fill="#fbfbfb"/><polygon points="1319.5,873.6 1326.5,869.3 1327.6,876.5 1320.7,880.7" fill="#f8b080" stroke="#8a8a8a" stroke-width="0.5"/><polygon points="1320.7,880.7 1327.6,876.5 1328.0,879.5 1321.2,883.5" fill="#fbfbfb"/><polyline points="1300.0,676.0 1316.0,755.0" fill="none" stroke="#9a9a9a" stroke-width="0.8"/><polygon points="1602.0,487.0 1606.0,489.0 1586.0,620.0 1582.0,614.0" fill="#d8d8d8"/><polygon points="1247.0,628.0 1551.0,455.0 1547.0,449.0 1602.0,487.0 1300.0,676.0" fill="#ff0000"/><polyline points="1263.3,620.3 1312.5,664.2" fill="none" stroke="#b23a3a" stroke-width="0.9"/><polyline points="1296.8,601.2 1327.3,627.6" fill="none" stroke="#b23a3a" stroke-width="0.9"/><polyline points="1327.3,627.6 1406.1,580.1" fill="none" stroke="#b23a3a" stroke-width="0.9"/><polyline points="1406.1,580.1 1425.8,595.8" fill="none" stroke="#b23a3a" stroke-width="0.9"/><polyline points="1339.4,577.0 1361.9,595.5" fill="none" stroke="#b23a3a" stroke-width="0.9"/><polyline points="1361.9,595.5 1446.8,545.1" fill="none" stroke="#b23a3a" stroke-width="0.9"/><polyline points="1446.8,545.1 1474.1,565.6" fill="none" stroke="#b23a3a" stroke-width="0.9"/><polyline points="1391.2,547.5 1405.7,558.8" fill="none" stroke="#b23a3a" stroke-width="0.9"/><polyline points="1405.7,558.8 1481.6,514.4" fill="none" stroke="#b23a3a" stroke-width="0.9"/><polyline points="1467.3,504.2 1516.4,539.2" fill="none" stroke="#b23a3a" stroke-width="0.9"/><polyline points="1319.7,647.8 1398.3,599.5" fill="none" stroke="#b23a3a" stroke-width="0.9"/><polyline points="1471.8,547.4 1526.3,514.2" fill="none" stroke="#b23a3a" stroke-width="0.9"/><polyline points="1500.8,496.6 1540.6,524.1" fill="none" stroke="#b23a3a" stroke-width="0.9"/><polyline points="1278.1,633.5 1311.5,614.0" fill="none" stroke="#b23a3a" stroke-width="0.9"/><polygon points="1547.0,449.0 1602.0,487.0 1597.0,522.0 1583.0,531.0 1548.0,512.0" fill="#c9c9c9"/><polygon points="1553.1,459.0 1559.1,463.0 1559.1,473.0 1553.1,469.0" fill="#f0eee8" stroke="#999" stroke-width="0.5"/><polygon points="1552.1,481.0 1558.1,485.0 1558.1,494.0 1552.1,490.0" fill="#f0eee8" stroke="#999" stroke-width="0.5"/><polygon points="1569.4,471.0 1575.4,475.0 1575.4,485.0 1569.4,481.0" fill="#f0eee8" stroke="#999" stroke-width="0.5"/><polygon points="1568.4,493.0 1574.4,497.0 1574.4,506.0 1568.4,502.0" fill="#f0eee8" stroke="#999" stroke-width="0.5"/><polygon points="1585.8,483.0 1591.8,487.0 1591.8,497.0 1585.8,493.0" fill="#f0eee8" stroke="#999" stroke-width="0.5"/><polygon points="1584.8,505.0 1590.8,509.0 1590.8,518.0 1584.8,514.0" fill="#f0eee8" stroke="#999" stroke-width="0.5"/><polygon points="1488.0,483.0 1551.0,455.0 1548.0,512.0 1490.0,540.0" fill="#ff0000"/><polyline points="1488.0,483.0 1551.0,455.0" fill="none" stroke="#b23a3a" stroke-width="0.8"/><polyline points="1247.0,626.0 1300.0,676.0" fill="none" stroke="#ffffff" stroke-width="3"/><polyline points="1300.0,676.0 1602.0,487.0" fill="none" stroke="#ffffff" stroke-width="3.4"/><polyline points="1602.0,487.0 1547.0,449.0" fill="none" stroke="#ffffff" stroke-width="3"/><polygon points="1118.0,460.0 1411.0,323.0 1550.0,419.0 1244.0,590.0" fill="#ff0000"/><polygon points="1147.0,483.0 1349.0,385.0 1353.0,424.0 1320.0,444.0 1306.0,453.0 1313.0,548.0 1280.0,565.0 1250.0,584.0" fill="#c6c6c6"/><polygon points="1147.0,483.0 1349.0,385.0 1351.0,412.0 1160.0,505.0" fill="#cbcbcb"/><polygon points="1156.1,486.0 1163.1,482.6 1165.1,492.0 1158.1,495.5" fill="#f3f1ea" stroke="#9b9b9b" stroke-width="0.5"/><polygon points="1161.1,503.0 1167.1,500.0 1168.6,507.0 1162.6,510.0" fill="#ecebe4" stroke="#a5a5a5" stroke-width="0.4"/><polygon points="1173.4,477.6 1180.4,474.2 1182.4,483.6 1175.4,487.1" fill="#f3f1ea" stroke="#9b9b9b" stroke-width="0.5"/><polygon points="1178.4,494.6 1184.4,491.6 1185.9,498.6 1179.9,501.6" fill="#ecebe4" stroke="#a5a5a5" stroke-width="0.4"/><polygon points="1190.7,469.2 1197.7,465.8 1199.7,475.2 1192.7,478.7" fill="#f3f1ea" stroke="#9b9b9b" stroke-width="0.5"/><polygon points="1195.7,486.2 1201.7,483.2 1203.2,490.2 1197.2,493.2" fill="#ecebe4" stroke="#a5a5a5" stroke-width="0.4"/><polygon points="1208.0,460.7 1215.0,457.3 1217.0,466.7 1210.0,470.2" fill="#f3f1ea" stroke="#9b9b9b" stroke-width="0.5"/><polygon points="1225.3,452.3 1232.3,448.9 1234.3,458.3 1227.3,461.8" fill="#f3f1ea" stroke="#9b9b9b" stroke-width="0.5"/><polygon points="1242.6,443.9 1249.6,440.5 1251.6,449.9 1244.6,453.4" fill="#f3f1ea" stroke="#9b9b9b" stroke-width="0.5"/><polygon points="1247.6,460.9 1253.6,457.9 1255.1,464.9 1249.1,467.9" fill="#ecebe4" stroke="#a5a5a5" stroke-width="0.4"/><polygon points="1259.9,435.4 1266.9,432.0 1268.9,441.4 1261.9,444.9" fill="#f3f1ea" stroke="#9b9b9b" stroke-width="0.5"/><polygon points="1264.9,452.4 1270.9,449.4 1272.4,456.4 1266.4,459.4" fill="#ecebe4" stroke="#a5a5a5" stroke-width="0.4"/><polygon points="1277.2,427.0 1284.2,423.6 1286.2,433.0 1279.2,436.5" fill="#f3f1ea" stroke="#9b9b9b" stroke-width="0.5"/><polygon points="1282.2,444.0 1288.2,441.0 1289.7,448.0 1283.7,451.0" fill="#ecebe4" stroke="#a5a5a5" stroke-width="0.4"/><polygon points="1294.5,418.6 1301.5,415.2 1303.5,424.6 1296.5,428.1" fill="#f3f1ea" stroke="#9b9b9b" stroke-width="0.5"/><polygon points="1299.5,435.6 1305.5,432.6 1307.0,439.6 1301.0,442.6" fill="#ecebe4" stroke="#a5a5a5" stroke-width="0.4"/><polygon points="1311.8,410.1 1318.8,406.7 1320.8,416.1 1313.8,419.6" fill="#f3f1ea" stroke="#9b9b9b" stroke-width="0.5"/><polygon points="1329.1,401.7 1336.1,398.3 1338.1,407.7 1331.1,411.2" fill="#f3f1ea" stroke="#9b9b9b" stroke-width="0.5"/><polygon points="1184.8,470.5 1214.0,498.0 1232.0,575.0 1205.0,548.0" fill="#c0c0c0"/><polygon points="1215.0,498.0 1319.7,444.6 1313.0,548.0 1280.0,565.0 1227.0,514.0" fill="#c8c8c8"/><polygon points="1216.0,453.0 1231.5,465.0 1238.0,497.0 1222.0,486.0" fill="#bdbdbd"/><polygon points="1231.5,465.0 1271.0,444.6 1276.0,470.0 1238.0,490.0" fill="#cacaca"/><polygon points="1288.6,420.0 1316.0,443.0 1318.0,446.0 1300.0,455.0 1290.0,440.0" fill="#bfbfbf"/><polyline points="1215.0,530.0 1316.0,476.0" fill="none" stroke="#e6e6e6" stroke-width="1.5"/><polyline points="1250.0,584.0 1313.0,548.0" fill="none" stroke="#dcdcdc" stroke-width="1.2"/><polygon points="1212.8,501.4 1280.0,564.6 1250.5,583.6 1231.5,543.8 1227.0,514.4" fill="#ff0000"/><polygon points="1221.0,453.0 1259.0,436.0 1262.0,446.0 1231.5,463.6" fill="#ff0000"/><polyline points="1184.8,470.5 1214.0,498.0" fill="none" stroke="#ffffff" stroke-width="3.6"/><polyline points="1214.0,498.5 1319.7,444.6" fill="none" stroke="#ffffff" stroke-width="3.2"/><polyline points="1216.0,453.0 1231.5,465.0 1271.0,444.6 1259.0,432.5" fill="none" stroke="#ffffff" stroke-width="2.8"/><polyline points="1288.6,420.0 1316.0,443.0" fill="none" stroke="#ffffff" stroke-width="3"/><polyline points="1150.0,484.0 1349.0,387.0" fill="none" stroke="#f2f2f2" stroke-width="1.6"/><polyline points="1348.0,358.0 1443.0,470.0" fill="none" stroke="#b23a3a" stroke-width="0.9"/><polyline points="1351.0,356.0 1446.0,468.0" fill="none" stroke="#b23a3a" stroke-width="0.9"/><polyline points="1374.0,373.0 1415.0,360.0" fill="none" stroke="#b23a3a" stroke-width="0.9"/><polyline points="1385.0,381.0 1447.6,351.0" fill="none" stroke="#b23a3a" stroke-width="0.9"/><polyline points="1408.0,400.7 1488.0,381.0" fill="none" stroke="#b23a3a" stroke-width="0.9"/><polyline points="1424.6,409.0 1487.0,409.0" fill="none" stroke="#b23a3a" stroke-width="0.9"/><polyline points="1320.7,445.7 1374.0,418.0 1422.0,485.0" fill="none" stroke="#b23a3a" stroke-width="0.9"/><polyline points="1332.0,472.0 1376.0,449.0 1401.5,496.5" fill="none" stroke="#b23a3a" stroke-width="0.9"/><polyline points="1355.0,490.7 1378.0,478.0 1401.0,497.0" fill="none" stroke="#b23a3a" stroke-width="0.9"/><polyline points="1306.0,453.0 1313.0,548.0" fill="none" stroke="#b23a3a" stroke-width="0.9"/><polyline points="1349.0,385.0 1353.0,424.0" fill="none" stroke="#b23a3a" stroke-width="0.9"/><polyline points="1415.0,360.0 1500.0,440.0" fill="none" stroke="#b23a3a" stroke-width="0.9"/><polyline points="1447.6,351.0 1530.0,425.0" fill="none" stroke="#b23a3a" stroke-width="0.9"/><polyline points="1459.0,389.0 1487.0,409.0" fill="none" stroke="#b23a3a" stroke-width="0.9"/><polyline points="1488.0,381.0 1519.0,405.0" fill="none" stroke="#b23a3a" stroke-width="0.9"/><polyline points="1443.0,470.0 1500.0,440.0" fill="none" stroke="#b23a3a" stroke-width="0.9"/><polyline points="1401.5,496.5 1443.0,470.0" fill="none" stroke="#b23a3a" stroke-width="0.9"/><polyline points="1320.0,520.0 1360.0,500.0" fill="none" stroke="#b23a3a" stroke-width="0.9"/><polyline points="1360.0,500.0 1395.0,532.0" fill="none" stroke="#b23a3a" stroke-width="0.9"/><polygon points="1375.0,372.0 1415.0,357.0 1422.0,361.5 1385.0,381.0" fill="#d0d0d0"/><polygon points="1448.0,382.0 1462.0,389.0 1463.0,397.0 1450.0,391.0" fill="#d8d8d8"/><polygon points="1486.0,410.0 1520.0,432.0 1520.0,448.0 1488.0,432.0" fill="#d0d0d0"/><polygon points="1490.0,414.0 1494.0,416.6 1494.0,426.0 1490.0,423.5" fill="#f3f1ea" stroke="#999" stroke-width="0.4"/><polygon points="1500.0,420.5 1504.0,423.1 1504.0,432.5 1500.0,430.0" fill="#f3f1ea" stroke="#999" stroke-width="0.4"/><polygon points="1510.0,427.0 1514.0,429.6 1514.0,439.0 1510.0,436.5" fill="#f3f1ea" stroke="#999" stroke-width="0.4"/><polygon points="1336.0,445.0 1350.0,438.0 1352.0,462.0 1340.0,470.0" fill="#cfcfcf"/><polygon points="1340.0,476.0 1352.0,470.0 1354.0,494.0 1344.0,500.0" fill="#cfcfcf"/><polygon points="1118.0,460.0 1411.0,323.0 1411.0,350.0 1146.0,484.0 1130.0,493.0" fill="#ff0000"/><polygon points="1129.1,460.0 1137.3,456.2 1138.8,472.6 1130.6,476.4" fill="#f1efe8" stroke="#c07070" stroke-width="0.5"/><polygon points="1149.1,450.6 1157.1,446.9 1158.6,463.1 1150.6,466.8" fill="#f1efe8" stroke="#c07070" stroke-width="0.5"/><polygon points="1168.7,441.4 1176.6,437.7 1178.1,453.7 1170.2,457.4" fill="#f1efe8" stroke="#c07070" stroke-width="0.5"/><polygon points="1187.9,432.4 1195.7,428.8 1197.2,444.5 1189.4,448.2" fill="#f1efe8" stroke="#c07070" stroke-width="0.5"/><polygon points="1206.8,423.5 1214.4,419.9 1215.9,435.5 1208.3,439.1" fill="#f1efe8" stroke="#c07070" stroke-width="0.5"/><polygon points="1225.3,414.8 1232.7,411.3 1234.2,426.7 1226.8,430.2" fill="#f1efe8" stroke="#c07070" stroke-width="0.5"/><polygon points="1243.4,406.2 1250.7,402.8 1252.2,418.1 1244.9,421.5" fill="#f1efe8" stroke="#c07070" stroke-width="0.5"/><polygon points="1261.1,397.9 1268.3,394.5 1269.8,409.6 1262.6,412.9" fill="#f1efe8" stroke="#c07070" stroke-width="0.5"/><polygon points="1278.5,389.7 1285.6,386.4 1287.1,401.3 1280.0,404.5" fill="#f1efe8" stroke="#c07070" stroke-width="0.5"/><polygon points="1295.6,381.7 1302.5,378.4 1304.0,393.1 1297.1,396.3" fill="#f1efe8" stroke="#c07070" stroke-width="0.5"/><polygon points="1312.3,373.8 1319.0,370.7 1320.5,385.2 1313.8,388.3" fill="#f1efe8" stroke="#c07070" stroke-width="0.5"/><polygon points="1328.6,366.1 1335.2,363.0 1336.7,377.4 1330.1,380.5" fill="#f1efe8" stroke="#c07070" stroke-width="0.5"/><polygon points="1344.5,358.6 1351.0,355.6 1352.5,369.8 1346.0,372.8" fill="#f1efe8" stroke="#c07070" stroke-width="0.5"/><polygon points="1360.1,351.3 1366.5,348.3 1368.0,362.3 1361.6,365.3" fill="#f1efe8" stroke="#c07070" stroke-width="0.5"/><polygon points="1375.3,344.1 1381.6,341.2 1383.1,355.1 1376.8,358.0" fill="#8c1010" stroke="#c07070" stroke-width="0.5"/><polygon points="1390.1,337.1 1396.3,334.3 1397.8,348.0 1391.6,350.9" fill="#8c1010" stroke="#c07070" stroke-width="0.5"/><polygon points="1404.6,330.3 1410.7,327.5 1412.2,341.1 1406.1,343.9" fill="#8c1010" stroke="#c07070" stroke-width="0.5"/><polyline points="1146.0,484.0 1411.0,350.0" fill="none" stroke="#b23a3a" stroke-width="0.8"/><polygon points="1396.0,331.0 1411.0,323.0 1428.0,335.0 1428.0,352.0 1396.0,358.0" fill="#a80808"/><polygon points="1411.0,323.0 1550.0,419.0 1551.5,455.0 1411.0,350.0" fill="#ff0000"/><polygon points="1418.6,333.2 1424.2,337.0 1424.2,350.2 1418.6,346.4" fill="#f1efe8" stroke="#c07070" stroke-width="0.5"/><polygon points="1433.7,343.8 1439.5,347.8 1439.5,361.5 1433.7,357.4" fill="#f1efe8" stroke="#c07070" stroke-width="0.5"/><polygon points="1448.8,354.4 1454.8,358.6 1454.8,372.7 1448.8,368.5" fill="#f1efe8" stroke="#c07070" stroke-width="0.5"/><polygon points="1463.9,365.0 1470.1,369.3 1470.1,383.9 1463.9,379.6" fill="#f1efe8" stroke="#c07070" stroke-width="0.5"/><polygon points="1479.0,375.6 1485.5,380.1 1485.5,395.2 1479.0,390.7" fill="#f1efe8" stroke="#c07070" stroke-width="0.5"/><polygon points="1494.1,386.2 1500.8,390.8 1500.8,406.4 1494.1,401.8" fill="#f1efe8" stroke="#c07070" stroke-width="0.5"/><polygon points="1509.2,396.8 1516.1,401.6 1516.1,417.6 1509.2,412.8" fill="#f1efe8" stroke="#c07070" stroke-width="0.5"/><polygon points="1524.3,407.4 1531.4,412.4 1531.4,428.8 1524.3,423.9" fill="#f1efe8" stroke="#c07070" stroke-width="0.5"/><polygon points="1539.4,418.1 1546.8,423.1 1546.8,440.1 1539.4,435.0" fill="#f1efe8" stroke="#c07070" stroke-width="0.5"/><polyline points="1411.0,323.0 1550.0,419.0" fill="none" stroke="#ff5a5a" stroke-width="1"/><polygon points="1118.0,460.0 1244.0,590.0 1247.0,628.0 1129.0,492.0" fill="#ff0000"/><polygon points="1123.7,472.4 1128.7,477.6 1130.2,492.1 1125.2,486.9" fill="#e80000" stroke="#a85050" stroke-width="0.6"/><polygon points="1134.2,483.3 1139.2,488.5 1140.7,503.3 1135.7,498.1" fill="#e80000" stroke="#a85050" stroke-width="0.6"/><polygon points="1144.7,494.3 1149.7,499.5 1151.2,514.4 1146.2,509.2" fill="#e80000" stroke="#a85050" stroke-width="0.6"/><polygon points="1155.2,505.3 1160.2,510.5 1161.7,525.6 1156.7,520.4" fill="#e80000" stroke="#a85050" stroke-width="0.6"/><polygon points="1165.7,516.2 1170.7,521.4 1172.2,536.8 1167.2,531.6" fill="#e80000" stroke="#a85050" stroke-width="0.6"/><polygon points="1176.2,527.2 1181.2,532.4 1182.7,548.0 1177.7,542.8" fill="#e80000" stroke="#a85050" stroke-width="0.6"/><polygon points="1186.7,538.1 1191.7,543.3 1193.2,559.2 1188.2,554.0" fill="#e80000" stroke="#a85050" stroke-width="0.6"/><polygon points="1197.2,549.1 1202.2,554.3 1203.7,570.4 1198.7,565.2" fill="#e80000" stroke="#a85050" stroke-width="0.6"/><polygon points="1207.7,560.0 1212.7,565.2 1214.2,581.5 1209.2,576.3" fill="#e80000" stroke="#a85050" stroke-width="0.6"/><polygon points="1218.2,571.0 1223.2,576.2 1224.7,592.7 1219.7,587.5" fill="#e80000" stroke="#a85050" stroke-width="0.6"/><polygon points="1228.7,582.0 1233.7,587.2 1235.2,603.9 1230.2,598.7" fill="#e80000" stroke="#a85050" stroke-width="0.6"/><polygon points="1239.2,592.9 1244.2,598.1 1245.7,615.1 1240.7,609.9" fill="#e80000" stroke="#a85050" stroke-width="0.6"/><polyline points="1126.0,460.5 1250.5,583.6" fill="none" stroke="#c85050" stroke-width="0.8"/><polygon points="1244.0,590.0 1550.0,419.0 1551.5,455.0 1247.0,628.0" fill="#ff0000"/><polygon points="1252.5,592.8 1261.0,588.1 1262.0,607.8 1253.5,612.6" fill="#f40000" stroke="#b06060" stroke-width="0.6"/><polygon points="1269.5,583.3 1278.0,578.6 1279.0,598.2 1270.5,603.0" fill="#f40000" stroke="#b06060" stroke-width="0.6"/><polygon points="1286.5,573.8 1295.0,569.0 1296.0,588.7 1287.5,593.4" fill="#f40000" stroke="#b06060" stroke-width="0.6"/><polygon points="1303.5,564.3 1312.0,559.5 1313.0,579.1 1304.5,583.8" fill="#f1efe8" stroke="#b06060" stroke-width="0.6"/><polygon points="1320.5,554.8 1329.0,550.0 1330.0,569.5 1321.5,574.2" fill="#f1efe8" stroke="#b06060" stroke-width="0.6"/><polygon points="1337.5,545.2 1346.0,540.5 1347.0,559.9 1338.5,564.7" fill="#f40000" stroke="#b06060" stroke-width="0.6"/><polygon points="1354.5,535.7 1363.0,531.0 1364.0,550.3 1355.5,555.1" fill="#f40000" stroke="#b06060" stroke-width="0.6"/><polygon points="1371.5,526.2 1380.0,521.4 1381.0,540.8 1372.5,545.5" fill="#f40000" stroke="#b06060" stroke-width="0.6"/><polygon points="1388.5,516.7 1397.0,511.9 1398.0,531.2 1389.5,535.9" fill="#f40000" stroke="#b06060" stroke-width="0.6"/><polygon points="1405.5,507.1 1414.0,502.4 1415.0,521.6 1406.5,526.4" fill="#f40000" stroke="#b06060" stroke-width="0.6"/><polygon points="1422.5,497.6 1431.0,492.9 1432.0,512.0 1423.5,516.8" fill="#f40000" stroke="#b06060" stroke-width="0.6"/><polygon points="1439.5,488.1 1448.0,483.3 1449.0,502.4 1440.5,507.2" fill="#f40000" stroke="#b06060" stroke-width="0.6"/><polygon points="1456.5,478.6 1465.0,473.8 1466.0,492.9 1457.5,497.6" fill="#f40000" stroke="#b06060" stroke-width="0.6"/><polygon points="1473.5,469.1 1482.0,464.3 1483.0,483.3 1474.5,488.0" fill="#f40000" stroke="#b06060" stroke-width="0.6"/><polygon points="1490.5,459.5 1499.0,454.8 1500.0,473.7 1491.5,478.4" fill="#f1efe8" stroke="#b06060" stroke-width="0.6"/><polygon points="1507.5,450.0 1516.0,445.3 1517.0,464.1 1508.5,468.9" fill="#f1efe8" stroke="#b06060" stroke-width="0.6"/><polygon points="1524.5,440.5 1533.0,435.7 1534.0,454.5 1525.5,459.3" fill="#f1efe8" stroke="#b06060" stroke-width="0.6"/><polygon points="1541.5,431.0 1550.0,426.2 1551.0,445.0 1542.5,449.7" fill="#f1efe8" stroke="#b06060" stroke-width="0.6"/><polyline points="1251.0,593.0 1544.0,428.0" fill="none" stroke="#c85050" stroke-width="0.8"/><polyline points="1244.0,590.0 1247.0,628.0" fill="none" stroke="#a04040" stroke-width="0.8"/><polyline points="1118.0,460.0 1244.0,590.0" fill="none" stroke="#ff6060" stroke-width="0.8"/><polyline points="1118.0,460.0 1411.0,323.0" fill="none" stroke="#ff6060" stroke-width="0.8"/><polyline points="1000.0,471.0 1136.5,502.6" fill="none" stroke="#6a6a66" stroke-width="0.9"/><polyline points="1000.0,523.6 1018.5,500.4 1037.0,525.6" fill="none" stroke="#dba835" stroke-width="2.3"/><polyline points="1000.0,523.6 1024.5,511.4 1037.0,525.6" fill="none" stroke="#8a8a80" stroke-width="1.3"/><polyline points="1018.5,500.4 1024.5,511.4" fill="none" stroke="#a8903a" stroke-width="1.2"/><polyline points="1037.0,525.6 1055.5,502.5 1074.0,527.6" fill="none" stroke="#dba835" stroke-width="2.3"/><polyline points="1037.0,525.6 1061.5,513.4 1074.0,527.6" fill="none" stroke="#8a8a80" stroke-width="1.3"/><polyline points="1055.5,502.5 1061.5,513.4" fill="none" stroke="#a8903a" stroke-width="1.2"/><polyline points="1074.0,527.6 1092.5,504.6 1111.0,529.6" fill="none" stroke="#dba835" stroke-width="2.3"/><polyline points="1074.0,527.6 1098.5,515.5 1111.0,529.6" fill="none" stroke="#8a8a80" stroke-width="1.3"/><polyline points="1092.5,504.6 1098.5,515.5" fill="none" stroke="#a8903a" stroke-width="1.2"/><polyline points="1111.0,529.6 1129.5,506.7 1148.0,531.7" fill="none" stroke="#dba835" stroke-width="2.3"/><polyline points="1111.0,529.6 1135.5,517.5 1148.0,531.7" fill="none" stroke="#8a8a80" stroke-width="1.3"/><polyline points="1129.5,506.7 1135.5,517.5" fill="none" stroke="#a8903a" stroke-width="1.2"/><polyline points="1148.0,531.7 1166.5,508.7 1185.0,533.7" fill="none" stroke="#dba835" stroke-width="2.3"/><polyline points="1148.0,531.7 1172.5,519.6 1185.0,533.7" fill="none" stroke="#8a8a80" stroke-width="1.3"/><polyline points="1166.5,508.7 1172.5,519.6" fill="none" stroke="#a8903a" stroke-width="1.2"/><polyline points="1185.0,533.7 1203.5,510.8 1222.0,535.7" fill="none" stroke="#dba835" stroke-width="2.3"/><polyline points="1185.0,533.7 1209.5,521.6 1222.0,535.7" fill="none" stroke="#8a8a80" stroke-width="1.3"/><polyline points="1203.5,510.8 1209.5,521.6" fill="none" stroke="#a8903a" stroke-width="1.2"/><polyline points="1222.0,535.7 1240.5,512.9 1259.0,537.7" fill="none" stroke="#dba835" stroke-width="2.3"/><polyline points="1222.0,535.7 1246.5,523.7 1259.0,537.7" fill="none" stroke="#8a8a80" stroke-width="1.3"/><polyline points="1240.5,512.9 1246.5,523.7" fill="none" stroke="#a8903a" stroke-width="1.2"/><polyline points="1259.0,537.7 1277.5,514.9 1296.0,539.7" fill="none" stroke="#dba835" stroke-width="2.3"/><polyline points="1259.0,537.7 1283.5,525.7 1296.0,539.7" fill="none" stroke="#8a8a80" stroke-width="1.3"/><polyline points="1277.5,514.9 1283.5,525.7" fill="none" stroke="#a8903a" stroke-width="1.2"/><polyline points="1296.0,539.7 1314.5,517.0 1333.0,541.7" fill="none" stroke="#dba835" stroke-width="2.3"/><polyline points="1296.0,539.7 1320.5,527.8 1333.0,541.7" fill="none" stroke="#8a8a80" stroke-width="1.3"/><polyline points="1314.5,517.0 1320.5,527.8" fill="none" stroke="#a8903a" stroke-width="1.2"/><polyline points="1333.0,541.7 1351.5,519.1 1370.0,543.8" fill="none" stroke="#dba835" stroke-width="2.3"/><polyline points="1333.0,541.7 1357.5,529.8 1370.0,543.8" fill="none" stroke="#8a8a80" stroke-width="1.3"/><polyline points="1351.5,519.1 1357.5,529.8" fill="none" stroke="#a8903a" stroke-width="1.2"/><polyline points="1370.0,543.8 1388.5,521.2 1407.0,545.8" fill="none" stroke="#dba835" stroke-width="2.3"/><polyline points="1370.0,543.8 1394.5,531.9 1407.0,545.8" fill="none" stroke="#8a8a80" stroke-width="1.3"/><polyline points="1388.5,521.2 1394.5,531.9" fill="none" stroke="#a8903a" stroke-width="1.2"/><polyline points="1407.0,545.8 1425.5,523.2 1444.0,547.8" fill="none" stroke="#dba835" stroke-width="2.3"/><polyline points="1407.0,545.8 1431.5,533.9 1444.0,547.8" fill="none" stroke="#8a8a80" stroke-width="1.3"/><polyline points="1425.5,523.2 1431.5,533.9" fill="none" stroke="#a8903a" stroke-width="1.2"/><polyline points="1444.0,547.8 1462.5,525.3 1481.0,549.8" fill="none" stroke="#dba835" stroke-width="2.3"/><polyline points="1444.0,547.8 1468.5,536.0 1481.0,549.8" fill="none" stroke="#8a8a80" stroke-width="1.3"/><polyline points="1462.5,525.3 1468.5,536.0" fill="none" stroke="#a8903a" stroke-width="1.2"/><polyline points="1000.0,499.4 1455.0,524.9 1496.0,532.0" fill="none" stroke="#dba835" stroke-width="3.6"/><polyline points="1000.0,499.4 1455.0,524.9" fill="none" stroke="#8a8a80" stroke-width="0.8" transform="translate(0,1.800)"/><polyline points="1006.0,510.3 1460.0,535.5 1496.0,540.0" fill="none" stroke="#a8903a" stroke-width="2.2"/><polyline points="1000.0,523.6 1495.0,551.0" fill="none" stroke="#dba835" stroke-width="3.8"/><polyline points="1000.0,523.6 1495.0,551.0" fill="none" stroke="#8a8a80" stroke-width="0.8" transform="translate(0,2)"/><polyline points="1455.0,524.9 1496.0,551.0" fill="none" stroke="#dba835" stroke-width="2"/><polyline points="1496.0,531.0 1496.0,552.0" fill="none" stroke="#8a8a80" stroke-width="1.5"/><polygon points="1000.0,722.0 1000.0,769.0 1078.5,882.4 1104.0,871.0" fill="#cdc8b6"/><polyline points="1000.0,722.0 1000.0,746.0" fill="none" stroke="#96968f" stroke-width="1.04"/><polyline points="1000.0,722.0 1004.1,752.2" fill="none" stroke="#96968f" stroke-width="1.3"/><polyline points="1004.7,728.8 1004.1,752.2" fill="none" stroke="#96968f" stroke-width="1.04"/><polyline points="1004.1,752.2 1009.5,735.5" fill="none" stroke="#96968f" stroke-width="1.3"/><polyline points="1009.5,735.5 1008.3,758.4" fill="none" stroke="#96968f" stroke-width="1.04"/><polyline points="1009.5,735.5 1012.4,764.5" fill="none" stroke="#96968f" stroke-width="1.3"/><polyline points="1014.2,742.3 1012.4,764.5" fill="none" stroke="#96968f" stroke-width="1.04"/><polyline points="1012.4,764.5 1018.9,749.1" fill="none" stroke="#96968f" stroke-width="1.3"/><polyline points="1018.9,749.1 1016.5,770.7" fill="none" stroke="#96968f" stroke-width="1.04"/><polyline points="1018.9,749.1 1020.7,776.9" fill="none" stroke="#96968f" stroke-width="1.3"/><polyline points="1023.6,755.9 1020.7,776.9" fill="none" stroke="#96968f" stroke-width="1.04"/><polyline points="1020.7,776.9 1028.4,762.6" fill="none" stroke="#96968f" stroke-width="1.3"/><polyline points="1028.4,762.6 1024.8,783.1" fill="none" stroke="#96968f" stroke-width="1.04"/><polyline points="1028.4,762.6 1029.0,789.3" fill="none" stroke="#96968f" stroke-width="1.3"/><polyline points="1033.1,769.4 1029.0,789.3" fill="none" stroke="#96968f" stroke-width="1.04"/><polyline points="1029.0,789.3 1037.8,776.2" fill="none" stroke="#96968f" stroke-width="1.3"/><polyline points="1037.8,776.2 1033.1,795.5" fill="none" stroke="#96968f" stroke-width="1.04"/><polyline points="1037.8,776.2 1037.2,801.6" fill="none" stroke="#96968f" stroke-width="1.3"/><polyline points="1042.5,783.0 1037.2,801.6" fill="none" stroke="#96968f" stroke-width="1.04"/><polyline points="1037.2,801.6 1047.3,789.7" fill="none" stroke="#96968f" stroke-width="1.3"/><polyline points="1047.3,789.7 1041.4,807.8" fill="none" stroke="#96968f" stroke-width="1.04"/><polyline points="1047.3,789.7 1045.5,814.0" fill="none" stroke="#96968f" stroke-width="1.3"/><polyline points="1052.0,796.5 1045.5,814.0" fill="none" stroke="#96968f" stroke-width="1.04"/><polyline points="1045.5,814.0 1056.7,803.3" fill="none" stroke="#96968f" stroke-width="1.3"/><polyline points="1056.7,803.3 1049.6,820.2" fill="none" stroke="#96968f" stroke-width="1.04"/><polyline points="1056.7,803.3 1053.8,826.4" fill="none" stroke="#96968f" stroke-width="1.3"/><polyline points="1061.5,810.0 1053.8,826.4" fill="none" stroke="#96968f" stroke-width="1.04"/><polyline points="1053.8,826.4 1066.2,816.8" fill="none" stroke="#96968f" stroke-width="1.3"/><polyline points="1066.2,816.8 1057.9,832.5" fill="none" stroke="#96968f" stroke-width="1.04"/><polyline points="1066.2,816.8 1062.0,838.7" fill="none" stroke="#96968f" stroke-width="1.3"/><polyline points="1070.9,823.6 1062.0,838.7" fill="none" stroke="#96968f" stroke-width="1.04"/><polyline points="1062.0,838.7 1075.6,830.4" fill="none" stroke="#96968f" stroke-width="1.3"/><polyline points="1075.6,830.4 1066.2,844.9" fill="none" stroke="#96968f" stroke-width="1.04"/><polyline points="1075.6,830.4 1070.3,851.1" fill="none" stroke="#96968f" stroke-width="1.3"/><polyline points="1080.4,837.1 1070.3,851.1" fill="none" stroke="#96968f" stroke-width="1.04"/><polyline points="1070.3,851.1 1085.1,843.9" fill="none" stroke="#96968f" stroke-width="1.3"/><polyline points="1085.1,843.9 1074.5,857.3" fill="none" stroke="#96968f" stroke-width="1.04"/><polyline points="1085.1,843.9 1078.6,863.5" fill="none" stroke="#96968f" stroke-width="1.3"/><polyline points="1089.8,850.7 1078.6,863.5" fill="none" stroke="#96968f" stroke-width="1.04"/><polyline points="1078.6,863.5 1094.5,857.5" fill="none" stroke="#96968f" stroke-width="1.3"/><polyline points="1094.5,857.5 1082.7,869.6" fill="none" stroke="#96968f" stroke-width="1.04"/><polyline points="1094.5,857.5 1086.9,875.8" fill="none" stroke="#96968f" stroke-width="1.3"/><polyline points="1099.3,864.2 1086.9,875.8" fill="none" stroke="#96968f" stroke-width="1.04"/><polyline points="1086.9,875.8 1104.0,871.0" fill="none" stroke="#96968f" stroke-width="1.3"/><polyline points="1104.0,871.0 1091.0,882.0" fill="none" stroke="#96968f" stroke-width="1.04"/><polyline points="1000.0,746.0 1000.0,769.0" fill="none" stroke="#a2a29b" stroke-width="1.04"/><polyline points="1000.0,746.0 1003.6,774.2" fill="none" stroke="#a2a29b" stroke-width="1.3"/><polyline points="1004.1,752.2 1003.6,774.2" fill="none" stroke="#a2a29b" stroke-width="1.04"/><polyline points="1003.6,774.2 1008.3,758.4" fill="none" stroke="#a2a29b" stroke-width="1.3"/><polyline points="1008.3,758.4 1007.1,779.3" fill="none" stroke="#a2a29b" stroke-width="1.04"/><polyline points="1008.3,758.4 1010.7,784.5" fill="none" stroke="#a2a29b" stroke-width="1.3"/><polyline points="1012.4,764.5 1010.7,784.5" fill="none" stroke="#a2a29b" stroke-width="1.04"/><polyline points="1010.7,784.5 1016.5,770.7" fill="none" stroke="#a2a29b" stroke-width="1.3"/><polyline points="1016.5,770.7 1014.3,789.6" fill="none" stroke="#a2a29b" stroke-width="1.04"/><polyline points="1016.5,770.7 1017.8,794.8" fill="none" stroke="#a2a29b" stroke-width="1.3"/><polyline points="1020.7,776.9 1017.8,794.8" fill="none" stroke="#a2a29b" stroke-width="1.04"/><polyline points="1017.8,794.8 1024.8,783.1" fill="none" stroke="#a2a29b" stroke-width="1.3"/><polyline points="1024.8,783.1 1021.4,799.9" fill="none" stroke="#a2a29b" stroke-width="1.04"/><polyline points="1024.8,783.1 1025.0,805.1" fill="none" stroke="#a2a29b" stroke-width="1.3"/><polyline points="1029.0,789.3 1025.0,805.1" fill="none" stroke="#a2a29b" stroke-width="1.04"/><polyline points="1025.0,805.1 1033.1,795.5" fill="none" stroke="#a2a29b" stroke-width="1.3"/><polyline points="1033.1,795.5 1028.5,810.2" fill="none" stroke="#a2a29b" stroke-width="1.04"/><polyline points="1033.1,795.5 1032.1,815.4" fill="none" stroke="#a2a29b" stroke-width="1.3"/><polyline points="1037.2,801.6 1032.1,815.4" fill="none" stroke="#a2a29b" stroke-width="1.04"/><polyline points="1032.1,815.4 1041.4,807.8" fill="none" stroke="#a2a29b" stroke-width="1.3"/><polyline points="1041.4,807.8 1035.7,820.5" fill="none" stroke="#a2a29b" stroke-width="1.04"/><polyline points="1041.4,807.8 1039.2,825.7" fill="none" stroke="#a2a29b" stroke-width="1.3"/><polyline points="1045.5,814.0 1039.2,825.7" fill="none" stroke="#a2a29b" stroke-width="1.04"/><polyline points="1039.2,825.7 1049.6,820.2" fill="none" stroke="#a2a29b" stroke-width="1.3"/><polyline points="1049.6,820.2 1042.8,830.9" fill="none" stroke="#a2a29b" stroke-width="1.04"/><polyline points="1049.6,820.2 1046.4,836.0" fill="none" stroke="#a2a29b" stroke-width="1.3"/><polyline points="1053.8,826.4 1046.4,836.0" fill="none" stroke="#a2a29b" stroke-width="1.04"/><polyline points="1046.4,836.0 1057.9,832.5" fill="none" stroke="#a2a29b" stroke-width="1.3"/><polyline points="1057.9,832.5 1050.0,841.2" fill="none" stroke="#a2a29b" stroke-width="1.04"/><polyline points="1057.9,832.5 1053.5,846.3" fill="none" stroke="#a2a29b" stroke-width="1.3"/><polyline points="1062.0,838.7 1053.5,846.3" fill="none" stroke="#a2a29b" stroke-width="1.04"/><polyline points="1053.5,846.3 1066.2,844.9" fill="none" stroke="#a2a29b" stroke-width="1.3"/><polyline points="1066.2,844.9 1057.1,851.5" fill="none" stroke="#a2a29b" stroke-width="1.04"/><polyline points="1066.2,844.9 1060.7,856.6" fill="none" stroke="#a2a29b" stroke-width="1.3"/><polyline points="1070.3,851.1 1060.7,856.6" fill="none" stroke="#a2a29b" stroke-width="1.04"/><polyline points="1060.7,856.6 1074.5,857.3" fill="none" stroke="#a2a29b" stroke-width="1.3"/><polyline points="1074.5,857.3 1064.2,861.8" fill="none" stroke="#a2a29b" stroke-width="1.04"/><polyline points="1074.5,857.3 1067.8,866.9" fill="none" stroke="#a2a29b" stroke-width="1.3"/><polyline points="1078.6,863.5 1067.8,866.9" fill="none" stroke="#a2a29b" stroke-width="1.04"/><polyline points="1067.8,866.9 1082.7,869.6" fill="none" stroke="#a2a29b" stroke-width="1.3"/><polyline points="1082.7,869.6 1071.4,872.1" fill="none" stroke="#a2a29b" stroke-width="1.04"/><polyline points="1082.7,869.6 1074.9,877.2" fill="none" stroke="#a2a29b" stroke-width="1.3"/><polyline points="1086.9,875.8 1074.9,877.2" fill="none" stroke="#a2a29b" stroke-width="1.04"/><polyline points="1074.9,877.2 1091.0,882.0" fill="none" stroke="#a2a29b" stroke-width="1.3"/><polyline points="1091.0,882.0 1078.5,882.4" fill="none" stroke="#a2a29b" stroke-width="1.04"/><polyline points="1000.0,734.0 1000.0,757.0" fill="none" stroke="#b4b2a6" stroke-width="0.6400000000000001"/><polyline points="1000.0,734.0 1003.9,762.7" fill="none" stroke="#b4b2a6" stroke-width="0.8"/><polyline points="1004.4,740.5 1003.9,762.7" fill="none" stroke="#b4b2a6" stroke-width="0.6400000000000001"/><polyline points="1003.9,762.7 1008.8,746.9" fill="none" stroke="#b4b2a6" stroke-width="0.8"/><polyline points="1008.8,746.9 1007.7,768.4" fill="none" stroke="#b4b2a6" stroke-width="0.6400000000000001"/><polyline points="1008.8,746.9 1011.6,774.0" fill="none" stroke="#b4b2a6" stroke-width="0.8"/><polyline points="1013.2,753.4 1011.6,774.0" fill="none" stroke="#b4b2a6" stroke-width="0.6400000000000001"/><polyline points="1011.6,774.0 1017.6,759.8" fill="none" stroke="#b4b2a6" stroke-width="0.8"/><polyline points="1017.6,759.8 1015.5,779.7" fill="none" stroke="#b4b2a6" stroke-width="0.6400000000000001"/><polyline points="1017.6,759.8 1019.3,785.4" fill="none" stroke="#b4b2a6" stroke-width="0.8"/><polyline points="1022.0,766.3 1019.3,785.4" fill="none" stroke="#b4b2a6" stroke-width="0.6400000000000001"/><polyline points="1019.3,785.4 1026.5,772.7" fill="none" stroke="#b4b2a6" stroke-width="0.8"/><polyline points="1026.5,772.7 1023.2,791.1" fill="none" stroke="#b4b2a6" stroke-width="0.6400000000000001"/><polyline points="1026.5,772.7 1027.0,796.8" fill="none" stroke="#b4b2a6" stroke-width="0.8"/><polyline points="1030.9,779.2 1027.0,796.8" fill="none" stroke="#b4b2a6" stroke-width="0.6400000000000001"/><polyline points="1027.0,796.8 1035.3,785.6" fill="none" stroke="#b4b2a6" stroke-width="0.8"/><polyline points="1035.3,785.6 1030.9,802.5" fill="none" stroke="#b4b2a6" stroke-width="0.6400000000000001"/><polyline points="1035.3,785.6 1034.8,808.1" fill="none" stroke="#b4b2a6" stroke-width="0.8"/><polyline points="1039.7,792.1 1034.8,808.1" fill="none" stroke="#b4b2a6" stroke-width="0.6400000000000001"/><polyline points="1034.8,808.1 1044.1,798.5" fill="none" stroke="#b4b2a6" stroke-width="0.8"/><polyline points="1044.1,798.5 1038.6,813.8" fill="none" stroke="#b4b2a6" stroke-width="0.6400000000000001"/><polyline points="1044.1,798.5 1042.5,819.5" fill="none" stroke="#b4b2a6" stroke-width="0.8"/><polyline points="1048.5,805.0 1042.5,819.5" fill="none" stroke="#b4b2a6" stroke-width="0.6400000000000001"/><polyline points="1042.5,819.5 1052.9,811.5" fill="none" stroke="#b4b2a6" stroke-width="0.8"/><polyline points="1052.9,811.5 1046.4,825.2" fill="none" stroke="#b4b2a6" stroke-width="0.6400000000000001"/><polyline points="1052.9,811.5 1050.2,830.9" fill="none" stroke="#b4b2a6" stroke-width="0.8"/><polyline points="1057.3,817.9 1050.2,830.9" fill="none" stroke="#b4b2a6" stroke-width="0.6400000000000001"/><polyline points="1050.2,830.9 1061.7,824.4" fill="none" stroke="#b4b2a6" stroke-width="0.8"/><polyline points="1061.7,824.4 1054.1,836.5" fill="none" stroke="#b4b2a6" stroke-width="0.6400000000000001"/><polyline points="1061.7,824.4 1058.0,842.2" fill="none" stroke="#b4b2a6" stroke-width="0.8"/><polyline points="1066.1,830.8 1058.0,842.2" fill="none" stroke="#b4b2a6" stroke-width="0.6400000000000001"/><polyline points="1058.0,842.2 1070.5,837.3" fill="none" stroke="#b4b2a6" stroke-width="0.8"/><polyline points="1070.5,837.3 1061.8,847.9" fill="none" stroke="#b4b2a6" stroke-width="0.6400000000000001"/><polyline points="1070.5,837.3 1065.7,853.6" fill="none" stroke="#b4b2a6" stroke-width="0.8"/><polyline points="1075.0,843.7 1065.7,853.6" fill="none" stroke="#b4b2a6" stroke-width="0.6400000000000001"/><polyline points="1065.7,853.6 1079.4,850.2" fill="none" stroke="#b4b2a6" stroke-width="0.8"/><polyline points="1079.4,850.2 1069.5,859.3" fill="none" stroke="#b4b2a6" stroke-width="0.6400000000000001"/><polyline points="1079.4,850.2 1073.4,865.0" fill="none" stroke="#b4b2a6" stroke-width="0.8"/><polyline points="1083.8,856.6 1073.4,865.0" fill="none" stroke="#b4b2a6" stroke-width="0.6400000000000001"/><polyline points="1073.4,865.0 1088.2,863.1" fill="none" stroke="#b4b2a6" stroke-width="0.8"/><polyline points="1088.2,863.1 1077.3,870.6" fill="none" stroke="#b4b2a6" stroke-width="0.6400000000000001"/><polyline points="1088.2,863.1 1081.1,876.3" fill="none" stroke="#b4b2a6" stroke-width="0.8"/><polyline points="1092.6,869.5 1081.1,876.3" fill="none" stroke="#b4b2a6" stroke-width="0.6400000000000001"/><polyline points="1081.1,876.3 1097.0,876.0" fill="none" stroke="#b4b2a6" stroke-width="0.8"/><polyline points="1097.0,876.0 1085.0,882.0" fill="none" stroke="#b4b2a6" stroke-width="0.6400000000000001"/><polyline points="1000.0,722.0 1104.0,871.0" fill="none" stroke="#c9a740" stroke-width="1.8"/><polyline points="1000.0,746.0 1091.0,882.0" fill="none" stroke="#c9a740" stroke-width="1.8"/><polyline points="1000.0,769.0 1078.5,882.4" fill="none" stroke="#c9a740" stroke-width="1.8"/><polygon points="1087.8,850.0 1120.0,851.0 1126.0,861.7 1101.6,872.0" fill="#a0a09e"/><polygon points="1101.6,872.0 1126.0,861.7 1115.5,876.0" fill="#858583"/><polygon points="1124.0,862.0 1131.0,864.0 1128.0,871.0 1121.0,869.0" fill="#8a8a88"/><polygon points="1064.7,881.3 1108.5,884.8 1113.0,891.7 1062.0,892.0" fill="#989896"/><polygon points="1059.0,890.0 1113.0,891.7 1108.5,910.0 1069.0,909.0 1059.0,898.6" fill="#868684"/><polygon points="1108.5,884.8 1113.0,891.7 1108.5,910.0 1104.0,905.0" fill="#747472"/><polygon points="1064.5,909.0 1074.0,909.5 1073.5,915.0 1066.0,914.5" fill="#7c7c7a"/><polygon points="1105.0,911.0 1115.5,912.0 1114.5,918.5 1106.0,918.0" fill="#7c7c7a"/><g stroke="#111" fill="none" stroke-width="1.200"><path d="M1001 621l15 19M1003 630c2-8 12-10 15-3 2 6-6 11-12 8M1005 627l8 2M1002 636l6-2"/></g></svg>
<div style="left:1011px;top:163px;width:483px;height:186px;background:rgba(84,84,82,0.800);"></div>
<span style="left:1028.5px;top:168.0px;font-size:12px;line-height:16px;font-weight:700;color:#fff;letter-spacing:-0.008px;">Calendar Week 9 - Thursday, 03.03.2022</span>
<span style="left:1028px;top:191.0px;font-size:12px;line-height:16px;color:#fff;">WBS</span>
<span style="left:1077px;top:191.0px;font-size:12px;line-height:16px;color:#fff;">Name</span>
<span style="left:1184px;top:191.0px;font-size:12px;line-height:16px;color:#fff;">Start</span>
<span style="left:1254.4px;top:191.0px;font-size:12px;line-height:16px;color:#fff;">Finish</span>
<span style="left:1324px;top:191.0px;font-size:12px;line-height:16px;color:#fff;">Duration</span>
<div style="left:1015px;top:211px;width:8px;height:21px;background:#f06464;"></div>
<span style="left:1028.5px;top:214.0px;font-size:12px;line-height:16px;color:#fff;">1</span>
<span style="left:1078px;top:214.0px;font-size:12px;line-height:16px;font-weight:700;color:#fff;">Sample Schedule</span>
<span style="left:1184px;top:214.0px;font-size:12px;line-height:16px;color:#fff;">01.01.2022</span>
<span style="left:1254.4px;top:214.0px;font-size:12px;line-height:16px;color:#fff;">08.05.2022</span>
<span style="left:1324px;top:214.0px;font-size:12px;line-height:16px;color:#fff;">90.00 days</span>
<div style="left:1392px;top:217px;width:50px;height:10px;background:#e6e6e4;"></div>
<div style="left:1393px;top:218px;width:23px;height:8px;background:#7474ee;"></div>
<span style="left:1450.5px;top:214.0px;font-size:12px;line-height:16px;color:#fff;">48 %</span>
<div style="left:1015px;top:234px;width:8px;height:21px;background:#f06464;"></div>
<span style="left:1028.5px;top:237.0px;font-size:12px;line-height:16px;color:#fff;">1.1</span>
<span style="left:1077px;top:237.0px;font-size:12px;line-height:16px;font-weight:700;color:#fff;">Construction</span>
<span style="left:1184px;top:237.0px;font-size:12px;line-height:16px;color:#fff;">03.01.2022</span>
<span style="left:1254.4px;top:237.0px;font-size:12px;line-height:16px;color:#fff;">09.04.2022</span>
<span style="left:1324px;top:237.0px;font-size:12px;line-height:16px;color:#fff;">70.00 days</span>
<div style="left:1392px;top:240px;width:50px;height:10px;background:#e6e6e4;"></div>
<div style="left:1393px;top:241px;width:30px;height:8px;background:#7474ee;"></div>
<span style="left:1450.5px;top:237.0px;font-size:12px;line-height:16px;color:#fff;">62 %</span>
<div style="left:1015px;top:257px;width:8px;height:21px;background:#f06464;"></div>
<span style="left:1028.5px;top:260.0px;font-size:12px;line-height:16px;color:#fff;">1.1.3</span>
<span style="left:1077px;top:260.0px;font-size:12px;line-height:16px;font-weight:700;color:#fff;">OG02</span>
<span style="left:1184px;top:260.0px;font-size:12px;line-height:16px;color:#fff;">14.01.2022</span>
<span style="left:1254.4px;top:260.0px;font-size:12px;line-height:16px;color:#fff;">08.03.2022</span>
<span style="left:1324px;top:260.0px;font-size:12px;line-height:16px;color:#fff;">37.88 days</span>
<div style="left:1392px;top:263px;width:50px;height:10px;background:#e6e6e4;"></div>
<div style="left:1393px;top:264px;width:44px;height:8px;background:#7474ee;"></div>
<span style="left:1450.5px;top:260.0px;font-size:12px;line-height:16px;color:#fff;">91 %</span>
<div style="left:1015px;top:280px;width:8px;height:21px;background:#f06464;"></div>
<span style="left:1028.5px;top:283.0px;font-size:12px;line-height:16px;color:#fff;">1.1.3.4</span>
<span style="left:1077px;top:283.0px;font-size:12px;line-height:16px;color:#fff;">Stützen</span>
<span style="left:1184px;top:283.0px;font-size:12px;line-height:16px;color:#fff;">02.03.2022</span>
<span style="left:1254.4px;top:283.0px;font-size:12px;line-height:16px;color:#fff;">04.03.2022</span>
<span style="left:1324px;top:283.0px;font-size:12px;line-height:16px;color:#fff;">2.06 days</span>
<div style="left:1392px;top:286px;width:50px;height:10px;background:#e6e6e4;"></div>
<div style="left:1393px;top:287px;width:32px;height:8px;background:#7474ee;"></div>
<span style="left:1450.5px;top:283.0px;font-size:12px;line-height:16px;color:#fff;">67 %</span>
<div style="left:1015px;top:303px;width:8px;height:21px;background:#f06464;"></div>
<span style="left:1028.5px;top:306.0px;font-size:12px;line-height:16px;color:#fff;">1.1.3.5</span>
<span style="left:1077px;top:306.0px;font-size:12px;line-height:16px;color:#fff;">Decken</span>
<span style="left:1184px;top:306.0px;font-size:12px;line-height:16px;color:#fff;">02.03.2022</span>
<span style="left:1254.4px;top:306.0px;font-size:12px;line-height:16px;color:#fff;">08.03.2022</span>
<span style="left:1324px;top:306.0px;font-size:12px;line-height:16px;color:#fff;">4.88 days</span>
<div style="left:1392px;top:309px;width:50px;height:10px;background:#e6e6e4;"></div>
<div style="left:1393px;top:310px;width:14px;height:8px;background:#7474ee;"></div>
<span style="left:1450.5px;top:306.0px;font-size:12px;line-height:16px;color:#fff;">29 %</span>
<span style="left:1028px;top:329.0px;font-size:12px;line-height:16px;color:#fff;">... more active tasks</span>
<svg style="left:1803px;top:1015px;" width="20" height="20" viewBox="0 0 20 20"><g fill="none" stroke="#1a1a1a" stroke-width="1.500"><path d="M3 6c0-2 12-2 12 0v8c0 2-12 2-12 0z"/><path d="M3 6c0 2 12 2 12 0M3 10c0 2 12 2 12 0"/><path d="M1.500 4l15 13" stroke-width="1.700"/></g></svg>
<svg style="left:1835.5px;top:1016.5px;" width="17" height="17" viewBox="0 0 24 24"><path fill="#d0d0d0" d="M19.350 10.040C18.670 6.590 15.640 4 12 4 9.110 4 6.600 5.640 5.350 8.040 2.340 8.360 0 10.910 0 14c0 3.310 2.690 6 6 6h13c2.760 0 5-2.240 5-5 0-2.640-2.050-4.780-4.650-4.960zM19 18H6c-2.210 0-4-1.790-4-4s1.790-4 4-4h.71C7.370 7.690 9.480 6 12 6c3.040 0 5.500 2.460 5.500 5.500v.5H19c1.660 0 3 1.340 3 3s-1.340 3-3 3zM8 13h2.550v3h2.900v-3H16l-4-4z"/></svg>
<svg style="left:1866.0px;top:1015.5px;" width="18" height="18" viewBox="0 0 24 24"><path fill="#1a1a1a" d="M12 22c1.100 0 2-.9 2-2h-4c0 1.100.9 2 2 2zm6-6v-5c0-3.070-1.630-5.640-4.500-6.320V4c0-.83-.67-1.500-1.500-1.500s-1.500.67-1.500 1.500v.68C7.640 5.360 6 7.920 6 11v5l-2 2v1h16v-1l-2-2zm-2 1H8v-6c0-2.480 1.510-4.500 4-4.500s4 2.020 4 4.500v6z"/></svg>
<svg style="left:1897.5px;top:1016.5px;" width="17" height="17" viewBox="0 0 24 24"><path fill="#1a1a1a" d="M4 4h16v12H5.170L4 17.170V4m0-2c-1.100 0-1.990.9-1.990 2L2 22l4-4h14c1.100 0 2-.9 2-2V4c0-1.100-.9-2-2-2H4zm2 10h12v2H6v-2zm0-3h12v2H6V9zm0-3h12v2H6V6z"/></svg>
<div style="left:1417.5px;top:614.5px;width:490px;height:405.5px;background:#f2f2f2;box-shadow:0 3px 14px rgba(0,0,0,0.350),0 0 0 1px rgba(90,90,90,0.550);"></div>
<div style="left:1418px;top:615px;width:489px;height:30px;background:#ffffff;"></div>
<svg style="left:1426px;top:621px;" width="16" height="16" viewBox="0 0 16 16"><rect width="16" height="16" fill="#143c52"/><path d="M2.500 9 L13 4.500 L13 8 L2.500 12.500Z" fill="#3fa0d8"/></svg>
<span style="left:1447.5px;top:621.5px;font-size:12px;line-height:16px;color:#8a8a8a;letter-spacing:-0.224px;">Charts</span>
<svg style="left:1785px;top:620px;" width="110" height="20" viewBox="0 0 110 20"><g fill="none" stroke="#555" stroke-width="1"><path d="M3 9.500h10" stroke="#ddd"/><rect x="48.500" y="4.500" width="9" height="9"/><path d="M93.500 3.500l11 11M104.500 3.500l-11 11"/></g></svg>
<div style="left:1428.5px;top:649.5px;width:474px;height:31px;background:#ffffff;border-radius:4px;"></div>
<svg style="left:1435.5px;top:655.5px;" width="19" height="19" viewBox="0 0 24 24"><path fill="#1a1a1a" d="M18 15v3H6v-3H4v3c0 1.100.9 2 2 2h12c1.100 0 2-.9 2-2v-3h-2zM7 9l1.410 1.410L11 7.830V16h2V7.830l2.590 2.580L17 9l-5-5-5 5z"/></svg>
<svg style="left:1843.5px;top:655.0px;" width="20" height="20" viewBox="0 0 24 24"><path fill="#1a1a1a" d="M17.650 6.350C16.200 4.900 14.210 4 12 4c-4.420 0-7.990 3.580-7.990 8s3.570 8 7.990 8c3.730 0 6.840-2.550 7.730-6h-2.080c-.82 2.330-3.040 4-5.650 4-3.310 0-6-2.690-6-6s2.690-6 6-6c1.660 0 3.140.69 4.220 1.780L13 11h7V4l-2.350 2.350z"/></svg>
<svg style="left:1874.5px;top:655.0px;" width="20" height="20" viewBox="0 0 24 24"><path fill="#1a1a1a" d="M19.43 12.98c.04-.32.07-.64.07-.98 0-.34-.03-.66-.07-.98l2.11-1.65c.19-.15.24-.42.12-.64l-2-3.46c-.09-.16-.26-.25-.44-.25-.06 0-.12.01-.17.03l-2.49 1c-.52-.4-1.08-.73-1.69-.98l-.38-2.65C14.46 2.18 14.25 2 14 2h-4c-.25 0-.46.18-.49.42l-.38 2.65c-.61.25-1.17.59-1.69.98l-2.49-1c-.06-.02-.12-.03-.18-.03-.17 0-.34.09-.43.25l-2 3.46c-.13.22-.07.49.12.64l2.11 1.65c-.04.32-.07.65-.07.98 0 .33.03.66.07.98l-2.11 1.65c-.19.15-.24.42-.12.64l2 3.46c.09.16.26.25.44.25.06 0 .12-.01.17-.03l2.49-1c.52.4 1.08.73 1.69.98l.38 2.65c.03.24.24.42.49.42h4c.25 0 .46-.18.49-.42l.38-2.65c.61-.25 1.17-.59 1.69-.98l2.49 1c.06.02.12.03.18.03.17 0 .34-.09.43-.25l2-3.46c.12-.22.07-.49-.12-.64l-2.11-1.65zm-1.98-1.71c.04.31.05.52.05.73 0 .21-.02.43-.05.73l-.14 1.13.89.7 1.08.84-.7 1.21-1.27-.51-1.04-.42-.9.68c-.43.32-.84.56-1.25.73l-1.06.43-.16 1.13-.2 1.35h-1.4l-.19-1.35-.16-1.13-1.06-.43c-.43-.18-.83-.41-1.23-.71l-.91-.7-1.06.43-1.27.51-.7-1.21 1.08-.84.89-.7-.14-1.13c-.03-.31-.05-.54-.05-.74s.02-.43.05-.73l.14-1.13-.89-.7-1.08-.84.7-1.21 1.27.51 1.04.42.9-.68c.43-.32.84-.56 1.25-.73l1.06-.43.16-1.13.2-1.35h1.39l.19 1.35.16 1.13 1.06.43c.43.18.83.41 1.23.71l.91.7 1.06-.43 1.27-.51.7 1.21-1.07.85-.89.7.14 1.13zM12 8c-2.21 0-4 1.79-4 4s1.79 4 4 4 4-1.79 4-4-1.79-4-4-4zm0 6c-1.1 0-2-.9-2-2s.9-2 2-2 2 .9 2 2-.9 2-2 2z"/></svg>
<div style="left:1428.5px;top:686px;width:474px;height:293.5px;background:#ffffff;border-radius:4px;"></div>
<div style="left:1428.5px;top:984.5px;width:474px;height:31.5px;background:#ffffff;border-radius:4px;"></div>
<div style="left:1432.5px;top:988.5px;width:79px;height:23px;background:#e3e3e3;border-radius:4px;"></div>
<span style="left:1436px;top:992.0px;font-size:13px;line-height:17px;letter-spacing:0.233px;">2/16/22</span>
<svg style="left:1496px;top:996.5px;" width="10" height="8" viewBox="0 0 10 8"><path d="M1 1.500l4 4 4-4" fill="none" stroke="#1a1a1a" stroke-width="2.200"/></svg>
<div style="left:1819px;top:988.5px;width:79.5px;height:23px;background:#e3e3e3;border-radius:4px;"></div>
<span style="left:1822.5px;top:992.0px;font-size:13px;line-height:17px;letter-spacing:0.233px;">3/31/22</span>
<svg style="left:1883px;top:996.5px;" width="10" height="8" viewBox="0 0 10 8"><path d="M1 1.500l4 4 4-4" fill="none" stroke="#1a1a1a" stroke-width="2.200"/></svg>
<span style="left:1610.5px;top:992.0px;font-size:13px;line-height:17px;letter-spacing:0.403px;">[ All ]</span>
<span style="left:1678px;top:992.0px;font-size:13px;line-height:17px;letter-spacing:0.227px;">[ Visible ]</span>
<svg style="left:1516px;top:997px;" width="68" height="2" viewBox="0 0 68 2"><path d="M0 0.500h68" stroke="#aaa" stroke-width="1" stroke-dasharray="1 2"/></svg>
<svg style="left:1746px;top:997px;" width="68" height="2" viewBox="0 0 68 2"><path d="M0 0.500h68" stroke="#aaa" stroke-width="1" stroke-dasharray="1 2"/></svg>
<svg style="left:1428px;top:686px" width="474" height="294" viewBox="1428 686 474 294"><path d="M1535.4 769.3H1802" stroke="#d4d4d4" stroke-width="1"/><path d="M1535.4 775.9H1802" stroke="#ececec" stroke-width="1"/><path d="M1535.4 782.4H1802" stroke="#ececec" stroke-width="1"/><path d="M1535.4 789.0H1802" stroke="#ececec" stroke-width="1"/><path d="M1535.4 795.5H1802" stroke="#d4d4d4" stroke-width="1"/><path d="M1535.4 802.1H1802" stroke="#ececec" stroke-width="1"/><path d="M1535.4 808.6H1802" stroke="#ececec" stroke-width="1"/><path d="M1535.4 815.2H1802" stroke="#ececec" stroke-width="1"/><path d="M1535.4 821.8H1802" stroke="#d4d4d4" stroke-width="1"/><path d="M1535.4 828.3H1802" stroke="#ececec" stroke-width="1"/><path d="M1535.4 834.9H1802" stroke="#ececec" stroke-width="1"/><path d="M1535.4 841.4H1802" stroke="#ececec" stroke-width="1"/><path d="M1535.4 848.0H1802" stroke="#d4d4d4" stroke-width="1"/><path d="M1535.4 854.6H1802" stroke="#ececec" stroke-width="1"/><path d="M1535.4 861.1H1802" stroke="#ececec" stroke-width="1"/><path d="M1535.4 867.7H1802" stroke="#ececec" stroke-width="1"/><path d="M1535.4 874.2H1802" stroke="#d4d4d4" stroke-width="1"/><path d="M1535.4 880.8H1802" stroke="#ececec" stroke-width="1"/><path d="M1535.4 887.4H1802" stroke="#ececec" stroke-width="1"/><path d="M1535.4 893.9H1802" stroke="#ececec" stroke-width="1"/><path d="M1535.4 900.5H1802" stroke="#d4d4d4" stroke-width="1"/><path d="M1535.4 907.0H1802" stroke="#ececec" stroke-width="1"/><path d="M1535.4 913.6H1802" stroke="#ececec" stroke-width="1"/><path d="M1535.4 920.1H1802" stroke="#ececec" stroke-width="1"/><path d="M1535.4 926.7H1802" stroke="#d4d4d4" stroke-width="1"/><path d="M1535.4 769.3V926.7" stroke="#d0d0d0" stroke-width="1"/><path d="M1569.3 769.3V926.7" stroke="#d0d0d0" stroke-width="1"/><path d="M1610.3 769.3V926.7" stroke="#d0d0d0" stroke-width="1"/><path d="M1651 769.3V926.7" stroke="#d0d0d0" stroke-width="1"/><path d="M1692 769.3V926.7" stroke="#d0d0d0" stroke-width="1"/><path d="M1733 769.3V926.7" stroke="#d0d0d0" stroke-width="1"/><path d="M1774.5 769.3V926.7" stroke="#d0d0d0" stroke-width="1"/><path d="M1802 769.3V926.7" stroke="#d0d0d0" stroke-width="1"/><path d="M1530.4 769.7h5" stroke="#bbb" stroke-width="1"/><path d="M1530.4 789.2h5" stroke="#bbb" stroke-width="1"/><path d="M1530.4 808.8h5" stroke="#bbb" stroke-width="1"/><path d="M1530.4 828.3h5" stroke="#bbb" stroke-width="1"/><path d="M1530.4 847.9h5" stroke="#bbb" stroke-width="1"/><path d="M1530.4 867.4h5" stroke="#bbb" stroke-width="1"/><path d="M1530.4 886.9h5" stroke="#bbb" stroke-width="1"/><path d="M1530.4 906.5h5" stroke="#bbb" stroke-width="1"/><path d="M1530.4 926.0h5" stroke="#bbb" stroke-width="1"/><rect x="1541.3" y="807.4" width="3.500" height="119.3" fill="#1e9be0"/><rect x="1547.3" y="921.6" width="3.500" height="5.1" fill="#1e9be0"/><rect x="1552.8" y="921.6" width="3.500" height="5.1" fill="#1e9be0"/><rect x="1570.5" y="852.6" width="3.500" height="74.1" fill="#1e9be0"/><rect x="1576.5" y="817.1" width="3.500" height="109.6" fill="#1e9be0"/><rect x="1582.4" y="887.8" width="3.500" height="38.9" fill="#1e9be0"/><rect x="1588.3" y="884.4" width="3.500" height="42.3" fill="#1e9be0"/><rect x="1593.8" y="887.8" width="3.500" height="38.9" fill="#1e9be0"/><rect x="1611.2" y="781.1" width="3.500" height="145.6" fill="#1e9be0"/><rect x="1617.1" y="875.1" width="3.500" height="51.6" fill="#1e9be0"/><rect x="1623.0" y="874.2" width="3.500" height="52.5" fill="#1e9be0"/><rect x="1628.9" y="874.2" width="3.500" height="52.5" fill="#1e9be0"/><rect x="1634.9" y="782.0" width="3.500" height="144.7" fill="#1e9be0"/><rect x="1652.2" y="809.1" width="3.500" height="117.6" fill="#1e9be0"/><rect x="1658.1" y="865.3" width="3.500" height="61.4" fill="#1e9be0"/><rect x="1664.1" y="866.2" width="3.500" height="60.5" fill="#1e9be0"/><rect x="1670.0" y="865.3" width="3.500" height="61.4" fill="#1e9be0"/><rect x="1675.9" y="865.3" width="3.500" height="61.4" fill="#1e9be0"/><rect x="1681.8" y="843.3" width="3.500" height="83.4" fill="#1e9be0"/><rect x="1693.3" y="880.2" width="3.500" height="46.5" fill="#1e9be0"/><rect x="1699.2" y="880.2" width="3.500" height="46.5" fill="#1e9be0"/><rect x="1705.1" y="883.5" width="3.500" height="43.2" fill="#1e9be0"/><rect x="1711.0" y="883.5" width="3.500" height="43.2" fill="#1e9be0"/><rect x="1717.0" y="841.2" width="3.500" height="85.5" fill="#1e9be0"/><rect x="1734.7" y="923.7" width="3.500" height="3.0" fill="#1e9be0"/><rect x="1740.7" y="924.2" width="3.500" height="2.5" fill="#1e9be0"/><rect x="1746.6" y="924.6" width="3.500" height="2.1" fill="#1e9be0"/><rect x="1752.5" y="924.6" width="3.500" height="2.1" fill="#1e9be0"/><rect x="1758.4" y="923.7" width="3.500" height="3.0" fill="#1e9be0"/><rect x="1775.8" y="923.7" width="3.500" height="3.0" fill="#1e9be0"/><rect x="1781.7" y="924.6" width="3.500" height="2.1" fill="#1e9be0"/><rect x="1787.6" y="924.6" width="3.500" height="2.1" fill="#1e9be0"/><rect x="1793.6" y="924.6" width="3.500" height="2.1" fill="#1e9be0"/><path d="M1629.800 769.3V926.7" stroke="#e05050" stroke-width="1.300"/><polyline fill="none" stroke="#1e9be0" stroke-width="2" points="1536.3,925.9 1543.0,914.0 1549.0,914.0 1554.5,913.2 1560.4,913.2 1566.3,913.2 1572.2,903.9 1578.2,894.1 1584.1,889.0 1590.0,886.5 1595.5,882.7 1601.4,882.7 1607.4,882.7 1612.9,868.7 1618.8,863.2 1624.7,858.1 1630.6,853.1 1636.6,838.3 1642.5,838.3 1648.4,838.3 1653.9,824.3 1659.8,820.1 1665.8,814.6 1671.7,808.2 1677.6,802.3 1683.5,802.3 1689.5,802.3 1695.0,798.1 1700.9,793.4 1706.8,790.4 1712.7,784.9 1718.7,776.0 1724.6,776.0 1730.5,776.0 1736.4,775.6 1742.4,775.6 1748.3,775.2 1754.2,775.2 1760.1,774.8 1766.1,774.8 1771.6,774.8 1777.5,774.8 1783.4,774.4 1789.3,773.9 1795.3,771.4 1801.2,771.4"/><circle cx="1536.3" cy="925.9" r="2.600" fill="#1e9be0"/><circle cx="1543.0" cy="914.0" r="2.600" fill="#1e9be0"/><circle cx="1549.0" cy="914.0" r="2.600" fill="#1e9be0"/><circle cx="1554.5" cy="913.2" r="2.600" fill="#1e9be0"/><circle cx="1560.4" cy="913.2" r="2.600" fill="#1e9be0"/><circle cx="1566.3" cy="913.2" r="2.600" fill="#1e9be0"/><circle cx="1572.2" cy="903.9" r="2.600" fill="#1e9be0"/><circle cx="1578.2" cy="894.1" r="2.600" fill="#1e9be0"/><circle cx="1584.1" cy="889.0" r="2.600" fill="#1e9be0"/><circle cx="1590.0" cy="886.5" r="2.600" fill="#1e9be0"/><circle cx="1595.5" cy="882.7" r="2.600" fill="#1e9be0"/><circle cx="1601.4" cy="882.7" r="2.600" fill="#1e9be0"/><circle cx="1607.4" cy="882.7" r="2.600" fill="#1e9be0"/><circle cx="1612.9" cy="868.7" r="2.600" fill="#1e9be0"/><circle cx="1618.8" cy="863.2" r="2.600" fill="#1e9be0"/><circle cx="1624.7" cy="858.1" r="2.600" fill="#1e9be0"/><circle cx="1630.6" cy="853.1" r="2.600" fill="#1e9be0"/><circle cx="1636.6" cy="838.3" r="2.600" fill="#1e9be0"/><circle cx="1642.5" cy="838.3" r="2.600" fill="#1e9be0"/><circle cx="1648.4" cy="838.3" r="2.600" fill="#1e9be0"/><circle cx="1653.9" cy="824.3" r="2.600" fill="#1e9be0"/><circle cx="1659.8" cy="820.1" r="2.600" fill="#1e9be0"/><circle cx="1665.8" cy="814.6" r="2.600" fill="#1e9be0"/><circle cx="1671.7" cy="808.2" r="2.600" fill="#1e9be0"/><circle cx="1677.6" cy="802.3" r="2.600" fill="#1e9be0"/><circle cx="1683.5" cy="802.3" r="2.600" fill="#1e9be0"/><circle cx="1689.5" cy="802.3" r="2.600" fill="#1e9be0"/><circle cx="1695.0" cy="798.1" r="2.600" fill="#1e9be0"/><circle cx="1700.9" cy="793.4" r="2.600" fill="#1e9be0"/><circle cx="1706.8" cy="790.4" r="2.600" fill="#1e9be0"/><circle cx="1712.7" cy="784.9" r="2.600" fill="#1e9be0"/><circle cx="1718.7" cy="776.0" r="2.600" fill="#1e9be0"/><circle cx="1724.6" cy="776.0" r="2.600" fill="#1e9be0"/><circle cx="1730.5" cy="776.0" r="2.600" fill="#1e9be0"/><circle cx="1736.4" cy="775.6" r="2.600" fill="#1e9be0"/><circle cx="1742.4" cy="775.6" r="2.600" fill="#1e9be0"/><circle cx="1748.3" cy="775.2" r="2.600" fill="#1e9be0"/><circle cx="1754.2" cy="775.2" r="2.600" fill="#1e9be0"/><circle cx="1760.1" cy="774.8" r="2.600" fill="#1e9be0"/><circle cx="1766.1" cy="774.8" r="2.600" fill="#1e9be0"/><circle cx="1771.6" cy="774.8" r="2.600" fill="#1e9be0"/><circle cx="1777.5" cy="774.8" r="2.600" fill="#1e9be0"/><circle cx="1783.4" cy="774.4" r="2.600" fill="#1e9be0"/><circle cx="1789.3" cy="773.9" r="2.600" fill="#1e9be0"/><circle cx="1795.3" cy="771.4" r="2.600" fill="#1e9be0"/><circle cx="1801.2" cy="771.4" r="2.600" fill="#1e9be0"/><rect x="1564.300" y="735.500" width="7" height="7.500" fill="#1e9be0" stroke="#222" stroke-width="1"/><rect x="1682.500" y="735.500" width="7.500" height="8" fill="#1e9be0"/></svg>
<span style="left:1577.7px;top:732.0px;font-size:12px;line-height:16px;color:#222;letter-spacing:0.426px;">cpVolume - Sum</span>
<span style="left:1695.5px;top:732.0px;font-size:12px;line-height:16px;color:#222;letter-spacing:0.350px;">cpVolume</span>
<span style="left:1806.5px;top:761.8px;font-size:12px;line-height:16px;color:#222;letter-spacing:0.300px;">6000.0</span>
<span style="left:1806.5px;top:788.0px;font-size:12px;line-height:16px;color:#222;letter-spacing:0.300px;">5000.0</span>
<span style="left:1806.5px;top:814.3px;font-size:12px;line-height:16px;color:#222;letter-spacing:0.300px;">4000.0</span>
<span style="left:1806.5px;top:840.5px;font-size:12px;line-height:16px;color:#222;letter-spacing:0.300px;">3000.0</span>
<span style="left:1806.5px;top:866.7px;font-size:12px;line-height:16px;color:#222;letter-spacing:0.300px;">2000.0</span>
<span style="left:1806.5px;top:892.9px;font-size:12px;line-height:16px;color:#222;letter-spacing:0.300px;">1000.0</span>
<span style="left:1806.5px;top:919.2px;font-size:12px;line-height:16px;color:#222;letter-spacing:0.107px;">0.0</span>
<span style="left:1520.5px;top:761.5px;font-size:12px;line-height:16px;font-weight:700;color:#222;letter-spacing:0.166px;">...</span>
<span style="left:1520.5px;top:781.0px;font-size:12px;line-height:16px;font-weight:700;color:#222;letter-spacing:0.166px;">...</span>
<span style="left:1520.5px;top:800.6px;font-size:12px;line-height:16px;font-weight:700;color:#222;letter-spacing:0.166px;">...</span>
<span style="left:1520.5px;top:820.1px;font-size:12px;line-height:16px;font-weight:700;color:#222;letter-spacing:0.166px;">...</span>
<span style="left:1520.5px;top:839.7px;font-size:12px;line-height:16px;font-weight:700;color:#222;letter-spacing:0.166px;">...</span>
<span style="left:1520.5px;top:859.2px;font-size:12px;line-height:16px;font-weight:700;color:#222;letter-spacing:0.166px;">...</span>
<span style="left:1520.5px;top:878.7px;font-size:12px;line-height:16px;font-weight:700;color:#222;letter-spacing:0.166px;">...</span>
<span style="left:1520.5px;top:898.3px;font-size:12px;line-height:16px;font-weight:700;color:#222;letter-spacing:0.166px;">...</span>
<span style="left:1520.5px;top:917.8px;font-size:12px;line-height:16px;font-weight:700;color:#222;letter-spacing:0.166px;">...</span>
<span style="left:1537.5px;top:931.0px;font-size:12px;line-height:16px;color:#222;letter-spacing:0.279px;">CW ...</span>
<span style="left:1572.7px;top:931.0px;font-size:12px;line-height:16px;color:#222;letter-spacing:0.279px;">CW ...</span>
<span style="left:1612.9px;top:931.0px;font-size:12px;line-height:16px;color:#222;letter-spacing:0.279px;">CW ...</span>
<span style="left:1654px;top:931.0px;font-size:12px;line-height:16px;color:#222;letter-spacing:0.279px;">CW ...</span>
<span style="left:1695.4px;top:931.0px;font-size:12px;line-height:16px;color:#222;letter-spacing:0.279px;">CW ...</span>
<span style="left:1736.9px;top:931.0px;font-size:12px;line-height:16px;color:#222;letter-spacing:0.279px;">CW ...</span>
<span style="left:1634px;top:774.0px;font-size:12px;line-height:16px;color:#111;letter-spacing:0.345px;">03.03.2022</span>
<span style="left:1472.500px;top:848px;font-size:12px;font-weight:700;color:#222;line-height:14px;transform:translate(-50%,-50%) rotate(-90deg);letter-spacing:-0.200px">Sum</span>
<span style="left:1860px;top:849px;font-size:12px;font-weight:700;color:#222;line-height:14px;transform:translate(-50%,-50%) rotate(-90deg);letter-spacing:0.350px">Performance/Day</span>
</body></html>
